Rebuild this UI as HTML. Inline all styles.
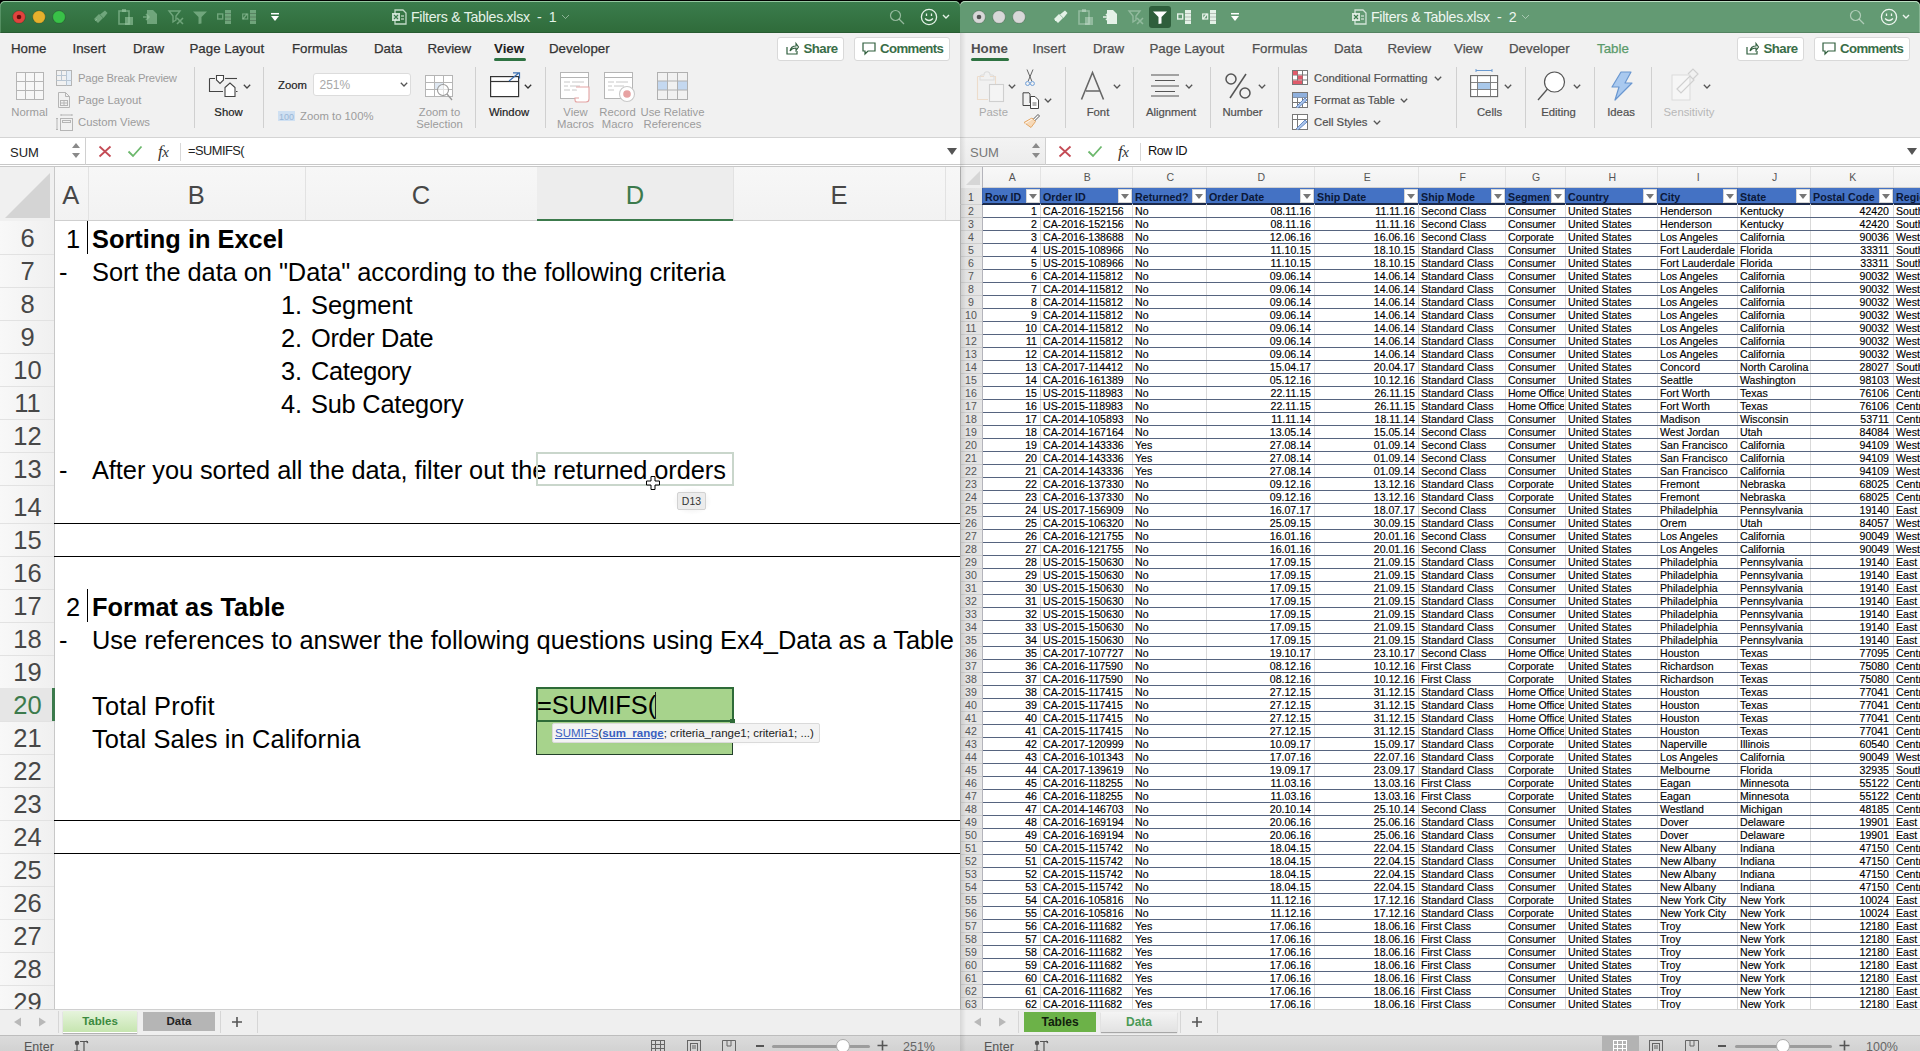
<!DOCTYPE html><html><head><meta charset="utf-8"><style>
html,body{margin:0;padding:0;}
body{width:1920px;height:1051px;overflow:hidden;position:relative;background:#fff;font-family:"Liberation Sans",sans-serif;}
.a{position:absolute;}
.t{position:absolute;white-space:nowrap;line-height:1;}
svg.a{overflow:visible;}
</style></head><body>
<div class="a" style="left:0px;top:0px;width:960px;height:8px;background:#000;"></div>
<div class="a" style="left:0px;top:1px;width:960px;height:32px;background:linear-gradient(#3b7d4d,#2f6b3a);border-radius:5px 5px 0 0;box-shadow:inset 0 1px 0 rgba(180,225,190,0.75), inset 1px 0 0 rgba(150,200,160,0.35);"></div>
<div class="a" style="left:0px;top:32px;width:960px;height:1px;background:rgba(0,0,0,0.15);"></div>
<svg class="a" style="left:12px;top:10px;" width="14" height="14" viewBox="0 0 14 14"><circle cx="7" cy="7" r="6.3" fill="#e0443e" stroke="rgba(0,0,0,0.25)" stroke-width="0.8"/><circle cx="7" cy="7" r="2.3" fill="#6b0b0b"/></svg>
<svg class="a" style="left:32px;top:10px;" width="14" height="14" viewBox="0 0 14 14"><circle cx="7" cy="7" r="6.3" fill="#e6b12d" stroke="rgba(0,0,0,0.25)" stroke-width="0.8"/></svg>
<svg class="a" style="left:52px;top:10px;" width="14" height="14" viewBox="0 0 14 14"><circle cx="7" cy="7" r="6.3" fill="#39c148" stroke="rgba(0,0,0,0.25)" stroke-width="0.8"/></svg>
<svg class="a" style="left:93px;top:10px;" width="16" height="14" viewBox="0 0 16 14"><path d="M1 9 L6 4 L10 8 L5 13 Z" fill="rgba(160,205,170,0.55)"/><path d="M7 4.5 L12 0.5 L14.5 3 L10.5 8 Z" fill="rgba(160,205,170,0.55)"/><path d="M2 11 L4 9" stroke="rgba(160,205,170,0.55)"/></svg>
<svg class="a" style="left:118px;top:8px;" width="16" height="18" viewBox="0 0 16 18"><rect x="1" y="3" width="10" height="13" fill="none" stroke="rgba(160,205,170,0.55)" stroke-width="1.6"/><rect x="4" y="1" width="4" height="3" fill="rgba(160,205,170,0.55)"/><rect x="7" y="9" width="8" height="8" fill="rgba(160,205,170,0.55)"/></svg>
<svg class="a" style="left:142px;top:9px;" width="16" height="16" viewBox="0 0 16 16"><path d="M5 1 H11 L15 5 V15 H5 Z" fill="rgba(160,205,170,0.55)"/><path d="M1 8 H7 M4 5 L7 8 L4 11" stroke="rgba(160,205,170,0.55)" stroke-width="1.5" fill="none"/></svg>
<svg class="a" style="left:168px;top:10px;" width="16" height="15" viewBox="0 0 16 15"><path d="M1 1 H12 L8 6 V10 L5 12 V6 Z" fill="none" stroke="rgba(160,205,170,0.55)" stroke-width="1.4"/><path d="M9 8 L15 14 M15 8 L9 14" stroke="rgba(160,205,170,0.55)" stroke-width="1.6"/></svg>
<svg class="a" style="left:193px;top:11px;" width="14" height="13" viewBox="0 0 14 13"><path d="M0 0.5 H14 L8.5 6 V12.5 L5.5 13 V6 Z" fill="rgba(160,205,170,0.55)"/></svg>
<svg class="a" style="left:217px;top:10px;" width="15" height="14" viewBox="0 0 15 14"><rect x="0.7" y="4" width="5" height="5" fill="none" stroke="rgba(160,205,170,0.55)" stroke-width="1.4"/><rect x="8" y="0" width="6" height="14" fill="rgba(160,205,170,0.55)"/><path d="M8 3.5H14M8 7H14M8 10.5H14" stroke="rgba(0,0,0,0.25)" stroke-width="0.8"/></svg>
<svg class="a" style="left:242px;top:10px;" width="15" height="14" viewBox="0 0 15 14"><path d="M1 9 L5 4" stroke="rgba(160,205,170,0.55)" stroke-width="1.4"/><rect x="0.7" y="4" width="5" height="5" fill="none" stroke="rgba(160,205,170,0.55)" stroke-width="1.2"/><rect x="8" y="0" width="6" height="14" fill="rgba(160,205,170,0.55)"/><path d="M8 3.5H14M8 7H14M8 10.5H14" stroke="rgba(0,0,0,0.25)" stroke-width="0.8"/></svg>
<svg class="a" style="left:271px;top:13px;" width="8" height="9" viewBox="0 0 8 9"><path d="M0 0.7 H8" stroke="#fff" stroke-width="1.5"/><path d="M0 3 H8 L4 8 Z" fill="#fff"/></svg>
<svg class="a" style="left:391px;top:9px;" width="16" height="16" viewBox="0 0 16 16"><path d="M4 1 H12 L15 4 V15 H4 Z" fill="none" stroke="#e4f2e7" stroke-width="1.3" opacity="0.8"/><rect x="1" y="4" width="8" height="8" fill="#e4f2e7" opacity="0.85"/><path d="M3 6 L7 10 M7 6 L3 10" stroke="#3b7d4d" stroke-width="1.2"/><path d="M10 7 H13 M10 10 H13" stroke="#e4f2e7" stroke-width="1"/></svg>
<div class="t" style="left:411px;top:10.48px;font-size:14.2px;color:#e4f2e7;font-weight:normal;letter-spacing:-0.3px;">Filters &amp; Tables.xlsx&nbsp; -&nbsp; 1</div>
<svg class="a" style="left:561px;top:14px;" width="9" height="6" viewBox="0 0 9 6"><path d="M1 1 L4.5 4.5 L8 1" stroke="#e4f2e7" stroke-width="1" fill="none" opacity="0.5"/></svg>
<svg class="a" style="left:889px;top:9px;" width="16" height="16" viewBox="0 0 16 16"><circle cx="6.5" cy="6.5" r="5" fill="none" stroke="#e4f2e7" stroke-width="1.2" opacity="0.55"/><path d="M10 10 L15 15" stroke="#e4f2e7" stroke-width="1.3" opacity="0.55"/></svg>
<svg class="a" style="left:920px;top:8px;" width="18" height="18" viewBox="0 0 18 18"><circle cx="9" cy="9" r="7.6" fill="none" stroke="#e4f2e7" stroke-width="1.3"/><path d="M6.5 5.5 V8 M11.5 5.5 V8" stroke="#e4f2e7" stroke-width="1.3"/><path d="M5 10.5 Q9 14.5 13 10.5" stroke="#e4f2e7" stroke-width="1.3" fill="none"/></svg>
<svg class="a" style="left:942px;top:14px;" width="8" height="6" viewBox="0 0 8 6"><path d="M1 1 L4 4 L7 1" stroke="#e4f2e7" stroke-width="1.4" fill="none"/></svg>
<div class="a" style="left:0px;top:33px;width:960px;height:105px;background:#f1f1f1;"></div>
<div class="a" style="left:0px;top:137px;width:960px;height:1px;background:#d4d4d4;"></div>
<div class="t" style="left:11px;top:41.74px;font-size:13.3px;color:#333333;font-weight:normal;-webkit-text-stroke:0.25px #333333;">Home</div>
<div class="t" style="left:72.5px;top:41.74px;font-size:13.3px;color:#333333;font-weight:normal;-webkit-text-stroke:0.25px #333333;">Insert</div>
<div class="t" style="left:133px;top:41.74px;font-size:13.3px;color:#333333;font-weight:normal;-webkit-text-stroke:0.25px #333333;">Draw</div>
<div class="t" style="left:189.5px;top:41.74px;font-size:13.3px;color:#333333;font-weight:normal;-webkit-text-stroke:0.25px #333333;">Page Layout</div>
<div class="t" style="left:292px;top:41.74px;font-size:13.3px;color:#333333;font-weight:normal;-webkit-text-stroke:0.25px #333333;">Formulas</div>
<div class="t" style="left:374px;top:41.74px;font-size:13.3px;color:#333333;font-weight:normal;-webkit-text-stroke:0.25px #333333;">Data</div>
<div class="t" style="left:427.5px;top:41.74px;font-size:13.3px;color:#333333;font-weight:normal;-webkit-text-stroke:0.25px #333333;">Review</div>
<div class="t" style="left:494px;top:41.74px;font-size:13.3px;color:#222;font-weight:bold;">View</div>
<div class="t" style="left:549px;top:41.74px;font-size:13.3px;color:#333333;font-weight:normal;-webkit-text-stroke:0.25px #333333;">Developer</div>
<div class="a" style="left:777px;top:37px;width:66.5px;height:24px;background:#fff;border:1px solid #d9d9d9;border-radius:3px;box-sizing:border-box;"></div>
<svg class="a" style="left:786px;top:42px;" width="13" height="13" viewBox="0 0 13 13"><path d="M1 5 V12 H11 V9" stroke="#2f5e3c" stroke-width="1.2" fill="none"/><path d="M4 9 Q5 4 10 4 V1.5 L12.5 5 L10 8.5 V6 Q6 6 4 9 Z" fill="none" stroke="#2f5e3c" stroke-width="1.1"/></svg>
<div class="t" style="left:803.5px;top:41.83px;font-size:13.2px;color:#3a6e48;font-weight:bold;letter-spacing:-0.5px;">Share</div>
<div class="a" style="left:854px;top:37px;width:96px;height:24px;background:#fff;border:1px solid #d9d9d9;border-radius:3px;box-sizing:border-box;"></div>
<svg class="a" style="left:862px;top:42px;" width="14" height="13" viewBox="0 0 14 13"><path d="M1 1 H13 V9 H6 L3 12 V9 H1 Z" stroke="#2f5e3c" stroke-width="1.2" fill="none"/></svg>
<div class="t" style="left:880px;top:41.83px;font-size:13.2px;color:#3a6e48;font-weight:bold;letter-spacing:-0.6px;">Comments</div>
<div class="a" style="left:494px;top:58px;width:31.5px;height:2.8px;background:#2e7342;border-radius:1.5px;"></div>
<svg class="a" style="left:16px;top:72px;" width="28" height="28" viewBox="0 0 28 28"><rect x="0.5" y="0.5" width="27" height="27" fill="#f7f7f7" stroke="#b5b5b5"/><path d="M9.5 0.5V27.5M18.5 0.5V27.5M0.5 9.5H27.5M0.5 18.5H27.5" stroke="#b5b5b5"/></svg>
<div class="t" style="left:-270.5px;width:600px;text-align:center;top:107.43px;font-size:11.3px;color:#9c9c9c;font-weight:normal;">Normal</div>
<svg class="a" style="left:56px;top:70px;" width="16" height="16" viewBox="0 0 16 16"><rect x="11" y="1" width="4.5" height="14" fill="#e3edf7"/><rect x="0.5" y="0.5" width="15" height="15" fill="none" stroke="#b5b5b5"/><path d="M5.5 0.5V10.5M10.5 0.5V15.5M0.5 5.5H10.5M0.5 10.5H15.5" stroke="#b9c6d3"/></svg>
<div class="t" style="left:78px;top:72.93px;font-size:11.3px;color:#9c9c9c;font-weight:normal;letter-spacing:-0.2px;">Page Break Preview</div>
<svg class="a" style="left:58px;top:92px;" width="12" height="16" viewBox="0 0 12 16"><path d="M0.5 0.5H7.5L11.5 4.5V15.5H0.5Z" fill="none" stroke="#b5b5b5"/><path d="M7.5 0.5V4.5H11.5" fill="none" stroke="#b5b5b5"/><rect x="2.5" y="8.5" width="7" height="5" fill="none" stroke="#b5b5b5"/><path d="M6 8.5V13.5M2.5 11H9.5" stroke="#b5b5b5"/></svg>
<div class="t" style="left:78px;top:94.93px;font-size:11.3px;color:#9c9c9c;font-weight:normal;">Page Layout</div>
<svg class="a" style="left:56px;top:113px;" width="17" height="18" viewBox="0 0 17 18"><path d="M1 5V17M0 5.5H2M0 16.5H2" stroke="#b5b5b5"/><path d="M5 1V3M16 1V3M5 2H16" stroke="#b5b5b5"/><rect x="4.5" y="5.5" width="12" height="12" fill="none" stroke="#b5b5b5"/><rect x="6.5" y="7.5" width="8" height="2" fill="none" stroke="#b5b5b5"/></svg>
<div class="t" style="left:78px;top:116.93px;font-size:11.3px;color:#9c9c9c;font-weight:normal;">Custom Views</div>
<div class="a" style="left:194px;top:67px;width:1px;height:61px;background:#d0d0d0;"></div>
<svg class="a" style="left:209px;top:75px;" width="29" height="23" viewBox="0 0 29 23"><path d="M0.5 3.5V16.5H14" stroke="#444" fill="none" stroke-width="1.1"/><path d="M7.5 0.5H14.5V5L11 8.5L7.5 5Z" fill="#fff" stroke="#444" stroke-width="1.1"/><path d="M16 3.5H28" stroke="#444" stroke-width="1.1"/><path d="M16 12.5 L21 8 L26 12.5V21.5H16Z" fill="#fff" stroke="#444" stroke-width="1.1"/><path d="M27 16.5H28.5M0.5 3.5H6" stroke="#444" stroke-width="1.1"/></svg>
<svg class="a" style="left:243px;top:83.5px;" width="8" height="5" viewBox="0 0 8 5"><path d="M0.8 0.8 L4 4 L7.2 0.8" stroke="#444" stroke-width="1.3" fill="none"/></svg>
<div class="t" style="left:-71.5px;width:600px;text-align:center;top:107.43px;font-size:11.3px;color:#222;font-weight:normal;-webkit-text-stroke:0.2px #222;">Show</div>
<div class="a" style="left:263px;top:67px;width:1px;height:61px;background:#d0d0d0;"></div>
<div class="t" style="left:278px;top:79.93px;font-size:11.3px;color:#222;font-weight:normal;-webkit-text-stroke:0.2px #222;">Zoom</div>
<div class="a" style="left:313px;top:72.5px;width:98px;height:23px;background:#fff;border:1px solid #dcdcdc;border-radius:3px;box-sizing:border-box;"></div>
<div class="t" style="left:319.5px;top:78.84px;font-size:12px;color:#a8a8a8;font-weight:normal;">251%</div>
<svg class="a" style="left:400px;top:82.0px;" width="8" height="5" viewBox="0 0 8 5"><path d="M0.8 0.8 L4 4 L7.2 0.8" stroke="#555" stroke-width="1.3" fill="none"/></svg>
<svg class="a" style="left:277.5px;top:111px;" width="17" height="10" viewBox="0 0 17 10"><rect x="0" y="0" width="17" height="10" fill="#cfe0f2"/><text x="8.5" y="8.5" font-size="9" text-anchor="middle" fill="#9ab6d6" font-family="Liberation Sans">100</text></svg>
<div class="t" style="left:300px;top:111.43px;font-size:11.3px;color:#9c9c9c;font-weight:normal;">Zoom to 100%</div>
<svg class="a" style="left:425px;top:75px;" width="31" height="27" viewBox="0 0 31 27"><rect x="0.5" y="0.5" width="27" height="21" fill="#fff" stroke="#b5b5b5"/><path d="M9.5 0.5V21.5M18.5 0.5V21.5M0.5 7.5H27.5M0.5 14.5H27.5" stroke="#b5b5b5"/><rect x="10" y="8" width="8" height="6" fill="#dfe8f2"/><circle cx="18" cy="15" r="5.5" fill="rgba(255,255,255,0.6)" stroke="#999" stroke-width="1.1"/><path d="M22 19 L27 25" stroke="#999" stroke-width="1.3"/></svg>
<div class="t" style="left:139.5px;width:600px;text-align:center;top:107.43px;font-size:11.3px;color:#9c9c9c;font-weight:normal;">Zoom to</div>
<div class="t" style="left:139.5px;width:600px;text-align:center;top:119.43px;font-size:11.3px;color:#9c9c9c;font-weight:normal;">Selection</div>
<div class="a" style="left:475px;top:67px;width:1px;height:61px;background:#d0d0d0;"></div>
<svg class="a" style="left:490px;top:72px;" width="31" height="26" viewBox="0 0 31 26"><rect x="0.6" y="4.6" width="28" height="20" fill="#fff" stroke="#333" stroke-width="1.2"/><path d="M0.6 9.5H28.6" stroke="#333" stroke-width="1.2"/><path d="M19 9 L29 0.8 M23 0.8 H29.5 V6.5" stroke="#3a6fb0" stroke-width="1.2" fill="none"/></svg>
<svg class="a" style="left:524px;top:83.5px;" width="8" height="5" viewBox="0 0 8 5"><path d="M0.8 0.8 L4 4 L7.2 0.8" stroke="#333" stroke-width="1.3" fill="none"/></svg>
<div class="t" style="left:209px;width:600px;text-align:center;top:107.43px;font-size:11.3px;color:#222;font-weight:normal;-webkit-text-stroke:0.2px #222;">Window</div>
<div class="a" style="left:544.5px;top:67px;width:1px;height:61px;background:#d0d0d0;"></div>
<svg class="a" style="left:560px;top:72px;" width="32" height="31" viewBox="0 0 32 31"><rect x="0.5" y="0.5" width="28" height="26" fill="#fff" stroke="#b5b5b5"/><path d="M0.5 5.5H28.5" stroke="#b5b5b5"/><path d="M4 10H10M12 10H24M4 14H8M10 14H20M4 18H10M12 18H22" stroke="#c8c8c8"/><path d="M16 15 H29 V27 Q29 30 26 30 H17 Q15 30 15 28 V26 H19" fill="#fff" stroke="#e3a3a3" stroke-width="1.1"/></svg>
<div class="t" style="left:275.5px;width:600px;text-align:center;top:107.43px;font-size:11.3px;color:#9c9c9c;font-weight:normal;">View</div>
<div class="t" style="left:275.5px;width:600px;text-align:center;top:119.43px;font-size:11.3px;color:#9c9c9c;font-weight:normal;">Macros</div>
<svg class="a" style="left:604px;top:72px;" width="32" height="31" viewBox="0 0 32 31"><rect x="0.5" y="0.5" width="28" height="26" fill="#fff" stroke="#b5b5b5"/><path d="M0.5 5.5H28.5" stroke="#b5b5b5"/><path d="M4 10H10M12 10H24M4 14H8M10 14H20M4 18H10" stroke="#c8c8c8"/><circle cx="23" cy="22" r="7.5" fill="#fff" stroke="#c9c9c9" stroke-width="1.1"/><circle cx="23" cy="22" r="3.8" fill="#e7a2a2"/></svg>
<div class="t" style="left:317.5px;width:600px;text-align:center;top:107.43px;font-size:11.3px;color:#9c9c9c;font-weight:normal;">Record</div>
<div class="t" style="left:317.5px;width:600px;text-align:center;top:119.43px;font-size:11.3px;color:#9c9c9c;font-weight:normal;">Macro</div>
<svg class="a" style="left:657px;top:72px;" width="31" height="28" viewBox="0 0 31 28"><rect x="0.5" y="9" width="10" height="9" fill="#c4d8f0"/><rect x="20.5" y="9" width="10" height="9" fill="#c4d8f0"/><rect x="0.5" y="0.5" width="30" height="27" fill="none" stroke="#b0b0b0"/><path d="M10.5 0.5V27.5M20.5 0.5V27.5M0.5 9H30.5M0.5 18H30.5" stroke="#b0b0b0"/></svg>
<div class="t" style="left:372.5px;width:600px;text-align:center;top:107.43px;font-size:11.3px;color:#9c9c9c;font-weight:normal;">Use Relative</div>
<div class="t" style="left:372.5px;width:600px;text-align:center;top:119.43px;font-size:11.3px;color:#9c9c9c;font-weight:normal;">References</div>
<div class="a" style="left:0px;top:138px;width:960px;height:27px;background:#fff;"></div>
<div class="a" style="left:0px;top:164px;width:960px;height:1px;background:#c8c8c8;"></div>
<div class="a" style="left:0px;top:166px;width:960px;height:1px;background:#c8c8c8;"></div>
<div class="a" style="left:85px;top:138px;width:1px;height:27px;background:#d0d0d0;"></div>
<div class="t" style="left:10px;top:146.00px;font-size:13px;color:#222;font-weight:normal;">SUM</div>
<svg class="a" style="left:71px;top:142px;" width="10" height="18" viewBox="0 0 10 18"><path d="M1 6 L5 1 L9 6 Z M1 11 L5 16 L9 11 Z" fill="#8a8a8a"/></svg>
<svg class="a" style="left:98px;top:145px;" width="14" height="13" viewBox="0 0 14 13"><path d="M1.5 1.5 L12.5 11.5 M12.5 1.5 L1.5 11.5" stroke="#c44b55" stroke-width="1.8"/></svg>
<svg class="a" style="left:127px;top:145px;" width="16" height="13" viewBox="0 0 16 13"><path d="M1.5 6.5 L6 11 L14.5 1.5" stroke="#6cb86c" stroke-width="1.8" fill="none"/></svg>
<div class="t" style="left:158px;top:143.11px;font-size:17px;color:#333;font-weight:normal;font-family:'Liberation Serif',serif;letter-spacing:-0.5px;"><i>f</i><i style="font-size:15px">x</i></div>
<div class="a" style="left:180px;top:143px;width:1px;height:18px;background:#d8d8d8;"></div>
<div class="t" style="left:188px;top:145.36px;font-size:12.8px;color:#222;font-weight:normal;letter-spacing:-0.5px;">=SUMIFS(</div>
<svg class="a" style="left:947px;top:148px;" width="10" height="7" viewBox="0 0 10 7"><path d="M0 0 H10 L5 7 Z" fill="#555"/></svg>
<div class="a" style="left:0px;top:167px;width:960px;height:54px;background:linear-gradient(#f7f7f7,#f2f2f2);"></div>
<div class="a" style="left:0px;top:220px;width:960px;height:1px;background:#cfcfcf;"></div>
<div class="a" style="left:0px;top:167px;width:54px;height:54px;background:#f0f0f0;"></div>
<svg class="a" style="left:2px;top:171px;" width="50" height="48" viewBox="0 0 50 48"><path d="M48 2 V47 H3 Z" fill="#d4d4d4"/></svg>
<div class="a" style="left:54px;top:167px;width:1px;height:842px;background:#c8c8c8;"></div>
<div class="a" style="left:87.5px;top:167px;width:1px;height:53px;background:#e2e2e2;"></div>
<div class="t" style="left:-229.25px;width:600px;text-align:center;top:183.41px;font-size:25.5px;color:#474747;font-weight:normal;">A</div>
<div class="a" style="left:305px;top:167px;width:1px;height:53px;background:#e2e2e2;"></div>
<div class="t" style="left:-103.75px;width:600px;text-align:center;top:183.41px;font-size:25.5px;color:#474747;font-weight:normal;">B</div>
<div class="a" style="left:537px;top:167px;width:1px;height:53px;background:#e2e2e2;"></div>
<div class="t" style="left:121.0px;width:600px;text-align:center;top:183.41px;font-size:25.5px;color:#474747;font-weight:normal;">C</div>
<div class="a" style="left:537px;top:167px;width:196px;height:53px;background:#ededed;"></div>
<div class="a" style="left:537px;top:219px;width:196px;height:2px;background:#3c7a4c;"></div>
<div class="a" style="left:733px;top:167px;width:1px;height:53px;background:#e2e2e2;"></div>
<div class="t" style="left:335.0px;width:600px;text-align:center;top:183.41px;font-size:25.5px;color:#3c7a4c;font-weight:normal;">D</div>
<div class="a" style="left:945px;top:167px;width:1px;height:53px;background:#e2e2e2;"></div>
<div class="t" style="left:539.0px;width:600px;text-align:center;top:183.41px;font-size:25.5px;color:#474747;font-weight:normal;">E</div>
<div class="a" style="left:0px;top:221px;width:54px;height:788px;background:linear-gradient(90deg,#f8f8f8,#f0f0f0);"></div>
<div class="a" style="left:0px;top:254px;width:54px;height:1px;background:#e2e2e2;"></div>
<div class="t" style="left:-272.5px;width:600px;text-align:center;top:225.91px;font-size:25.5px;color:#474747;font-weight:normal;">6</div>
<div class="a" style="left:0px;top:287px;width:54px;height:1px;background:#e2e2e2;"></div>
<div class="t" style="left:-272.5px;width:600px;text-align:center;top:258.91px;font-size:25.5px;color:#474747;font-weight:normal;">7</div>
<div class="a" style="left:0px;top:320px;width:54px;height:1px;background:#e2e2e2;"></div>
<div class="t" style="left:-272.5px;width:600px;text-align:center;top:291.91px;font-size:25.5px;color:#474747;font-weight:normal;">8</div>
<div class="a" style="left:0px;top:353px;width:54px;height:1px;background:#e2e2e2;"></div>
<div class="t" style="left:-272.5px;width:600px;text-align:center;top:324.91px;font-size:25.5px;color:#474747;font-weight:normal;">9</div>
<div class="a" style="left:0px;top:386px;width:54px;height:1px;background:#e2e2e2;"></div>
<div class="t" style="left:-272.5px;width:600px;text-align:center;top:357.91px;font-size:25.5px;color:#474747;font-weight:normal;">10</div>
<div class="a" style="left:0px;top:419px;width:54px;height:1px;background:#e2e2e2;"></div>
<div class="t" style="left:-272.5px;width:600px;text-align:center;top:390.91px;font-size:25.5px;color:#474747;font-weight:normal;">11</div>
<div class="a" style="left:0px;top:452px;width:54px;height:1px;background:#e2e2e2;"></div>
<div class="t" style="left:-272.5px;width:600px;text-align:center;top:423.91px;font-size:25.5px;color:#474747;font-weight:normal;">12</div>
<div class="a" style="left:0px;top:485px;width:54px;height:1px;background:#e2e2e2;"></div>
<div class="t" style="left:-272.5px;width:600px;text-align:center;top:456.91px;font-size:25.5px;color:#474747;font-weight:normal;">13</div>
<div class="a" style="left:0px;top:523px;width:54px;height:1px;background:#e2e2e2;"></div>
<div class="t" style="left:-272.5px;width:600px;text-align:center;top:494.91px;font-size:25.5px;color:#474747;font-weight:normal;">14</div>
<div class="a" style="left:0px;top:556px;width:54px;height:1px;background:#e2e2e2;"></div>
<div class="t" style="left:-272.5px;width:600px;text-align:center;top:527.91px;font-size:25.5px;color:#474747;font-weight:normal;">15</div>
<div class="a" style="left:0px;top:589px;width:54px;height:1px;background:#e2e2e2;"></div>
<div class="t" style="left:-272.5px;width:600px;text-align:center;top:560.91px;font-size:25.5px;color:#474747;font-weight:normal;">16</div>
<div class="a" style="left:0px;top:622px;width:54px;height:1px;background:#e2e2e2;"></div>
<div class="t" style="left:-272.5px;width:600px;text-align:center;top:593.91px;font-size:25.5px;color:#474747;font-weight:normal;">17</div>
<div class="a" style="left:0px;top:655px;width:54px;height:1px;background:#e2e2e2;"></div>
<div class="t" style="left:-272.5px;width:600px;text-align:center;top:626.91px;font-size:25.5px;color:#474747;font-weight:normal;">18</div>
<div class="a" style="left:0px;top:688px;width:54px;height:1px;background:#e2e2e2;"></div>
<div class="t" style="left:-272.5px;width:600px;text-align:center;top:659.91px;font-size:25.5px;color:#474747;font-weight:normal;">19</div>
<div class="a" style="left:0px;top:721px;width:54px;height:1px;background:#e2e2e2;"></div>
<div class="a" style="left:0px;top:688px;width:54px;height:33px;background:#e6e6e6;"></div>
<div class="a" style="left:52px;top:688px;width:2.5px;height:33px;background:#3c7a4c;"></div>
<div class="t" style="left:-272.5px;width:600px;text-align:center;top:692.91px;font-size:25.5px;color:#3c7a4c;font-weight:normal;">20</div>
<div class="a" style="left:0px;top:754px;width:54px;height:1px;background:#e2e2e2;"></div>
<div class="t" style="left:-272.5px;width:600px;text-align:center;top:725.91px;font-size:25.5px;color:#474747;font-weight:normal;">21</div>
<div class="a" style="left:0px;top:787px;width:54px;height:1px;background:#e2e2e2;"></div>
<div class="t" style="left:-272.5px;width:600px;text-align:center;top:758.91px;font-size:25.5px;color:#474747;font-weight:normal;">22</div>
<div class="a" style="left:0px;top:820px;width:54px;height:1px;background:#e2e2e2;"></div>
<div class="t" style="left:-272.5px;width:600px;text-align:center;top:791.91px;font-size:25.5px;color:#474747;font-weight:normal;">23</div>
<div class="a" style="left:0px;top:853px;width:54px;height:1px;background:#e2e2e2;"></div>
<div class="t" style="left:-272.5px;width:600px;text-align:center;top:824.91px;font-size:25.5px;color:#474747;font-weight:normal;">24</div>
<div class="a" style="left:0px;top:886px;width:54px;height:1px;background:#e2e2e2;"></div>
<div class="t" style="left:-272.5px;width:600px;text-align:center;top:857.91px;font-size:25.5px;color:#474747;font-weight:normal;">25</div>
<div class="a" style="left:0px;top:919px;width:54px;height:1px;background:#e2e2e2;"></div>
<div class="t" style="left:-272.5px;width:600px;text-align:center;top:890.91px;font-size:25.5px;color:#474747;font-weight:normal;">26</div>
<div class="a" style="left:0px;top:952px;width:54px;height:1px;background:#e2e2e2;"></div>
<div class="t" style="left:-272.5px;width:600px;text-align:center;top:923.91px;font-size:25.5px;color:#474747;font-weight:normal;">27</div>
<div class="a" style="left:0px;top:985px;width:54px;height:1px;background:#e2e2e2;"></div>
<div class="t" style="left:-272.5px;width:600px;text-align:center;top:956.91px;font-size:25.5px;color:#474747;font-weight:normal;">28</div>
<div class="a" style="left:0px;top:1018px;width:54px;height:1px;background:#e2e2e2;"></div>
<div class="t" style="left:-272.5px;width:600px;text-align:center;top:989.91px;font-size:25.5px;color:#474747;font-weight:normal;">29</div>
<div class="t" style="left:-520px;width:600px;text-align:right;top:226.50px;font-size:25.4px;color:#000;font-weight:normal;">1</div>
<div class="a" style="left:87px;top:221px;width:1.3px;height:33px;background:#000;"></div>
<div class="t" style="left:92px;top:226.50px;font-size:25.4px;color:#000;font-weight:bold;">Sorting in Excel</div>
<div class="t" style="left:59px;top:259.50px;font-size:25.4px;color:#000;font-weight:normal;">-</div>
<div class="t" style="left:92px;top:259.50px;font-size:25.4px;color:#000;font-weight:normal;letter-spacing:-0.05px;">Sort the data on "Data" according to the following criteria</div>
<div class="t" style="left:281px;top:292.50px;font-size:25.4px;color:#000;font-weight:normal;">1.</div>
<div class="t" style="left:311px;top:292.50px;font-size:25.4px;color:#000;font-weight:normal;letter-spacing:0px;">Segment</div>
<div class="t" style="left:281px;top:325.50px;font-size:25.4px;color:#000;font-weight:normal;">2.</div>
<div class="t" style="left:311px;top:325.50px;font-size:25.4px;color:#000;font-weight:normal;letter-spacing:-0.33px;">Order Date</div>
<div class="t" style="left:281px;top:358.50px;font-size:25.4px;color:#000;font-weight:normal;">3.</div>
<div class="t" style="left:311px;top:358.50px;font-size:25.4px;color:#000;font-weight:normal;letter-spacing:-0.36px;">Category</div>
<div class="t" style="left:281px;top:391.50px;font-size:25.4px;color:#000;font-weight:normal;">4.</div>
<div class="t" style="left:311px;top:391.50px;font-size:25.4px;color:#000;font-weight:normal;letter-spacing:-0.23px;">Sub Category</div>
<div class="t" style="left:59px;top:458.00px;font-size:25.4px;color:#000;font-weight:normal;">-</div>
<div class="t" style="left:92px;top:458.00px;font-size:25.4px;color:#000;font-weight:normal;letter-spacing:-0.067px;">After you sorted all the data, filter out the returned orders</div>
<div class="a" style="left:54px;top:523px;width:906px;height:1.3px;background:#000;"></div>
<div class="a" style="left:54px;top:556px;width:906px;height:1.3px;background:#000;"></div>
<div class="a" style="left:54px;top:820px;width:906px;height:1.3px;background:#000;"></div>
<div class="a" style="left:54px;top:853px;width:906px;height:1.3px;background:#000;"></div>
<div class="t" style="left:-520px;width:600px;text-align:right;top:594.50px;font-size:25.4px;color:#000;font-weight:normal;">2</div>
<div class="a" style="left:87px;top:589px;width:1.3px;height:33px;background:#000;"></div>
<div class="t" style="left:92px;top:594.50px;font-size:25.4px;color:#000;font-weight:bold;">Format as Table</div>
<div class="t" style="left:59px;top:627.50px;font-size:25.4px;color:#000;font-weight:normal;">-</div>
<div class="t" style="left:92px;top:627.50px;font-size:25.4px;color:#000;font-weight:normal;">Use references to answer the following questions using Ex4_Data as a Table</div>
<div class="t" style="left:92px;top:694.00px;font-size:25.4px;color:#000;font-weight:normal;letter-spacing:0.23px;">Total Profit</div>
<div class="t" style="left:92px;top:727.00px;font-size:25.4px;color:#000;font-weight:normal;letter-spacing:0.125px;">Total Sales in California</div>
<div class="a" style="left:535.5px;top:451.5px;width:198px;height:34.5px;border:2px solid #c9d6cb;box-sizing:border-box;"></div>
<svg class="a" style="left:646px;top:476px;" width="14" height="14" viewBox="0 0 14 14"><path d="M5 0.5 H9 V5 H13.5 V9 H9 V13.5 H5 V9 H0.5 V5 H5 Z" fill="#fff" stroke="#000" stroke-width="1"/></svg>
<div class="a" style="left:672px;top:487px;width:40px;height:28px;background:radial-gradient(ellipse at center, rgba(0,0,0,0.10), rgba(0,0,0,0) 70%);"></div>
<div class="a" style="left:677px;top:492px;width:29px;height:18px;background:#ececec;border:1px solid #d2d2d2;box-sizing:border-box;border-radius:2px;"></div>
<div class="t" style="left:391.5px;width:600px;text-align:center;top:496.11px;font-size:10.5px;color:#333;font-weight:normal;">D13</div>
<div class="a" style="left:536px;top:687px;width:197px;height:67.5px;background:#a7d38c;"></div>
<div class="a" style="left:536px;top:721px;width:197px;height:33.5px;border:1.5px solid #22402a;border-top:none;box-sizing:border-box;"></div>
<div class="a" style="left:535.5px;top:687px;width:198px;height:35px;border:2px solid #2e6b38;box-sizing:border-box;"></div>
<div class="a" style="left:730px;top:719px;width:5px;height:5px;background:#2e6b38;"></div>
<div class="t" style="left:537px;top:692.50px;font-size:25.4px;color:#000;font-weight:normal;">=SUMIFS(</div>
<div class="a" style="left:654.5px;top:692px;width:1.2px;height:26px;background:#222;"></div>
<div class="a" style="left:548px;top:720px;width:278px;height:28px;background:radial-gradient(ellipse at center, rgba(0,0,0,0.08), rgba(0,0,0,0) 70%);"></div>
<div class="a" style="left:551.5px;top:723px;width:268.5px;height:19.5px;background:#f3f3f3;border:1px solid #dadada;box-sizing:border-box;border-radius:2px;"></div>
<div class="t" style="left:555px;top:727.77px;font-size:11.5px;color:#222;font-weight:normal;"><span style="color:#3b5fc0;text-decoration:underline;">SUMIFS</span><span style="color:#222">(</span><span style="color:#3b5fc0;font-weight:bold;text-decoration:underline;">sum_range</span><span style="color:#222">; criteria_range1; criteria1; ...)</span></div>
<div class="a" style="left:0px;top:1009px;width:960px;height:26px;background:#efefef;"></div>
<div class="a" style="left:0px;top:1009px;width:960px;height:1px;background:#d0d0d0;"></div>
<svg class="a" style="left:13px;top:1017px;" width="10" height="10" viewBox="0 0 10 10"><path d="M8 0.5 V9.5 L1 5 Z" fill="#b8b8b8"/></svg>
<svg class="a" style="left:37px;top:1017px;" width="10" height="10" viewBox="0 0 10 10"><path d="M2 0.5 V9.5 L9 5 Z" fill="#b8b8b8"/></svg>
<div class="a" style="left:58px;top:1011px;width:1px;height:22px;background:#d6d6d6;"></div>
<div class="a" style="left:63px;top:1011px;width:74px;height:20.5px;background:linear-gradient(#e6f4dc,#c6e5b0);border-bottom:1.5px solid #fff;box-shadow:0 1px 1px rgba(0,0,0,0.25);"></div>
<div class="t" style="left:-200px;width:600px;text-align:center;top:1016.27px;font-size:11.5px;color:#3b8a3e;font-weight:bold;">Tables</div>
<div class="a" style="left:143px;top:1012px;width:72px;height:19px;background:#b5b5b5;"></div>
<div class="t" style="left:-121px;width:600px;text-align:center;top:1016.27px;font-size:11.5px;color:#222;font-weight:bold;">Data</div>
<div class="a" style="left:220px;top:1011px;width:1px;height:22px;background:#d6d6d6;"></div>
<svg class="a" style="left:231px;top:1016px;" width="12" height="12" viewBox="0 0 12 12"><path d="M6 1 V11 M1 6 H11" stroke="#555" stroke-width="1.6"/></svg>
<div class="a" style="left:257px;top:1011px;width:1px;height:22px;background:#d6d6d6;"></div>
<div class="a" style="left:0px;top:1035px;width:960px;height:16px;background:linear-gradient(#dcdcdc,#d2d2d2);"></div>
<div class="a" style="left:0px;top:1035px;width:960px;height:1px;background:#bdbdbd;"></div>
<div class="t" style="left:24px;top:1040.92px;font-size:12.5px;color:#555;font-weight:normal;">Enter</div>
<svg class="a" style="left:74px;top:1040px;" width="16" height="12" viewBox="0 0 16 12"><circle cx="3" cy="3" r="2.2" fill="#555"/><path d="M3 5 V12 M0 11 H6 M6 1.5 H14 M10 1.5 V12 M12 1 L14 3" stroke="#555" stroke-width="1.2" fill="none"/></svg>
<svg class="a" style="left:651px;top:1040px;" width="14" height="12" viewBox="0 0 14 12"><rect x="0.5" y="0.5" width="13" height="12" fill="none" stroke="#666"/><path d="M0.5 4.5H13.5M0.5 8.5H13.5M4.5 0.5V12.5M9.5 0.5V12.5" stroke="#666"/></svg>
<svg class="a" style="left:687px;top:1040px;" width="14" height="12" viewBox="0 0 14 12"><rect x="0.5" y="0.5" width="13" height="12" fill="none" stroke="#666"/><rect x="3.5" y="3.5" width="7" height="9" fill="none" stroke="#666"/><path d="M5 6H9M5 8H9" stroke="#666"/></svg>
<svg class="a" style="left:722px;top:1040px;" width="14" height="12" viewBox="0 0 14 12"><path d="M0.5 12V0.5H13.5V12M5 0.5V6H9V0.5" stroke="#666" fill="none"/></svg>
<div class="a" style="left:756px;top:1045px;width:8px;height:1.6px;background:#555;"></div>
<div class="a" style="left:772px;top:1044.5px;width:98px;height:3px;background:#9c9c9c;border-radius:1.5px;"></div>
<svg class="a" style="left:835px;top:1038px;" width="16" height="14" viewBox="0 0 16 14"><circle cx="8" cy="8" r="6.5" fill="#fff" stroke="#aaa"/></svg>
<svg class="a" style="left:877px;top:1040px;" width="11" height="11" viewBox="0 0 11 11"><path d="M5.5 0.5V10.5M0.5 5.5H10.5" stroke="#555" stroke-width="1.6"/></svg>
<div class="t" style="left:903px;top:1040.92px;font-size:12.5px;color:#666;font-weight:normal;">251%</div>
<div class="a" style="left:960px;top:0px;width:960px;height:8px;background:#000;"></div>
<div class="a" style="left:960px;top:1px;width:960px;height:32px;background:#639a73;border-radius:5px 5px 0 0;box-shadow:inset 0 1px 0 rgba(210,240,215,0.8), inset -1px 0 0 rgba(200,235,205,0.35);"></div>
<div class="a" style="left:960px;top:32px;width:960px;height:1px;background:rgba(0,0,0,0.15);"></div>
<svg class="a" style="left:972px;top:10px;" width="14" height="14" viewBox="0 0 14 14"><circle cx="7" cy="7" r="6.3" fill="#d8d8d8" stroke="rgba(0,0,0,0.25)" stroke-width="0.8"/><circle cx="7" cy="7" r="2.3" fill="#555"/></svg>
<svg class="a" style="left:992px;top:10px;" width="14" height="14" viewBox="0 0 14 14"><circle cx="7" cy="7" r="6.3" fill="#d8d8d8" stroke="rgba(0,0,0,0.25)" stroke-width="0.8"/></svg>
<svg class="a" style="left:1012px;top:10px;" width="14" height="14" viewBox="0 0 14 14"><circle cx="7" cy="7" r="6.3" fill="#d8d8d8" stroke="rgba(0,0,0,0.25)" stroke-width="0.8"/></svg>
<svg class="a" style="left:1053px;top:10px;" width="16" height="14" viewBox="0 0 16 14"><path d="M1 9 L6 4 L10 8 L5 13 Z" fill="rgba(235,245,237,0.95)"/><path d="M7 4.5 L12 0.5 L14.5 3 L10.5 8 Z" fill="rgba(235,245,237,0.95)"/><path d="M2 11 L4 9" stroke="rgba(235,245,237,0.95)"/></svg>
<svg class="a" style="left:1078px;top:8px;" width="16" height="18" viewBox="0 0 16 18"><rect x="1" y="3" width="10" height="13" fill="none" stroke="rgba(235,245,237,0.35)" stroke-width="1.6"/><rect x="4" y="1" width="4" height="3" fill="rgba(235,245,237,0.35)"/><rect x="7" y="9" width="8" height="8" fill="rgba(235,245,237,0.35)"/></svg>
<svg class="a" style="left:1102px;top:9px;" width="16" height="16" viewBox="0 0 16 16"><path d="M5 1 H11 L15 5 V15 H5 Z" fill="rgba(235,245,237,0.95)"/><path d="M1 8 H7 M4 5 L7 8 L4 11" stroke="rgba(235,245,237,0.95)" stroke-width="1.5" fill="none"/></svg>
<svg class="a" style="left:1128px;top:10px;" width="16" height="15" viewBox="0 0 16 15"><path d="M1 1 H12 L8 6 V10 L5 12 V6 Z" fill="none" stroke="rgba(235,245,237,0.35)" stroke-width="1.4"/><path d="M9 8 L15 14 M15 8 L9 14" stroke="rgba(235,245,237,0.35)" stroke-width="1.6"/></svg>
<div class="a" style="left:1149px;top:6px;width:22px;height:22px;background:#2f5f3c;border-radius:3px;"></div>
<svg class="a" style="left:1153px;top:11px;" width="14" height="13" viewBox="0 0 14 13"><path d="M0 0.5 H14 L8.5 6 V12.5 L5.5 13 V6 Z" fill="#ffffff"/></svg>
<svg class="a" style="left:1177px;top:10px;" width="15" height="14" viewBox="0 0 15 14"><rect x="0.7" y="4" width="5" height="5" fill="none" stroke="rgba(235,245,237,0.95)" stroke-width="1.4"/><rect x="8" y="0" width="6" height="14" fill="rgba(235,245,237,0.95)"/><path d="M8 3.5H14M8 7H14M8 10.5H14" stroke="rgba(0,0,0,0.25)" stroke-width="0.8"/></svg>
<svg class="a" style="left:1202px;top:10px;" width="15" height="14" viewBox="0 0 15 14"><path d="M1 9 L5 4" stroke="rgba(235,245,237,0.95)" stroke-width="1.4"/><rect x="0.7" y="4" width="5" height="5" fill="none" stroke="rgba(235,245,237,0.95)" stroke-width="1.2"/><rect x="8" y="0" width="6" height="14" fill="rgba(235,245,237,0.95)"/><path d="M8 3.5H14M8 7H14M8 10.5H14" stroke="rgba(0,0,0,0.25)" stroke-width="0.8"/></svg>
<svg class="a" style="left:1231px;top:13px;" width="8" height="9" viewBox="0 0 8 9"><path d="M0 0.7 H8" stroke="#fff" stroke-width="1.5"/><path d="M0 3 H8 L4 8 Z" fill="#fff"/></svg>
<svg class="a" style="left:1351px;top:9px;" width="16" height="16" viewBox="0 0 16 16"><path d="M4 1 H12 L15 4 V15 H4 Z" fill="none" stroke="#eef6f0" stroke-width="1.3" opacity="0.8"/><rect x="1" y="4" width="8" height="8" fill="#eef6f0" opacity="0.85"/><path d="M3 6 L7 10 M7 6 L3 10" stroke="#3b7d4d" stroke-width="1.2"/><path d="M10 7 H13 M10 10 H13" stroke="#eef6f0" stroke-width="1"/></svg>
<div class="t" style="left:1371px;top:10.48px;font-size:14.2px;color:#eef6f0;font-weight:normal;letter-spacing:-0.3px;">Filters &amp; Tables.xlsx&nbsp; -&nbsp; 2</div>
<svg class="a" style="left:1521px;top:14px;" width="9" height="6" viewBox="0 0 9 6"><path d="M1 1 L4.5 4.5 L8 1" stroke="#eef6f0" stroke-width="1" fill="none" opacity="0.5"/></svg>
<svg class="a" style="left:1849px;top:9px;" width="16" height="16" viewBox="0 0 16 16"><circle cx="6.5" cy="6.5" r="5" fill="none" stroke="#eef6f0" stroke-width="1.2" opacity="0.55"/><path d="M10 10 L15 15" stroke="#eef6f0" stroke-width="1.3" opacity="0.55"/></svg>
<svg class="a" style="left:1880px;top:8px;" width="18" height="18" viewBox="0 0 18 18"><circle cx="9" cy="9" r="7.6" fill="none" stroke="#eef6f0" stroke-width="1.3"/><path d="M6.5 5.5 V8 M11.5 5.5 V8" stroke="#eef6f0" stroke-width="1.3"/><path d="M5 10.5 Q9 14.5 13 10.5" stroke="#eef6f0" stroke-width="1.3" fill="none"/></svg>
<svg class="a" style="left:1902px;top:14px;" width="8" height="6" viewBox="0 0 8 6"><path d="M1 1 L4 4 L7 1" stroke="#eef6f0" stroke-width="1.4" fill="none"/></svg>
<div class="a" style="left:960px;top:33px;width:960px;height:105px;background:#f1f1f1;"></div>
<div class="a" style="left:960px;top:137px;width:960px;height:1px;background:#d4d4d4;"></div>
<div class="t" style="left:971px;top:41.74px;font-size:13.3px;color:#505050;font-weight:bold;">Home</div>
<div class="t" style="left:1032.5px;top:41.74px;font-size:13.3px;color:#505050;font-weight:normal;-webkit-text-stroke:0.25px #505050;">Insert</div>
<div class="t" style="left:1093px;top:41.74px;font-size:13.3px;color:#505050;font-weight:normal;-webkit-text-stroke:0.25px #505050;">Draw</div>
<div class="t" style="left:1149.5px;top:41.74px;font-size:13.3px;color:#505050;font-weight:normal;-webkit-text-stroke:0.25px #505050;">Page Layout</div>
<div class="t" style="left:1252px;top:41.74px;font-size:13.3px;color:#505050;font-weight:normal;-webkit-text-stroke:0.25px #505050;">Formulas</div>
<div class="t" style="left:1334px;top:41.74px;font-size:13.3px;color:#505050;font-weight:normal;-webkit-text-stroke:0.25px #505050;">Data</div>
<div class="t" style="left:1387.5px;top:41.74px;font-size:13.3px;color:#505050;font-weight:normal;-webkit-text-stroke:0.25px #505050;">Review</div>
<div class="t" style="left:1454px;top:41.74px;font-size:13.3px;color:#505050;font-weight:normal;-webkit-text-stroke:0.25px #505050;">View</div>
<div class="t" style="left:1509px;top:41.74px;font-size:13.3px;color:#505050;font-weight:normal;-webkit-text-stroke:0.25px #505050;">Developer</div>
<div class="t" style="left:1597px;top:41.74px;font-size:13.3px;color:#5a9a6a;font-weight:normal;-webkit-text-stroke:0.25px #5a9a6a;">Table</div>
<div class="a" style="left:1737px;top:37px;width:66.5px;height:24px;background:#fff;border:1px solid #d9d9d9;border-radius:3px;box-sizing:border-box;"></div>
<svg class="a" style="left:1746px;top:42px;" width="13" height="13" viewBox="0 0 13 13"><path d="M1 5 V12 H11 V9" stroke="#2f5e3c" stroke-width="1.2" fill="none"/><path d="M4 9 Q5 4 10 4 V1.5 L12.5 5 L10 8.5 V6 Q6 6 4 9 Z" fill="none" stroke="#2f5e3c" stroke-width="1.1"/></svg>
<div class="t" style="left:1763.5px;top:41.83px;font-size:13.2px;color:#3a6e48;font-weight:bold;letter-spacing:-0.5px;">Share</div>
<div class="a" style="left:1814px;top:37px;width:96px;height:24px;background:#fff;border:1px solid #d9d9d9;border-radius:3px;box-sizing:border-box;"></div>
<svg class="a" style="left:1822px;top:42px;" width="14" height="13" viewBox="0 0 14 13"><path d="M1 1 H13 V9 H6 L3 12 V9 H1 Z" stroke="#2f5e3c" stroke-width="1.2" fill="none"/></svg>
<div class="t" style="left:1840px;top:41.83px;font-size:13.2px;color:#3a6e48;font-weight:bold;letter-spacing:-0.6px;">Comments</div>
<div class="a" style="left:971px;top:58px;width:38px;height:2.8px;background:#2e7342;border-radius:1.5px;"></div>
<svg class="a" style="left:976px;top:71px;" width="32" height="32" viewBox="0 0 32 32"><path d="M1.5 5.5 H8 M14 5.5 H19.5 V13 M1.5 5.5 V28.5 H12" fill="none" stroke="#eddccb" stroke-width="1.1"/><path d="M4 9 V6 Q4 4 6 4 H8 Q8 0.8 11 0.8 Q14 0.8 14 4 H16 Q18 4 18 6 V9 Z" fill="none" stroke="#dcdcdc" stroke-width="1.1"/><rect x="13.5" y="13.5" width="14" height="17" fill="#f4f4f4" stroke="#cfcfcf" stroke-width="1.1"/></svg>
<svg class="a" style="left:1008px;top:83.5px;" width="8" height="5" viewBox="0 0 8 5"><path d="M0.8 0.8 L4 4 L7.2 0.8" stroke="#555" stroke-width="1.3" fill="none"/></svg>
<div class="t" style="left:693.5px;width:600px;text-align:center;top:107.43px;font-size:11.3px;color:#ababab;font-weight:normal;">Paste</div>
<svg class="a" style="left:1024px;top:69px;" width="12" height="18" viewBox="0 0 12 18"><path d="M3 0.5 L7.8 12 M9 0.5 L4.2 12" stroke="#555" stroke-width="0.9"/><circle cx="3.6" cy="14.5" r="2" fill="none" stroke="#6f9fd8" stroke-width="1"/><circle cx="8.4" cy="14.5" r="2" fill="none" stroke="#6f9fd8" stroke-width="1"/></svg>
<svg class="a" style="left:1022px;top:92px;" width="18" height="18" viewBox="0 0 18 18"><path d="M1 0.8 H7 L8 2 V11 M1 0.8 V13.5 H9" fill="none" stroke="#444" stroke-width="1"/><path d="M8.5 4.5 H13 L16.5 8 V16.5 H8.5 Z" fill="#fff" stroke="#444" stroke-width="1"/><path d="M10.5 11 H14.5 M10.5 13 H14.5" stroke="#444" stroke-width="0.8"/></svg>
<svg class="a" style="left:1044px;top:97.5px;" width="8" height="5" viewBox="0 0 8 5"><path d="M0.8 0.8 L4 4 L7.2 0.8" stroke="#555" stroke-width="1.3" fill="none"/></svg>
<svg class="a" style="left:1023px;top:113px;" width="17" height="16" viewBox="0 0 17 16"><path d="M10 6.5 L15 1.5 L16.5 3 L11.5 8" fill="#fff" stroke="#555" stroke-width="1"/><path d="M9 5 L12.5 8.5 L8 14.5 L1 9.5 Z" fill="#f6d9b8" stroke="#e4a766" stroke-width="1"/><path d="M2 10.5 L9 6" stroke="#fff" stroke-width="0.8"/></svg>
<div class="a" style="left:1064.5px;top:67px;width:1px;height:61px;background:#d0d0d0;"></div>
<svg class="a" style="left:1080px;top:71px;" width="25" height="29" viewBox="0 0 25 29"><path d="M1.5 28.5 L12.5 1.5 L23.5 28.5 M6 20 H19.5" stroke="#666" stroke-width="1.6" fill="none"/></svg>
<svg class="a" style="left:1113px;top:83.5px;" width="8" height="5" viewBox="0 0 8 5"><path d="M0.8 0.8 L4 4 L7.2 0.8" stroke="#555" stroke-width="1.3" fill="none"/></svg>
<div class="t" style="left:798px;width:600px;text-align:center;top:107.43px;font-size:11.3px;color:#505050;font-weight:normal;-webkit-text-stroke:0.2px #505050;">Font</div>
<div class="a" style="left:1133px;top:67px;width:1px;height:61px;background:#d0d0d0;"></div>
<svg class="a" style="left:1151px;top:74px;" width="28" height="23" viewBox="0 0 28 23"><path d="M0 1H28M4 6.5H24M0 12H28M4 17.5H24M0 22H28" stroke="#555" stroke-width="1.2"/></svg>
<svg class="a" style="left:1185px;top:83.5px;" width="8" height="5" viewBox="0 0 8 5"><path d="M0.8 0.8 L4 4 L7.2 0.8" stroke="#555" stroke-width="1.3" fill="none"/></svg>
<div class="t" style="left:871px;width:600px;text-align:center;top:107.43px;font-size:11.3px;color:#505050;font-weight:normal;-webkit-text-stroke:0.2px #505050;">Alignment</div>
<div class="a" style="left:1209.5px;top:67px;width:1px;height:61px;background:#d0d0d0;"></div>
<svg class="a" style="left:1225px;top:73px;" width="26" height="26" viewBox="0 0 26 26"><circle cx="6" cy="6" r="5" fill="none" stroke="#555" stroke-width="1.5"/><circle cx="20" cy="20" r="5" fill="none" stroke="#555" stroke-width="1.5"/><path d="M21 1 L5 25" stroke="#555" stroke-width="1.5"/></svg>
<svg class="a" style="left:1258px;top:83.5px;" width="8" height="5" viewBox="0 0 8 5"><path d="M0.8 0.8 L4 4 L7.2 0.8" stroke="#555" stroke-width="1.3" fill="none"/></svg>
<div class="t" style="left:942.5px;width:600px;text-align:center;top:107.43px;font-size:11.3px;color:#505050;font-weight:normal;-webkit-text-stroke:0.2px #505050;">Number</div>
<div class="a" style="left:1278px;top:67px;width:1px;height:61px;background:#d0d0d0;"></div>
<svg class="a" style="left:1292px;top:70px;" width="16" height="15" viewBox="0 0 16 15"><rect x="0.5" y="0.5" width="15" height="14" fill="#fff" stroke="#777"/><path d="M5.5 0.5V14.5M10.5 0.5V14.5M0.5 5H15.5M0.5 10H15.5" stroke="#777"/><rect x="1" y="1" width="4.5" height="4" fill="#e05a6a"/><rect x="6" y="5.5" width="4.5" height="4" fill="#e05a6a"/><rect x="1" y="10.5" width="9" height="3.5" fill="#e05a6a"/></svg>
<div class="t" style="left:1314px;top:72.93px;font-size:11.3px;color:#505050;font-weight:normal;-webkit-text-stroke:0.2px #505050;">Conditional Formatting</div>
<svg class="a" style="left:1434px;top:75.5px;" width="8" height="5" viewBox="0 0 8 5"><path d="M0.8 0.8 L4 4 L7.2 0.8" stroke="#555" stroke-width="1.3" fill="none"/></svg>
<svg class="a" style="left:1292px;top:92px;" width="16" height="16" viewBox="0 0 16 16"><rect x="0.5" y="0.5" width="15" height="15" fill="#fff" stroke="#777"/><path d="M5.5 0.5V15.5M10.5 0.5V15.5M0.5 5.5H15.5M0.5 10.5H15.5" stroke="#777"/><rect x="1" y="1" width="14" height="4.5" fill="#8fb0dd"/><path d="M4 15 L13 6 L15 8 L6 16" fill="#aac4ea" stroke="#5b82c0" stroke-width="0.9"/></svg>
<div class="t" style="left:1314px;top:94.93px;font-size:11.3px;color:#505050;font-weight:normal;-webkit-text-stroke:0.2px #505050;">Format as Table</div>
<svg class="a" style="left:1400px;top:97.5px;" width="8" height="5" viewBox="0 0 8 5"><path d="M0.8 0.8 L4 4 L7.2 0.8" stroke="#555" stroke-width="1.3" fill="none"/></svg>
<svg class="a" style="left:1292px;top:114px;" width="16" height="16" viewBox="0 0 16 16"><rect x="0.5" y="0.5" width="15" height="15" fill="#fff" stroke="#777"/><path d="M0.5 5.5H15.5M5.5 0.5V15.5" stroke="#777"/><path d="M4 15 L13 6 L15 8 L6 16" fill="#aac4ea" stroke="#5b82c0" stroke-width="0.9"/></svg>
<div class="t" style="left:1314px;top:116.93px;font-size:11.3px;color:#505050;font-weight:normal;-webkit-text-stroke:0.2px #505050;">Cell Styles</div>
<svg class="a" style="left:1373px;top:119.5px;" width="8" height="5" viewBox="0 0 8 5"><path d="M0.8 0.8 L4 4 L7.2 0.8" stroke="#555" stroke-width="1.3" fill="none"/></svg>
<div class="a" style="left:1455.5px;top:67px;width:1px;height:61px;background:#d0d0d0;"></div>
<svg class="a" style="left:1470px;top:69px;" width="29" height="29" viewBox="0 0 29 29"><path d="M6 1.5H22M6 0V3M22 0V3" stroke="#6a9ad0" stroke-width="1"/><rect x="0.6" y="6.6" width="27" height="21" fill="#fff" stroke="#666" stroke-width="1.1"/><rect x="7.5" y="13.5" width="13" height="7" fill="#a9c8ea"/><path d="M7.5 6.6V27.6M20.5 6.6V27.6M0.6 13.5H27.6M0.6 20.5H27.6" stroke="#777" stroke-width="0.9"/></svg>
<svg class="a" style="left:1504px;top:83.5px;" width="8" height="5" viewBox="0 0 8 5"><path d="M0.8 0.8 L4 4 L7.2 0.8" stroke="#555" stroke-width="1.3" fill="none"/></svg>
<div class="t" style="left:1189.5px;width:600px;text-align:center;top:107.43px;font-size:11.3px;color:#505050;font-weight:normal;-webkit-text-stroke:0.2px #505050;">Cells</div>
<div class="a" style="left:1524.5px;top:67px;width:1px;height:61px;background:#d0d0d0;"></div>
<svg class="a" style="left:1537px;top:71px;" width="31" height="31" viewBox="0 0 31 31"><circle cx="17.5" cy="11" r="10" fill="#fff" stroke="#555" stroke-width="1.2"/><path d="M10.5 18 L1 29" stroke="#555" stroke-width="1.3"/></svg>
<svg class="a" style="left:1573px;top:83.5px;" width="8" height="5" viewBox="0 0 8 5"><path d="M0.8 0.8 L4 4 L7.2 0.8" stroke="#555" stroke-width="1.3" fill="none"/></svg>
<div class="t" style="left:1258.5px;width:600px;text-align:center;top:107.43px;font-size:11.3px;color:#505050;font-weight:normal;-webkit-text-stroke:0.2px #505050;">Editing</div>
<div class="a" style="left:1593.5px;top:67px;width:1px;height:61px;background:#d0d0d0;"></div>
<svg class="a" style="left:1610px;top:71px;" width="24" height="30" viewBox="0 0 24 30"><path d="M11 1 H21 L15 12 H22 L5 29 L9 16 H2 Z" fill="#a9c9ef" stroke="#6a97d0" stroke-width="1.2" stroke-linejoin="round"/></svg>
<div class="t" style="left:1321px;width:600px;text-align:center;top:107.43px;font-size:11.3px;color:#505050;font-weight:normal;-webkit-text-stroke:0.2px #505050;">Ideas</div>
<div class="a" style="left:1650.5px;top:67px;width:1px;height:61px;background:#d0d0d0;"></div>
<svg class="a" style="left:1671px;top:69px;" width="28" height="32" viewBox="0 0 28 32"><path d="M1 6 H19 V31 H1 Z" fill="#f6f6f6" stroke="#dcdcdc" stroke-width="1.1"/><path d="M6 20 L19 7 L23 11 L10 24 Z" fill="none" stroke="#d0d0d0" stroke-width="1.2"/><path d="M17 5 L22 0 L27 5 L22 10" fill="none" stroke="#d0d0d0" stroke-width="1.2"/></svg>
<svg class="a" style="left:1703px;top:83.5px;" width="8" height="5" viewBox="0 0 8 5"><path d="M0.8 0.8 L4 4 L7.2 0.8" stroke="#555" stroke-width="1.3" fill="none"/></svg>
<div class="t" style="left:1389px;width:600px;text-align:center;top:107.43px;font-size:11.3px;color:#b8b8b8;font-weight:normal;">Sensitivity</div>
<div class="a" style="left:960px;top:138px;width:960px;height:27px;background:#fff;"></div>
<div class="a" style="left:960px;top:138px;width:85px;height:27px;background:linear-gradient(#f3f3f3,#ececec);"></div>
<div class="a" style="left:960px;top:164px;width:960px;height:1px;background:#c8c8c8;"></div>
<div class="a" style="left:960px;top:166px;width:960px;height:1px;background:#c8c8c8;"></div>
<div class="a" style="left:1045px;top:138px;width:1px;height:27px;background:#d0d0d0;"></div>
<div class="t" style="left:970px;top:146.00px;font-size:13px;color:#777;font-weight:normal;">SUM</div>
<svg class="a" style="left:1031px;top:142px;" width="10" height="18" viewBox="0 0 10 18"><path d="M1 6 L5 1 L9 6 Z M1 11 L5 16 L9 11 Z" fill="#8a8a8a"/></svg>
<svg class="a" style="left:1058px;top:145px;" width="14" height="13" viewBox="0 0 14 13"><path d="M1.5 1.5 L12.5 11.5 M12.5 1.5 L1.5 11.5" stroke="#c44b55" stroke-width="1.8"/></svg>
<svg class="a" style="left:1087px;top:145px;" width="16" height="13" viewBox="0 0 16 13"><path d="M1.5 6.5 L6 11 L14.5 1.5" stroke="#6cb86c" stroke-width="1.8" fill="none"/></svg>
<div class="t" style="left:1118px;top:143.11px;font-size:17px;color:#333;font-weight:normal;font-family:'Liberation Serif',serif;letter-spacing:-0.5px;"><i>f</i><i style="font-size:15px">x</i></div>
<div class="a" style="left:1140px;top:143px;width:1px;height:18px;background:#d8d8d8;"></div>
<div class="t" style="left:1148px;top:145.36px;font-size:12.8px;color:#111;font-weight:normal;letter-spacing:-0.5px;">Row ID</div>
<svg class="a" style="left:1907px;top:148px;" width="10" height="7" viewBox="0 0 10 7"><path d="M0 0 H10 L5 7 Z" fill="#555"/></svg>
<div class="a" style="left:960px;top:167px;width:960px;height:21px;background:linear-gradient(#f8f8f8,#f1f1f1);"></div>
<div class="a" style="left:960px;top:187px;width:960px;height:1px;background:#d0d0d0;"></div>
<div class="a" style="left:960px;top:167px;width:22.5px;height:21px;background:#efefef;"></div>
<svg class="a" style="left:964px;top:170px;" width="17" height="16" viewBox="0 0 17 16"><path d="M16 1 V15 H2 Z" fill="#d6d6d6"/></svg>
<div class="a" style="left:982px;top:167px;width:1px;height:843px;background:#b4b4bb;"></div>
<div class="a" style="left:1040px;top:167px;width:1px;height:20px;background:#e3e3e3;"></div>
<div class="t" style="left:712.2px;width:600px;text-align:center;top:171.81px;font-size:10.5px;color:#555;font-weight:normal;">A</div>
<div class="a" style="left:1132px;top:167px;width:1px;height:20px;background:#e3e3e3;"></div>
<div class="t" style="left:787.2px;width:600px;text-align:center;top:171.81px;font-size:10.5px;color:#555;font-weight:normal;">B</div>
<div class="a" style="left:1206px;top:167px;width:1px;height:20px;background:#e3e3e3;"></div>
<div class="t" style="left:870.2px;width:600px;text-align:center;top:171.81px;font-size:10.5px;color:#555;font-weight:normal;">C</div>
<div class="a" style="left:1314px;top:167px;width:1px;height:20px;background:#e3e3e3;"></div>
<div class="t" style="left:961.2px;width:600px;text-align:center;top:171.81px;font-size:10.5px;color:#555;font-weight:normal;">D</div>
<div class="a" style="left:1418px;top:167px;width:1px;height:20px;background:#e3e3e3;"></div>
<div class="t" style="left:1067.2px;width:600px;text-align:center;top:171.81px;font-size:10.5px;color:#555;font-weight:normal;">E</div>
<div class="a" style="left:1505px;top:167px;width:1px;height:20px;background:#e3e3e3;"></div>
<div class="t" style="left:1162.7px;width:600px;text-align:center;top:171.81px;font-size:10.5px;color:#555;font-weight:normal;">F</div>
<div class="a" style="left:1565px;top:167px;width:1px;height:20px;background:#e3e3e3;"></div>
<div class="t" style="left:1236.2px;width:600px;text-align:center;top:171.81px;font-size:10.5px;color:#555;font-weight:normal;">G</div>
<div class="a" style="left:1657px;top:167px;width:1px;height:20px;background:#e3e3e3;"></div>
<div class="t" style="left:1312.2px;width:600px;text-align:center;top:171.81px;font-size:10.5px;color:#555;font-weight:normal;">H</div>
<div class="a" style="left:1737px;top:167px;width:1px;height:20px;background:#e3e3e3;"></div>
<div class="t" style="left:1398.2px;width:600px;text-align:center;top:171.81px;font-size:10.5px;color:#555;font-weight:normal;">I</div>
<div class="a" style="left:1810px;top:167px;width:1px;height:20px;background:#e3e3e3;"></div>
<div class="t" style="left:1474.7px;width:600px;text-align:center;top:171.81px;font-size:10.5px;color:#555;font-weight:normal;">J</div>
<div class="a" style="left:1893px;top:167px;width:1px;height:20px;background:#e3e3e3;"></div>
<div class="t" style="left:1552.7px;width:600px;text-align:center;top:171.81px;font-size:10.5px;color:#555;font-weight:normal;">K</div>
<div class="a" style="left:1990px;top:167px;width:1px;height:20px;background:#e3e3e3;"></div>
<div class="a" style="left:960px;top:188px;width:22px;height:822px;background:linear-gradient(90deg,#e0e0e0,#e6e6e6);"></div>
<div class="a" style="left:960px;top:167px;width:1px;height:843px;background:#bdbdbd;"></div>
<div class="a" style="left:960px;top:203.5px;width:22px;height:1px;background:#cfcfcf;"></div>
<div class="a" style="left:982.5px;top:188px;width:937.5px;height:16px;background:#4472c4;"></div>
<div class="a" style="left:982px;top:202.5px;width:938px;height:2px;background:#1c2a4a;"></div>
<div class="a" style="left:982px;top:188px;width:1px;height:16px;background:#3a62ad;"></div>
<div class="a" style="left:1026px;top:189px;width:14px;height:13.5px;background:#fff;border:1px solid #d6d6d6;box-sizing:border-box;"></div>
<svg class="a" style="left:1029px;top:193.5px;" width="8" height="5" viewBox="0 0 8 5"><path d="M0 0 H8 L4 5 Z" fill="#777"/></svg>
<div class="a" style="left:982px;top:188px;width:43px;height:16px;overflow:hidden;">
<div class="t" style="left:3px;top:3.69px;font-size:10.7px;font-weight:bold;color:#0b1838;">Row ID</div>
</div>
<div class="a" style="left:1040px;top:188px;width:1px;height:16px;background:#3a62ad;"></div>
<div class="a" style="left:1118px;top:189px;width:14px;height:13.5px;background:#fff;border:1px solid #d6d6d6;box-sizing:border-box;"></div>
<svg class="a" style="left:1121px;top:193.5px;" width="8" height="5" viewBox="0 0 8 5"><path d="M0 0 H8 L4 5 Z" fill="#777"/></svg>
<div class="a" style="left:1040px;top:188px;width:77px;height:16px;overflow:hidden;">
<div class="t" style="left:3px;top:3.69px;font-size:10.7px;font-weight:bold;color:#0b1838;">Order ID</div>
</div>
<div class="a" style="left:1132px;top:188px;width:1px;height:16px;background:#3a62ad;"></div>
<div class="a" style="left:1192px;top:189px;width:14px;height:13.5px;background:#fff;border:1px solid #d6d6d6;box-sizing:border-box;"></div>
<svg class="a" style="left:1195px;top:193.5px;" width="8" height="5" viewBox="0 0 8 5"><path d="M0 0 H8 L4 5 Z" fill="#777"/></svg>
<div class="a" style="left:1132px;top:188px;width:59px;height:16px;overflow:hidden;">
<div class="t" style="left:3px;top:3.69px;font-size:10.7px;font-weight:bold;color:#0b1838;">Returned?</div>
</div>
<div class="a" style="left:1206px;top:188px;width:1px;height:16px;background:#3a62ad;"></div>
<div class="a" style="left:1300px;top:189px;width:14px;height:13.5px;background:#fff;border:1px solid #d6d6d6;box-sizing:border-box;"></div>
<svg class="a" style="left:1303px;top:193.5px;" width="8" height="5" viewBox="0 0 8 5"><path d="M0 0 H8 L4 5 Z" fill="#777"/></svg>
<div class="a" style="left:1206px;top:188px;width:93px;height:16px;overflow:hidden;">
<div class="t" style="left:3px;top:3.69px;font-size:10.7px;font-weight:bold;color:#0b1838;">Order Date</div>
</div>
<div class="a" style="left:1314px;top:188px;width:1px;height:16px;background:#3a62ad;"></div>
<div class="a" style="left:1404px;top:189px;width:14px;height:13.5px;background:#fff;border:1px solid #d6d6d6;box-sizing:border-box;"></div>
<svg class="a" style="left:1407px;top:193.5px;" width="8" height="5" viewBox="0 0 8 5"><path d="M0 0 H8 L4 5 Z" fill="#777"/></svg>
<div class="a" style="left:1314px;top:188px;width:89px;height:16px;overflow:hidden;">
<div class="t" style="left:3px;top:3.69px;font-size:10.7px;font-weight:bold;color:#0b1838;">Ship Date</div>
</div>
<div class="a" style="left:1418px;top:188px;width:1px;height:16px;background:#3a62ad;"></div>
<div class="a" style="left:1491px;top:189px;width:14px;height:13.5px;background:#fff;border:1px solid #d6d6d6;box-sizing:border-box;"></div>
<svg class="a" style="left:1494px;top:193.5px;" width="8" height="5" viewBox="0 0 8 5"><path d="M0 0 H8 L4 5 Z" fill="#777"/></svg>
<div class="a" style="left:1418px;top:188px;width:72px;height:16px;overflow:hidden;">
<div class="t" style="left:3px;top:3.69px;font-size:10.7px;font-weight:bold;color:#0b1838;">Ship Mode</div>
</div>
<div class="a" style="left:1505px;top:188px;width:1px;height:16px;background:#3a62ad;"></div>
<div class="a" style="left:1551px;top:189px;width:14px;height:13.5px;background:#fff;border:1px solid #d6d6d6;box-sizing:border-box;"></div>
<svg class="a" style="left:1554px;top:193.5px;" width="8" height="5" viewBox="0 0 8 5"><path d="M0 0 H8 L4 5 Z" fill="#777"/></svg>
<div class="a" style="left:1505px;top:188px;width:45px;height:16px;overflow:hidden;">
<div class="t" style="left:3px;top:3.69px;font-size:10.7px;font-weight:bold;color:#0b1838;">Segment</div>
</div>
<div class="a" style="left:1565px;top:188px;width:1px;height:16px;background:#3a62ad;"></div>
<div class="a" style="left:1643px;top:189px;width:14px;height:13.5px;background:#fff;border:1px solid #d6d6d6;box-sizing:border-box;"></div>
<svg class="a" style="left:1646px;top:193.5px;" width="8" height="5" viewBox="0 0 8 5"><path d="M0 0 H8 L4 5 Z" fill="#777"/></svg>
<div class="a" style="left:1565px;top:188px;width:77px;height:16px;overflow:hidden;">
<div class="t" style="left:3px;top:3.69px;font-size:10.7px;font-weight:bold;color:#0b1838;">Country</div>
</div>
<div class="a" style="left:1657px;top:188px;width:1px;height:16px;background:#3a62ad;"></div>
<div class="a" style="left:1723px;top:189px;width:14px;height:13.5px;background:#fff;border:1px solid #d6d6d6;box-sizing:border-box;"></div>
<svg class="a" style="left:1726px;top:193.5px;" width="8" height="5" viewBox="0 0 8 5"><path d="M0 0 H8 L4 5 Z" fill="#777"/></svg>
<div class="a" style="left:1657px;top:188px;width:65px;height:16px;overflow:hidden;">
<div class="t" style="left:3px;top:3.69px;font-size:10.7px;font-weight:bold;color:#0b1838;">City</div>
</div>
<div class="a" style="left:1737px;top:188px;width:1px;height:16px;background:#3a62ad;"></div>
<div class="a" style="left:1796px;top:189px;width:14px;height:13.5px;background:#fff;border:1px solid #d6d6d6;box-sizing:border-box;"></div>
<svg class="a" style="left:1799px;top:193.5px;" width="8" height="5" viewBox="0 0 8 5"><path d="M0 0 H8 L4 5 Z" fill="#777"/></svg>
<div class="a" style="left:1737px;top:188px;width:58px;height:16px;overflow:hidden;">
<div class="t" style="left:3px;top:3.69px;font-size:10.7px;font-weight:bold;color:#0b1838;">State</div>
</div>
<div class="a" style="left:1810px;top:188px;width:1px;height:16px;background:#3a62ad;"></div>
<div class="a" style="left:1879px;top:189px;width:14px;height:13.5px;background:#fff;border:1px solid #d6d6d6;box-sizing:border-box;"></div>
<svg class="a" style="left:1882px;top:193.5px;" width="8" height="5" viewBox="0 0 8 5"><path d="M0 0 H8 L4 5 Z" fill="#777"/></svg>
<div class="a" style="left:1810px;top:188px;width:68px;height:16px;overflow:hidden;">
<div class="t" style="left:3px;top:3.69px;font-size:10.7px;font-weight:bold;color:#0b1838;">Postal Code</div>
</div>
<div class="a" style="left:1893px;top:188px;width:1px;height:16px;background:#3a62ad;"></div>
<div class="a" style="left:1893px;top:188px;width:40px;height:16px;overflow:hidden;">
<div class="t" style="left:3px;top:3.69px;font-size:10.7px;font-weight:bold;color:#0b1838;">Region</div>
</div>
<div class="t" style="left:671px;width:600px;text-align:center;top:192.11px;font-size:10.5px;color:#444;font-weight:normal;">1</div>
<div class="t" style="left:671px;width:600px;text-align:center;top:206.03px;font-size:10.6px;color:#555;font-weight:normal;">2</div>
<div class="a" style="left:961px;top:216.5px;width:21px;height:1px;background:#cdcdcd;"></div>
<div class="t" style="left:437px;width:600px;text-align:right;top:206.03px;font-size:10.6px;color:#000;font-weight:normal;-webkit-text-stroke:0.15px #000;">1</div>
<div class="t" style="left:1043px;top:206.03px;font-size:10.6px;color:#000;font-weight:normal;-webkit-text-stroke:0.15px #000;">CA-2016-152156</div>
<div class="t" style="left:1135px;top:206.03px;font-size:10.6px;color:#000;font-weight:normal;-webkit-text-stroke:0.15px #000;">No</div>
<div class="t" style="left:711px;width:600px;text-align:right;top:206.03px;font-size:10.6px;color:#000;font-weight:normal;-webkit-text-stroke:0.15px #000;">08.11.16</div>
<div class="t" style="left:815px;width:600px;text-align:right;top:206.03px;font-size:10.6px;color:#000;font-weight:normal;-webkit-text-stroke:0.15px #000;">11.11.16</div>
<div class="t" style="left:671px;width:600px;text-align:center;top:219.03px;font-size:10.6px;color:#555;font-weight:normal;">3</div>
<div class="a" style="left:961px;top:229.5px;width:21px;height:1px;background:#cdcdcd;"></div>
<div class="t" style="left:437px;width:600px;text-align:right;top:219.03px;font-size:10.6px;color:#000;font-weight:normal;-webkit-text-stroke:0.15px #000;">2</div>
<div class="t" style="left:1043px;top:219.03px;font-size:10.6px;color:#000;font-weight:normal;-webkit-text-stroke:0.15px #000;">CA-2016-152156</div>
<div class="t" style="left:1135px;top:219.03px;font-size:10.6px;color:#000;font-weight:normal;-webkit-text-stroke:0.15px #000;">No</div>
<div class="t" style="left:711px;width:600px;text-align:right;top:219.03px;font-size:10.6px;color:#000;font-weight:normal;-webkit-text-stroke:0.15px #000;">08.11.16</div>
<div class="t" style="left:815px;width:600px;text-align:right;top:219.03px;font-size:10.6px;color:#000;font-weight:normal;-webkit-text-stroke:0.15px #000;">11.11.16</div>
<div class="t" style="left:671px;width:600px;text-align:center;top:232.03px;font-size:10.6px;color:#555;font-weight:normal;">4</div>
<div class="a" style="left:961px;top:242.5px;width:21px;height:1px;background:#cdcdcd;"></div>
<div class="t" style="left:437px;width:600px;text-align:right;top:232.03px;font-size:10.6px;color:#000;font-weight:normal;-webkit-text-stroke:0.15px #000;">3</div>
<div class="t" style="left:1043px;top:232.03px;font-size:10.6px;color:#000;font-weight:normal;-webkit-text-stroke:0.15px #000;">CA-2016-138688</div>
<div class="t" style="left:1135px;top:232.03px;font-size:10.6px;color:#000;font-weight:normal;-webkit-text-stroke:0.15px #000;">No</div>
<div class="t" style="left:711px;width:600px;text-align:right;top:232.03px;font-size:10.6px;color:#000;font-weight:normal;-webkit-text-stroke:0.15px #000;">12.06.16</div>
<div class="t" style="left:815px;width:600px;text-align:right;top:232.03px;font-size:10.6px;color:#000;font-weight:normal;-webkit-text-stroke:0.15px #000;">16.06.16</div>
<div class="t" style="left:671px;width:600px;text-align:center;top:245.03px;font-size:10.6px;color:#555;font-weight:normal;">5</div>
<div class="a" style="left:961px;top:255.5px;width:21px;height:1px;background:#cdcdcd;"></div>
<div class="t" style="left:437px;width:600px;text-align:right;top:245.03px;font-size:10.6px;color:#000;font-weight:normal;-webkit-text-stroke:0.15px #000;">4</div>
<div class="t" style="left:1043px;top:245.03px;font-size:10.6px;color:#000;font-weight:normal;-webkit-text-stroke:0.15px #000;">US-2015-108966</div>
<div class="t" style="left:1135px;top:245.03px;font-size:10.6px;color:#000;font-weight:normal;-webkit-text-stroke:0.15px #000;">No</div>
<div class="t" style="left:711px;width:600px;text-align:right;top:245.03px;font-size:10.6px;color:#000;font-weight:normal;-webkit-text-stroke:0.15px #000;">11.10.15</div>
<div class="t" style="left:815px;width:600px;text-align:right;top:245.03px;font-size:10.6px;color:#000;font-weight:normal;-webkit-text-stroke:0.15px #000;">18.10.15</div>
<div class="t" style="left:671px;width:600px;text-align:center;top:258.03px;font-size:10.6px;color:#555;font-weight:normal;">6</div>
<div class="a" style="left:961px;top:268.5px;width:21px;height:1px;background:#cdcdcd;"></div>
<div class="t" style="left:437px;width:600px;text-align:right;top:258.03px;font-size:10.6px;color:#000;font-weight:normal;-webkit-text-stroke:0.15px #000;">5</div>
<div class="t" style="left:1043px;top:258.03px;font-size:10.6px;color:#000;font-weight:normal;-webkit-text-stroke:0.15px #000;">US-2015-108966</div>
<div class="t" style="left:1135px;top:258.03px;font-size:10.6px;color:#000;font-weight:normal;-webkit-text-stroke:0.15px #000;">No</div>
<div class="t" style="left:711px;width:600px;text-align:right;top:258.03px;font-size:10.6px;color:#000;font-weight:normal;-webkit-text-stroke:0.15px #000;">11.10.15</div>
<div class="t" style="left:815px;width:600px;text-align:right;top:258.03px;font-size:10.6px;color:#000;font-weight:normal;-webkit-text-stroke:0.15px #000;">18.10.15</div>
<div class="t" style="left:671px;width:600px;text-align:center;top:271.03px;font-size:10.6px;color:#555;font-weight:normal;">7</div>
<div class="a" style="left:961px;top:281.5px;width:21px;height:1px;background:#cdcdcd;"></div>
<div class="t" style="left:437px;width:600px;text-align:right;top:271.03px;font-size:10.6px;color:#000;font-weight:normal;-webkit-text-stroke:0.15px #000;">6</div>
<div class="t" style="left:1043px;top:271.03px;font-size:10.6px;color:#000;font-weight:normal;-webkit-text-stroke:0.15px #000;">CA-2014-115812</div>
<div class="t" style="left:1135px;top:271.03px;font-size:10.6px;color:#000;font-weight:normal;-webkit-text-stroke:0.15px #000;">No</div>
<div class="t" style="left:711px;width:600px;text-align:right;top:271.03px;font-size:10.6px;color:#000;font-weight:normal;-webkit-text-stroke:0.15px #000;">09.06.14</div>
<div class="t" style="left:815px;width:600px;text-align:right;top:271.03px;font-size:10.6px;color:#000;font-weight:normal;-webkit-text-stroke:0.15px #000;">14.06.14</div>
<div class="t" style="left:671px;width:600px;text-align:center;top:284.03px;font-size:10.6px;color:#555;font-weight:normal;">8</div>
<div class="a" style="left:961px;top:294.5px;width:21px;height:1px;background:#cdcdcd;"></div>
<div class="t" style="left:437px;width:600px;text-align:right;top:284.03px;font-size:10.6px;color:#000;font-weight:normal;-webkit-text-stroke:0.15px #000;">7</div>
<div class="t" style="left:1043px;top:284.03px;font-size:10.6px;color:#000;font-weight:normal;-webkit-text-stroke:0.15px #000;">CA-2014-115812</div>
<div class="t" style="left:1135px;top:284.03px;font-size:10.6px;color:#000;font-weight:normal;-webkit-text-stroke:0.15px #000;">No</div>
<div class="t" style="left:711px;width:600px;text-align:right;top:284.03px;font-size:10.6px;color:#000;font-weight:normal;-webkit-text-stroke:0.15px #000;">09.06.14</div>
<div class="t" style="left:815px;width:600px;text-align:right;top:284.03px;font-size:10.6px;color:#000;font-weight:normal;-webkit-text-stroke:0.15px #000;">14.06.14</div>
<div class="t" style="left:671px;width:600px;text-align:center;top:297.03px;font-size:10.6px;color:#555;font-weight:normal;">9</div>
<div class="a" style="left:961px;top:307.5px;width:21px;height:1px;background:#cdcdcd;"></div>
<div class="t" style="left:437px;width:600px;text-align:right;top:297.03px;font-size:10.6px;color:#000;font-weight:normal;-webkit-text-stroke:0.15px #000;">8</div>
<div class="t" style="left:1043px;top:297.03px;font-size:10.6px;color:#000;font-weight:normal;-webkit-text-stroke:0.15px #000;">CA-2014-115812</div>
<div class="t" style="left:1135px;top:297.03px;font-size:10.6px;color:#000;font-weight:normal;-webkit-text-stroke:0.15px #000;">No</div>
<div class="t" style="left:711px;width:600px;text-align:right;top:297.03px;font-size:10.6px;color:#000;font-weight:normal;-webkit-text-stroke:0.15px #000;">09.06.14</div>
<div class="t" style="left:815px;width:600px;text-align:right;top:297.03px;font-size:10.6px;color:#000;font-weight:normal;-webkit-text-stroke:0.15px #000;">14.06.14</div>
<div class="t" style="left:671px;width:600px;text-align:center;top:310.03px;font-size:10.6px;color:#555;font-weight:normal;">10</div>
<div class="a" style="left:961px;top:320.5px;width:21px;height:1px;background:#cdcdcd;"></div>
<div class="t" style="left:437px;width:600px;text-align:right;top:310.03px;font-size:10.6px;color:#000;font-weight:normal;-webkit-text-stroke:0.15px #000;">9</div>
<div class="t" style="left:1043px;top:310.03px;font-size:10.6px;color:#000;font-weight:normal;-webkit-text-stroke:0.15px #000;">CA-2014-115812</div>
<div class="t" style="left:1135px;top:310.03px;font-size:10.6px;color:#000;font-weight:normal;-webkit-text-stroke:0.15px #000;">No</div>
<div class="t" style="left:711px;width:600px;text-align:right;top:310.03px;font-size:10.6px;color:#000;font-weight:normal;-webkit-text-stroke:0.15px #000;">09.06.14</div>
<div class="t" style="left:815px;width:600px;text-align:right;top:310.03px;font-size:10.6px;color:#000;font-weight:normal;-webkit-text-stroke:0.15px #000;">14.06.14</div>
<div class="t" style="left:671px;width:600px;text-align:center;top:323.03px;font-size:10.6px;color:#555;font-weight:normal;">11</div>
<div class="a" style="left:961px;top:333.5px;width:21px;height:1px;background:#cdcdcd;"></div>
<div class="t" style="left:437px;width:600px;text-align:right;top:323.03px;font-size:10.6px;color:#000;font-weight:normal;-webkit-text-stroke:0.15px #000;">10</div>
<div class="t" style="left:1043px;top:323.03px;font-size:10.6px;color:#000;font-weight:normal;-webkit-text-stroke:0.15px #000;">CA-2014-115812</div>
<div class="t" style="left:1135px;top:323.03px;font-size:10.6px;color:#000;font-weight:normal;-webkit-text-stroke:0.15px #000;">No</div>
<div class="t" style="left:711px;width:600px;text-align:right;top:323.03px;font-size:10.6px;color:#000;font-weight:normal;-webkit-text-stroke:0.15px #000;">09.06.14</div>
<div class="t" style="left:815px;width:600px;text-align:right;top:323.03px;font-size:10.6px;color:#000;font-weight:normal;-webkit-text-stroke:0.15px #000;">14.06.14</div>
<div class="t" style="left:671px;width:600px;text-align:center;top:336.03px;font-size:10.6px;color:#555;font-weight:normal;">12</div>
<div class="a" style="left:961px;top:346.5px;width:21px;height:1px;background:#cdcdcd;"></div>
<div class="t" style="left:437px;width:600px;text-align:right;top:336.03px;font-size:10.6px;color:#000;font-weight:normal;-webkit-text-stroke:0.15px #000;">11</div>
<div class="t" style="left:1043px;top:336.03px;font-size:10.6px;color:#000;font-weight:normal;-webkit-text-stroke:0.15px #000;">CA-2014-115812</div>
<div class="t" style="left:1135px;top:336.03px;font-size:10.6px;color:#000;font-weight:normal;-webkit-text-stroke:0.15px #000;">No</div>
<div class="t" style="left:711px;width:600px;text-align:right;top:336.03px;font-size:10.6px;color:#000;font-weight:normal;-webkit-text-stroke:0.15px #000;">09.06.14</div>
<div class="t" style="left:815px;width:600px;text-align:right;top:336.03px;font-size:10.6px;color:#000;font-weight:normal;-webkit-text-stroke:0.15px #000;">14.06.14</div>
<div class="t" style="left:671px;width:600px;text-align:center;top:349.03px;font-size:10.6px;color:#555;font-weight:normal;">13</div>
<div class="a" style="left:961px;top:359.5px;width:21px;height:1px;background:#cdcdcd;"></div>
<div class="t" style="left:437px;width:600px;text-align:right;top:349.03px;font-size:10.6px;color:#000;font-weight:normal;-webkit-text-stroke:0.15px #000;">12</div>
<div class="t" style="left:1043px;top:349.03px;font-size:10.6px;color:#000;font-weight:normal;-webkit-text-stroke:0.15px #000;">CA-2014-115812</div>
<div class="t" style="left:1135px;top:349.03px;font-size:10.6px;color:#000;font-weight:normal;-webkit-text-stroke:0.15px #000;">No</div>
<div class="t" style="left:711px;width:600px;text-align:right;top:349.03px;font-size:10.6px;color:#000;font-weight:normal;-webkit-text-stroke:0.15px #000;">09.06.14</div>
<div class="t" style="left:815px;width:600px;text-align:right;top:349.03px;font-size:10.6px;color:#000;font-weight:normal;-webkit-text-stroke:0.15px #000;">14.06.14</div>
<div class="t" style="left:671px;width:600px;text-align:center;top:362.03px;font-size:10.6px;color:#555;font-weight:normal;">14</div>
<div class="a" style="left:961px;top:372.5px;width:21px;height:1px;background:#cdcdcd;"></div>
<div class="t" style="left:437px;width:600px;text-align:right;top:362.03px;font-size:10.6px;color:#000;font-weight:normal;-webkit-text-stroke:0.15px #000;">13</div>
<div class="t" style="left:1043px;top:362.03px;font-size:10.6px;color:#000;font-weight:normal;-webkit-text-stroke:0.15px #000;">CA-2017-114412</div>
<div class="t" style="left:1135px;top:362.03px;font-size:10.6px;color:#000;font-weight:normal;-webkit-text-stroke:0.15px #000;">No</div>
<div class="t" style="left:711px;width:600px;text-align:right;top:362.03px;font-size:10.6px;color:#000;font-weight:normal;-webkit-text-stroke:0.15px #000;">15.04.17</div>
<div class="t" style="left:815px;width:600px;text-align:right;top:362.03px;font-size:10.6px;color:#000;font-weight:normal;-webkit-text-stroke:0.15px #000;">20.04.17</div>
<div class="t" style="left:671px;width:600px;text-align:center;top:375.03px;font-size:10.6px;color:#555;font-weight:normal;">15</div>
<div class="a" style="left:961px;top:385.5px;width:21px;height:1px;background:#cdcdcd;"></div>
<div class="t" style="left:437px;width:600px;text-align:right;top:375.03px;font-size:10.6px;color:#000;font-weight:normal;-webkit-text-stroke:0.15px #000;">14</div>
<div class="t" style="left:1043px;top:375.03px;font-size:10.6px;color:#000;font-weight:normal;-webkit-text-stroke:0.15px #000;">CA-2016-161389</div>
<div class="t" style="left:1135px;top:375.03px;font-size:10.6px;color:#000;font-weight:normal;-webkit-text-stroke:0.15px #000;">No</div>
<div class="t" style="left:711px;width:600px;text-align:right;top:375.03px;font-size:10.6px;color:#000;font-weight:normal;-webkit-text-stroke:0.15px #000;">05.12.16</div>
<div class="t" style="left:815px;width:600px;text-align:right;top:375.03px;font-size:10.6px;color:#000;font-weight:normal;-webkit-text-stroke:0.15px #000;">10.12.16</div>
<div class="t" style="left:671px;width:600px;text-align:center;top:388.03px;font-size:10.6px;color:#555;font-weight:normal;">16</div>
<div class="a" style="left:961px;top:398.5px;width:21px;height:1px;background:#cdcdcd;"></div>
<div class="t" style="left:437px;width:600px;text-align:right;top:388.03px;font-size:10.6px;color:#000;font-weight:normal;-webkit-text-stroke:0.15px #000;">15</div>
<div class="t" style="left:1043px;top:388.03px;font-size:10.6px;color:#000;font-weight:normal;-webkit-text-stroke:0.15px #000;">US-2015-118983</div>
<div class="t" style="left:1135px;top:388.03px;font-size:10.6px;color:#000;font-weight:normal;-webkit-text-stroke:0.15px #000;">No</div>
<div class="t" style="left:711px;width:600px;text-align:right;top:388.03px;font-size:10.6px;color:#000;font-weight:normal;-webkit-text-stroke:0.15px #000;">22.11.15</div>
<div class="t" style="left:815px;width:600px;text-align:right;top:388.03px;font-size:10.6px;color:#000;font-weight:normal;-webkit-text-stroke:0.15px #000;">26.11.15</div>
<div class="t" style="left:671px;width:600px;text-align:center;top:401.03px;font-size:10.6px;color:#555;font-weight:normal;">17</div>
<div class="a" style="left:961px;top:411.5px;width:21px;height:1px;background:#cdcdcd;"></div>
<div class="t" style="left:437px;width:600px;text-align:right;top:401.03px;font-size:10.6px;color:#000;font-weight:normal;-webkit-text-stroke:0.15px #000;">16</div>
<div class="t" style="left:1043px;top:401.03px;font-size:10.6px;color:#000;font-weight:normal;-webkit-text-stroke:0.15px #000;">US-2015-118983</div>
<div class="t" style="left:1135px;top:401.03px;font-size:10.6px;color:#000;font-weight:normal;-webkit-text-stroke:0.15px #000;">No</div>
<div class="t" style="left:711px;width:600px;text-align:right;top:401.03px;font-size:10.6px;color:#000;font-weight:normal;-webkit-text-stroke:0.15px #000;">22.11.15</div>
<div class="t" style="left:815px;width:600px;text-align:right;top:401.03px;font-size:10.6px;color:#000;font-weight:normal;-webkit-text-stroke:0.15px #000;">26.11.15</div>
<div class="t" style="left:671px;width:600px;text-align:center;top:414.03px;font-size:10.6px;color:#555;font-weight:normal;">18</div>
<div class="a" style="left:961px;top:424.5px;width:21px;height:1px;background:#cdcdcd;"></div>
<div class="t" style="left:437px;width:600px;text-align:right;top:414.03px;font-size:10.6px;color:#000;font-weight:normal;-webkit-text-stroke:0.15px #000;">17</div>
<div class="t" style="left:1043px;top:414.03px;font-size:10.6px;color:#000;font-weight:normal;-webkit-text-stroke:0.15px #000;">CA-2014-105893</div>
<div class="t" style="left:1135px;top:414.03px;font-size:10.6px;color:#000;font-weight:normal;-webkit-text-stroke:0.15px #000;">No</div>
<div class="t" style="left:711px;width:600px;text-align:right;top:414.03px;font-size:10.6px;color:#000;font-weight:normal;-webkit-text-stroke:0.15px #000;">11.11.14</div>
<div class="t" style="left:815px;width:600px;text-align:right;top:414.03px;font-size:10.6px;color:#000;font-weight:normal;-webkit-text-stroke:0.15px #000;">18.11.14</div>
<div class="t" style="left:671px;width:600px;text-align:center;top:427.03px;font-size:10.6px;color:#555;font-weight:normal;">19</div>
<div class="a" style="left:961px;top:437.5px;width:21px;height:1px;background:#cdcdcd;"></div>
<div class="t" style="left:437px;width:600px;text-align:right;top:427.03px;font-size:10.6px;color:#000;font-weight:normal;-webkit-text-stroke:0.15px #000;">18</div>
<div class="t" style="left:1043px;top:427.03px;font-size:10.6px;color:#000;font-weight:normal;-webkit-text-stroke:0.15px #000;">CA-2014-167164</div>
<div class="t" style="left:1135px;top:427.03px;font-size:10.6px;color:#000;font-weight:normal;-webkit-text-stroke:0.15px #000;">No</div>
<div class="t" style="left:711px;width:600px;text-align:right;top:427.03px;font-size:10.6px;color:#000;font-weight:normal;-webkit-text-stroke:0.15px #000;">13.05.14</div>
<div class="t" style="left:815px;width:600px;text-align:right;top:427.03px;font-size:10.6px;color:#000;font-weight:normal;-webkit-text-stroke:0.15px #000;">15.05.14</div>
<div class="t" style="left:671px;width:600px;text-align:center;top:440.03px;font-size:10.6px;color:#555;font-weight:normal;">20</div>
<div class="a" style="left:961px;top:450.5px;width:21px;height:1px;background:#cdcdcd;"></div>
<div class="t" style="left:437px;width:600px;text-align:right;top:440.03px;font-size:10.6px;color:#000;font-weight:normal;-webkit-text-stroke:0.15px #000;">19</div>
<div class="t" style="left:1043px;top:440.03px;font-size:10.6px;color:#000;font-weight:normal;-webkit-text-stroke:0.15px #000;">CA-2014-143336</div>
<div class="t" style="left:1135px;top:440.03px;font-size:10.6px;color:#000;font-weight:normal;-webkit-text-stroke:0.15px #000;">Yes</div>
<div class="t" style="left:711px;width:600px;text-align:right;top:440.03px;font-size:10.6px;color:#000;font-weight:normal;-webkit-text-stroke:0.15px #000;">27.08.14</div>
<div class="t" style="left:815px;width:600px;text-align:right;top:440.03px;font-size:10.6px;color:#000;font-weight:normal;-webkit-text-stroke:0.15px #000;">01.09.14</div>
<div class="t" style="left:671px;width:600px;text-align:center;top:453.03px;font-size:10.6px;color:#555;font-weight:normal;">21</div>
<div class="a" style="left:961px;top:463.5px;width:21px;height:1px;background:#cdcdcd;"></div>
<div class="t" style="left:437px;width:600px;text-align:right;top:453.03px;font-size:10.6px;color:#000;font-weight:normal;-webkit-text-stroke:0.15px #000;">20</div>
<div class="t" style="left:1043px;top:453.03px;font-size:10.6px;color:#000;font-weight:normal;-webkit-text-stroke:0.15px #000;">CA-2014-143336</div>
<div class="t" style="left:1135px;top:453.03px;font-size:10.6px;color:#000;font-weight:normal;-webkit-text-stroke:0.15px #000;">Yes</div>
<div class="t" style="left:711px;width:600px;text-align:right;top:453.03px;font-size:10.6px;color:#000;font-weight:normal;-webkit-text-stroke:0.15px #000;">27.08.14</div>
<div class="t" style="left:815px;width:600px;text-align:right;top:453.03px;font-size:10.6px;color:#000;font-weight:normal;-webkit-text-stroke:0.15px #000;">01.09.14</div>
<div class="t" style="left:671px;width:600px;text-align:center;top:466.03px;font-size:10.6px;color:#555;font-weight:normal;">22</div>
<div class="a" style="left:961px;top:476.5px;width:21px;height:1px;background:#cdcdcd;"></div>
<div class="t" style="left:437px;width:600px;text-align:right;top:466.03px;font-size:10.6px;color:#000;font-weight:normal;-webkit-text-stroke:0.15px #000;">21</div>
<div class="t" style="left:1043px;top:466.03px;font-size:10.6px;color:#000;font-weight:normal;-webkit-text-stroke:0.15px #000;">CA-2014-143336</div>
<div class="t" style="left:1135px;top:466.03px;font-size:10.6px;color:#000;font-weight:normal;-webkit-text-stroke:0.15px #000;">Yes</div>
<div class="t" style="left:711px;width:600px;text-align:right;top:466.03px;font-size:10.6px;color:#000;font-weight:normal;-webkit-text-stroke:0.15px #000;">27.08.14</div>
<div class="t" style="left:815px;width:600px;text-align:right;top:466.03px;font-size:10.6px;color:#000;font-weight:normal;-webkit-text-stroke:0.15px #000;">01.09.14</div>
<div class="t" style="left:671px;width:600px;text-align:center;top:479.03px;font-size:10.6px;color:#555;font-weight:normal;">23</div>
<div class="a" style="left:961px;top:489.5px;width:21px;height:1px;background:#cdcdcd;"></div>
<div class="t" style="left:437px;width:600px;text-align:right;top:479.03px;font-size:10.6px;color:#000;font-weight:normal;-webkit-text-stroke:0.15px #000;">22</div>
<div class="t" style="left:1043px;top:479.03px;font-size:10.6px;color:#000;font-weight:normal;-webkit-text-stroke:0.15px #000;">CA-2016-137330</div>
<div class="t" style="left:1135px;top:479.03px;font-size:10.6px;color:#000;font-weight:normal;-webkit-text-stroke:0.15px #000;">No</div>
<div class="t" style="left:711px;width:600px;text-align:right;top:479.03px;font-size:10.6px;color:#000;font-weight:normal;-webkit-text-stroke:0.15px #000;">09.12.16</div>
<div class="t" style="left:815px;width:600px;text-align:right;top:479.03px;font-size:10.6px;color:#000;font-weight:normal;-webkit-text-stroke:0.15px #000;">13.12.16</div>
<div class="t" style="left:671px;width:600px;text-align:center;top:492.03px;font-size:10.6px;color:#555;font-weight:normal;">24</div>
<div class="a" style="left:961px;top:502.5px;width:21px;height:1px;background:#cdcdcd;"></div>
<div class="t" style="left:437px;width:600px;text-align:right;top:492.03px;font-size:10.6px;color:#000;font-weight:normal;-webkit-text-stroke:0.15px #000;">23</div>
<div class="t" style="left:1043px;top:492.03px;font-size:10.6px;color:#000;font-weight:normal;-webkit-text-stroke:0.15px #000;">CA-2016-137330</div>
<div class="t" style="left:1135px;top:492.03px;font-size:10.6px;color:#000;font-weight:normal;-webkit-text-stroke:0.15px #000;">No</div>
<div class="t" style="left:711px;width:600px;text-align:right;top:492.03px;font-size:10.6px;color:#000;font-weight:normal;-webkit-text-stroke:0.15px #000;">09.12.16</div>
<div class="t" style="left:815px;width:600px;text-align:right;top:492.03px;font-size:10.6px;color:#000;font-weight:normal;-webkit-text-stroke:0.15px #000;">13.12.16</div>
<div class="t" style="left:671px;width:600px;text-align:center;top:505.03px;font-size:10.6px;color:#555;font-weight:normal;">25</div>
<div class="a" style="left:961px;top:515.5px;width:21px;height:1px;background:#cdcdcd;"></div>
<div class="t" style="left:437px;width:600px;text-align:right;top:505.03px;font-size:10.6px;color:#000;font-weight:normal;-webkit-text-stroke:0.15px #000;">24</div>
<div class="t" style="left:1043px;top:505.03px;font-size:10.6px;color:#000;font-weight:normal;-webkit-text-stroke:0.15px #000;">US-2017-156909</div>
<div class="t" style="left:1135px;top:505.03px;font-size:10.6px;color:#000;font-weight:normal;-webkit-text-stroke:0.15px #000;">No</div>
<div class="t" style="left:711px;width:600px;text-align:right;top:505.03px;font-size:10.6px;color:#000;font-weight:normal;-webkit-text-stroke:0.15px #000;">16.07.17</div>
<div class="t" style="left:815px;width:600px;text-align:right;top:505.03px;font-size:10.6px;color:#000;font-weight:normal;-webkit-text-stroke:0.15px #000;">18.07.17</div>
<div class="t" style="left:671px;width:600px;text-align:center;top:518.03px;font-size:10.6px;color:#555;font-weight:normal;">26</div>
<div class="a" style="left:961px;top:528.5px;width:21px;height:1px;background:#cdcdcd;"></div>
<div class="t" style="left:437px;width:600px;text-align:right;top:518.03px;font-size:10.6px;color:#000;font-weight:normal;-webkit-text-stroke:0.15px #000;">25</div>
<div class="t" style="left:1043px;top:518.03px;font-size:10.6px;color:#000;font-weight:normal;-webkit-text-stroke:0.15px #000;">CA-2015-106320</div>
<div class="t" style="left:1135px;top:518.03px;font-size:10.6px;color:#000;font-weight:normal;-webkit-text-stroke:0.15px #000;">No</div>
<div class="t" style="left:711px;width:600px;text-align:right;top:518.03px;font-size:10.6px;color:#000;font-weight:normal;-webkit-text-stroke:0.15px #000;">25.09.15</div>
<div class="t" style="left:815px;width:600px;text-align:right;top:518.03px;font-size:10.6px;color:#000;font-weight:normal;-webkit-text-stroke:0.15px #000;">30.09.15</div>
<div class="t" style="left:671px;width:600px;text-align:center;top:531.03px;font-size:10.6px;color:#555;font-weight:normal;">27</div>
<div class="a" style="left:961px;top:541.5px;width:21px;height:1px;background:#cdcdcd;"></div>
<div class="t" style="left:437px;width:600px;text-align:right;top:531.03px;font-size:10.6px;color:#000;font-weight:normal;-webkit-text-stroke:0.15px #000;">26</div>
<div class="t" style="left:1043px;top:531.03px;font-size:10.6px;color:#000;font-weight:normal;-webkit-text-stroke:0.15px #000;">CA-2016-121755</div>
<div class="t" style="left:1135px;top:531.03px;font-size:10.6px;color:#000;font-weight:normal;-webkit-text-stroke:0.15px #000;">No</div>
<div class="t" style="left:711px;width:600px;text-align:right;top:531.03px;font-size:10.6px;color:#000;font-weight:normal;-webkit-text-stroke:0.15px #000;">16.01.16</div>
<div class="t" style="left:815px;width:600px;text-align:right;top:531.03px;font-size:10.6px;color:#000;font-weight:normal;-webkit-text-stroke:0.15px #000;">20.01.16</div>
<div class="t" style="left:671px;width:600px;text-align:center;top:544.03px;font-size:10.6px;color:#555;font-weight:normal;">28</div>
<div class="a" style="left:961px;top:554.5px;width:21px;height:1px;background:#cdcdcd;"></div>
<div class="t" style="left:437px;width:600px;text-align:right;top:544.03px;font-size:10.6px;color:#000;font-weight:normal;-webkit-text-stroke:0.15px #000;">27</div>
<div class="t" style="left:1043px;top:544.03px;font-size:10.6px;color:#000;font-weight:normal;-webkit-text-stroke:0.15px #000;">CA-2016-121755</div>
<div class="t" style="left:1135px;top:544.03px;font-size:10.6px;color:#000;font-weight:normal;-webkit-text-stroke:0.15px #000;">No</div>
<div class="t" style="left:711px;width:600px;text-align:right;top:544.03px;font-size:10.6px;color:#000;font-weight:normal;-webkit-text-stroke:0.15px #000;">16.01.16</div>
<div class="t" style="left:815px;width:600px;text-align:right;top:544.03px;font-size:10.6px;color:#000;font-weight:normal;-webkit-text-stroke:0.15px #000;">20.01.16</div>
<div class="t" style="left:671px;width:600px;text-align:center;top:557.03px;font-size:10.6px;color:#555;font-weight:normal;">29</div>
<div class="a" style="left:961px;top:567.5px;width:21px;height:1px;background:#cdcdcd;"></div>
<div class="t" style="left:437px;width:600px;text-align:right;top:557.03px;font-size:10.6px;color:#000;font-weight:normal;-webkit-text-stroke:0.15px #000;">28</div>
<div class="t" style="left:1043px;top:557.03px;font-size:10.6px;color:#000;font-weight:normal;-webkit-text-stroke:0.15px #000;">US-2015-150630</div>
<div class="t" style="left:1135px;top:557.03px;font-size:10.6px;color:#000;font-weight:normal;-webkit-text-stroke:0.15px #000;">No</div>
<div class="t" style="left:711px;width:600px;text-align:right;top:557.03px;font-size:10.6px;color:#000;font-weight:normal;-webkit-text-stroke:0.15px #000;">17.09.15</div>
<div class="t" style="left:815px;width:600px;text-align:right;top:557.03px;font-size:10.6px;color:#000;font-weight:normal;-webkit-text-stroke:0.15px #000;">21.09.15</div>
<div class="t" style="left:671px;width:600px;text-align:center;top:570.03px;font-size:10.6px;color:#555;font-weight:normal;">30</div>
<div class="a" style="left:961px;top:580.5px;width:21px;height:1px;background:#cdcdcd;"></div>
<div class="t" style="left:437px;width:600px;text-align:right;top:570.03px;font-size:10.6px;color:#000;font-weight:normal;-webkit-text-stroke:0.15px #000;">29</div>
<div class="t" style="left:1043px;top:570.03px;font-size:10.6px;color:#000;font-weight:normal;-webkit-text-stroke:0.15px #000;">US-2015-150630</div>
<div class="t" style="left:1135px;top:570.03px;font-size:10.6px;color:#000;font-weight:normal;-webkit-text-stroke:0.15px #000;">No</div>
<div class="t" style="left:711px;width:600px;text-align:right;top:570.03px;font-size:10.6px;color:#000;font-weight:normal;-webkit-text-stroke:0.15px #000;">17.09.15</div>
<div class="t" style="left:815px;width:600px;text-align:right;top:570.03px;font-size:10.6px;color:#000;font-weight:normal;-webkit-text-stroke:0.15px #000;">21.09.15</div>
<div class="t" style="left:671px;width:600px;text-align:center;top:583.03px;font-size:10.6px;color:#555;font-weight:normal;">31</div>
<div class="a" style="left:961px;top:593.5px;width:21px;height:1px;background:#cdcdcd;"></div>
<div class="t" style="left:437px;width:600px;text-align:right;top:583.03px;font-size:10.6px;color:#000;font-weight:normal;-webkit-text-stroke:0.15px #000;">30</div>
<div class="t" style="left:1043px;top:583.03px;font-size:10.6px;color:#000;font-weight:normal;-webkit-text-stroke:0.15px #000;">US-2015-150630</div>
<div class="t" style="left:1135px;top:583.03px;font-size:10.6px;color:#000;font-weight:normal;-webkit-text-stroke:0.15px #000;">No</div>
<div class="t" style="left:711px;width:600px;text-align:right;top:583.03px;font-size:10.6px;color:#000;font-weight:normal;-webkit-text-stroke:0.15px #000;">17.09.15</div>
<div class="t" style="left:815px;width:600px;text-align:right;top:583.03px;font-size:10.6px;color:#000;font-weight:normal;-webkit-text-stroke:0.15px #000;">21.09.15</div>
<div class="t" style="left:671px;width:600px;text-align:center;top:596.03px;font-size:10.6px;color:#555;font-weight:normal;">32</div>
<div class="a" style="left:961px;top:606.5px;width:21px;height:1px;background:#cdcdcd;"></div>
<div class="t" style="left:437px;width:600px;text-align:right;top:596.03px;font-size:10.6px;color:#000;font-weight:normal;-webkit-text-stroke:0.15px #000;">31</div>
<div class="t" style="left:1043px;top:596.03px;font-size:10.6px;color:#000;font-weight:normal;-webkit-text-stroke:0.15px #000;">US-2015-150630</div>
<div class="t" style="left:1135px;top:596.03px;font-size:10.6px;color:#000;font-weight:normal;-webkit-text-stroke:0.15px #000;">No</div>
<div class="t" style="left:711px;width:600px;text-align:right;top:596.03px;font-size:10.6px;color:#000;font-weight:normal;-webkit-text-stroke:0.15px #000;">17.09.15</div>
<div class="t" style="left:815px;width:600px;text-align:right;top:596.03px;font-size:10.6px;color:#000;font-weight:normal;-webkit-text-stroke:0.15px #000;">21.09.15</div>
<div class="t" style="left:671px;width:600px;text-align:center;top:609.03px;font-size:10.6px;color:#555;font-weight:normal;">33</div>
<div class="a" style="left:961px;top:619.5px;width:21px;height:1px;background:#cdcdcd;"></div>
<div class="t" style="left:437px;width:600px;text-align:right;top:609.03px;font-size:10.6px;color:#000;font-weight:normal;-webkit-text-stroke:0.15px #000;">32</div>
<div class="t" style="left:1043px;top:609.03px;font-size:10.6px;color:#000;font-weight:normal;-webkit-text-stroke:0.15px #000;">US-2015-150630</div>
<div class="t" style="left:1135px;top:609.03px;font-size:10.6px;color:#000;font-weight:normal;-webkit-text-stroke:0.15px #000;">No</div>
<div class="t" style="left:711px;width:600px;text-align:right;top:609.03px;font-size:10.6px;color:#000;font-weight:normal;-webkit-text-stroke:0.15px #000;">17.09.15</div>
<div class="t" style="left:815px;width:600px;text-align:right;top:609.03px;font-size:10.6px;color:#000;font-weight:normal;-webkit-text-stroke:0.15px #000;">21.09.15</div>
<div class="t" style="left:671px;width:600px;text-align:center;top:622.03px;font-size:10.6px;color:#555;font-weight:normal;">34</div>
<div class="a" style="left:961px;top:632.5px;width:21px;height:1px;background:#cdcdcd;"></div>
<div class="t" style="left:437px;width:600px;text-align:right;top:622.03px;font-size:10.6px;color:#000;font-weight:normal;-webkit-text-stroke:0.15px #000;">33</div>
<div class="t" style="left:1043px;top:622.03px;font-size:10.6px;color:#000;font-weight:normal;-webkit-text-stroke:0.15px #000;">US-2015-150630</div>
<div class="t" style="left:1135px;top:622.03px;font-size:10.6px;color:#000;font-weight:normal;-webkit-text-stroke:0.15px #000;">No</div>
<div class="t" style="left:711px;width:600px;text-align:right;top:622.03px;font-size:10.6px;color:#000;font-weight:normal;-webkit-text-stroke:0.15px #000;">17.09.15</div>
<div class="t" style="left:815px;width:600px;text-align:right;top:622.03px;font-size:10.6px;color:#000;font-weight:normal;-webkit-text-stroke:0.15px #000;">21.09.15</div>
<div class="t" style="left:671px;width:600px;text-align:center;top:635.03px;font-size:10.6px;color:#555;font-weight:normal;">35</div>
<div class="a" style="left:961px;top:645.5px;width:21px;height:1px;background:#cdcdcd;"></div>
<div class="t" style="left:437px;width:600px;text-align:right;top:635.03px;font-size:10.6px;color:#000;font-weight:normal;-webkit-text-stroke:0.15px #000;">34</div>
<div class="t" style="left:1043px;top:635.03px;font-size:10.6px;color:#000;font-weight:normal;-webkit-text-stroke:0.15px #000;">US-2015-150630</div>
<div class="t" style="left:1135px;top:635.03px;font-size:10.6px;color:#000;font-weight:normal;-webkit-text-stroke:0.15px #000;">No</div>
<div class="t" style="left:711px;width:600px;text-align:right;top:635.03px;font-size:10.6px;color:#000;font-weight:normal;-webkit-text-stroke:0.15px #000;">17.09.15</div>
<div class="t" style="left:815px;width:600px;text-align:right;top:635.03px;font-size:10.6px;color:#000;font-weight:normal;-webkit-text-stroke:0.15px #000;">21.09.15</div>
<div class="t" style="left:671px;width:600px;text-align:center;top:648.03px;font-size:10.6px;color:#555;font-weight:normal;">36</div>
<div class="a" style="left:961px;top:658.5px;width:21px;height:1px;background:#cdcdcd;"></div>
<div class="t" style="left:437px;width:600px;text-align:right;top:648.03px;font-size:10.6px;color:#000;font-weight:normal;-webkit-text-stroke:0.15px #000;">35</div>
<div class="t" style="left:1043px;top:648.03px;font-size:10.6px;color:#000;font-weight:normal;-webkit-text-stroke:0.15px #000;">CA-2017-107727</div>
<div class="t" style="left:1135px;top:648.03px;font-size:10.6px;color:#000;font-weight:normal;-webkit-text-stroke:0.15px #000;">No</div>
<div class="t" style="left:711px;width:600px;text-align:right;top:648.03px;font-size:10.6px;color:#000;font-weight:normal;-webkit-text-stroke:0.15px #000;">19.10.17</div>
<div class="t" style="left:815px;width:600px;text-align:right;top:648.03px;font-size:10.6px;color:#000;font-weight:normal;-webkit-text-stroke:0.15px #000;">23.10.17</div>
<div class="t" style="left:671px;width:600px;text-align:center;top:661.03px;font-size:10.6px;color:#555;font-weight:normal;">37</div>
<div class="a" style="left:961px;top:671.5px;width:21px;height:1px;background:#cdcdcd;"></div>
<div class="t" style="left:437px;width:600px;text-align:right;top:661.03px;font-size:10.6px;color:#000;font-weight:normal;-webkit-text-stroke:0.15px #000;">36</div>
<div class="t" style="left:1043px;top:661.03px;font-size:10.6px;color:#000;font-weight:normal;-webkit-text-stroke:0.15px #000;">CA-2016-117590</div>
<div class="t" style="left:1135px;top:661.03px;font-size:10.6px;color:#000;font-weight:normal;-webkit-text-stroke:0.15px #000;">No</div>
<div class="t" style="left:711px;width:600px;text-align:right;top:661.03px;font-size:10.6px;color:#000;font-weight:normal;-webkit-text-stroke:0.15px #000;">08.12.16</div>
<div class="t" style="left:815px;width:600px;text-align:right;top:661.03px;font-size:10.6px;color:#000;font-weight:normal;-webkit-text-stroke:0.15px #000;">10.12.16</div>
<div class="t" style="left:671px;width:600px;text-align:center;top:674.03px;font-size:10.6px;color:#555;font-weight:normal;">38</div>
<div class="a" style="left:961px;top:684.5px;width:21px;height:1px;background:#cdcdcd;"></div>
<div class="t" style="left:437px;width:600px;text-align:right;top:674.03px;font-size:10.6px;color:#000;font-weight:normal;-webkit-text-stroke:0.15px #000;">37</div>
<div class="t" style="left:1043px;top:674.03px;font-size:10.6px;color:#000;font-weight:normal;-webkit-text-stroke:0.15px #000;">CA-2016-117590</div>
<div class="t" style="left:1135px;top:674.03px;font-size:10.6px;color:#000;font-weight:normal;-webkit-text-stroke:0.15px #000;">No</div>
<div class="t" style="left:711px;width:600px;text-align:right;top:674.03px;font-size:10.6px;color:#000;font-weight:normal;-webkit-text-stroke:0.15px #000;">08.12.16</div>
<div class="t" style="left:815px;width:600px;text-align:right;top:674.03px;font-size:10.6px;color:#000;font-weight:normal;-webkit-text-stroke:0.15px #000;">10.12.16</div>
<div class="t" style="left:671px;width:600px;text-align:center;top:687.03px;font-size:10.6px;color:#555;font-weight:normal;">39</div>
<div class="a" style="left:961px;top:697.5px;width:21px;height:1px;background:#cdcdcd;"></div>
<div class="t" style="left:437px;width:600px;text-align:right;top:687.03px;font-size:10.6px;color:#000;font-weight:normal;-webkit-text-stroke:0.15px #000;">38</div>
<div class="t" style="left:1043px;top:687.03px;font-size:10.6px;color:#000;font-weight:normal;-webkit-text-stroke:0.15px #000;">CA-2015-117415</div>
<div class="t" style="left:1135px;top:687.03px;font-size:10.6px;color:#000;font-weight:normal;-webkit-text-stroke:0.15px #000;">No</div>
<div class="t" style="left:711px;width:600px;text-align:right;top:687.03px;font-size:10.6px;color:#000;font-weight:normal;-webkit-text-stroke:0.15px #000;">27.12.15</div>
<div class="t" style="left:815px;width:600px;text-align:right;top:687.03px;font-size:10.6px;color:#000;font-weight:normal;-webkit-text-stroke:0.15px #000;">31.12.15</div>
<div class="t" style="left:671px;width:600px;text-align:center;top:700.03px;font-size:10.6px;color:#555;font-weight:normal;">40</div>
<div class="a" style="left:961px;top:710.5px;width:21px;height:1px;background:#cdcdcd;"></div>
<div class="t" style="left:437px;width:600px;text-align:right;top:700.03px;font-size:10.6px;color:#000;font-weight:normal;-webkit-text-stroke:0.15px #000;">39</div>
<div class="t" style="left:1043px;top:700.03px;font-size:10.6px;color:#000;font-weight:normal;-webkit-text-stroke:0.15px #000;">CA-2015-117415</div>
<div class="t" style="left:1135px;top:700.03px;font-size:10.6px;color:#000;font-weight:normal;-webkit-text-stroke:0.15px #000;">No</div>
<div class="t" style="left:711px;width:600px;text-align:right;top:700.03px;font-size:10.6px;color:#000;font-weight:normal;-webkit-text-stroke:0.15px #000;">27.12.15</div>
<div class="t" style="left:815px;width:600px;text-align:right;top:700.03px;font-size:10.6px;color:#000;font-weight:normal;-webkit-text-stroke:0.15px #000;">31.12.15</div>
<div class="t" style="left:671px;width:600px;text-align:center;top:713.03px;font-size:10.6px;color:#555;font-weight:normal;">41</div>
<div class="a" style="left:961px;top:723.5px;width:21px;height:1px;background:#cdcdcd;"></div>
<div class="t" style="left:437px;width:600px;text-align:right;top:713.03px;font-size:10.6px;color:#000;font-weight:normal;-webkit-text-stroke:0.15px #000;">40</div>
<div class="t" style="left:1043px;top:713.03px;font-size:10.6px;color:#000;font-weight:normal;-webkit-text-stroke:0.15px #000;">CA-2015-117415</div>
<div class="t" style="left:1135px;top:713.03px;font-size:10.6px;color:#000;font-weight:normal;-webkit-text-stroke:0.15px #000;">No</div>
<div class="t" style="left:711px;width:600px;text-align:right;top:713.03px;font-size:10.6px;color:#000;font-weight:normal;-webkit-text-stroke:0.15px #000;">27.12.15</div>
<div class="t" style="left:815px;width:600px;text-align:right;top:713.03px;font-size:10.6px;color:#000;font-weight:normal;-webkit-text-stroke:0.15px #000;">31.12.15</div>
<div class="t" style="left:671px;width:600px;text-align:center;top:726.03px;font-size:10.6px;color:#555;font-weight:normal;">42</div>
<div class="a" style="left:961px;top:736.5px;width:21px;height:1px;background:#cdcdcd;"></div>
<div class="t" style="left:437px;width:600px;text-align:right;top:726.03px;font-size:10.6px;color:#000;font-weight:normal;-webkit-text-stroke:0.15px #000;">41</div>
<div class="t" style="left:1043px;top:726.03px;font-size:10.6px;color:#000;font-weight:normal;-webkit-text-stroke:0.15px #000;">CA-2015-117415</div>
<div class="t" style="left:1135px;top:726.03px;font-size:10.6px;color:#000;font-weight:normal;-webkit-text-stroke:0.15px #000;">No</div>
<div class="t" style="left:711px;width:600px;text-align:right;top:726.03px;font-size:10.6px;color:#000;font-weight:normal;-webkit-text-stroke:0.15px #000;">27.12.15</div>
<div class="t" style="left:815px;width:600px;text-align:right;top:726.03px;font-size:10.6px;color:#000;font-weight:normal;-webkit-text-stroke:0.15px #000;">31.12.15</div>
<div class="t" style="left:671px;width:600px;text-align:center;top:739.03px;font-size:10.6px;color:#555;font-weight:normal;">43</div>
<div class="a" style="left:961px;top:749.5px;width:21px;height:1px;background:#cdcdcd;"></div>
<div class="t" style="left:437px;width:600px;text-align:right;top:739.03px;font-size:10.6px;color:#000;font-weight:normal;-webkit-text-stroke:0.15px #000;">42</div>
<div class="t" style="left:1043px;top:739.03px;font-size:10.6px;color:#000;font-weight:normal;-webkit-text-stroke:0.15px #000;">CA-2017-120999</div>
<div class="t" style="left:1135px;top:739.03px;font-size:10.6px;color:#000;font-weight:normal;-webkit-text-stroke:0.15px #000;">No</div>
<div class="t" style="left:711px;width:600px;text-align:right;top:739.03px;font-size:10.6px;color:#000;font-weight:normal;-webkit-text-stroke:0.15px #000;">10.09.17</div>
<div class="t" style="left:815px;width:600px;text-align:right;top:739.03px;font-size:10.6px;color:#000;font-weight:normal;-webkit-text-stroke:0.15px #000;">15.09.17</div>
<div class="t" style="left:671px;width:600px;text-align:center;top:752.03px;font-size:10.6px;color:#555;font-weight:normal;">44</div>
<div class="a" style="left:961px;top:762.5px;width:21px;height:1px;background:#cdcdcd;"></div>
<div class="t" style="left:437px;width:600px;text-align:right;top:752.03px;font-size:10.6px;color:#000;font-weight:normal;-webkit-text-stroke:0.15px #000;">43</div>
<div class="t" style="left:1043px;top:752.03px;font-size:10.6px;color:#000;font-weight:normal;-webkit-text-stroke:0.15px #000;">CA-2016-101343</div>
<div class="t" style="left:1135px;top:752.03px;font-size:10.6px;color:#000;font-weight:normal;-webkit-text-stroke:0.15px #000;">No</div>
<div class="t" style="left:711px;width:600px;text-align:right;top:752.03px;font-size:10.6px;color:#000;font-weight:normal;-webkit-text-stroke:0.15px #000;">17.07.16</div>
<div class="t" style="left:815px;width:600px;text-align:right;top:752.03px;font-size:10.6px;color:#000;font-weight:normal;-webkit-text-stroke:0.15px #000;">22.07.16</div>
<div class="t" style="left:671px;width:600px;text-align:center;top:765.03px;font-size:10.6px;color:#555;font-weight:normal;">45</div>
<div class="a" style="left:961px;top:775.5px;width:21px;height:1px;background:#cdcdcd;"></div>
<div class="t" style="left:437px;width:600px;text-align:right;top:765.03px;font-size:10.6px;color:#000;font-weight:normal;-webkit-text-stroke:0.15px #000;">44</div>
<div class="t" style="left:1043px;top:765.03px;font-size:10.6px;color:#000;font-weight:normal;-webkit-text-stroke:0.15px #000;">CA-2017-139619</div>
<div class="t" style="left:1135px;top:765.03px;font-size:10.6px;color:#000;font-weight:normal;-webkit-text-stroke:0.15px #000;">No</div>
<div class="t" style="left:711px;width:600px;text-align:right;top:765.03px;font-size:10.6px;color:#000;font-weight:normal;-webkit-text-stroke:0.15px #000;">19.09.17</div>
<div class="t" style="left:815px;width:600px;text-align:right;top:765.03px;font-size:10.6px;color:#000;font-weight:normal;-webkit-text-stroke:0.15px #000;">23.09.17</div>
<div class="t" style="left:671px;width:600px;text-align:center;top:778.03px;font-size:10.6px;color:#555;font-weight:normal;">46</div>
<div class="a" style="left:961px;top:788.5px;width:21px;height:1px;background:#cdcdcd;"></div>
<div class="t" style="left:437px;width:600px;text-align:right;top:778.03px;font-size:10.6px;color:#000;font-weight:normal;-webkit-text-stroke:0.15px #000;">45</div>
<div class="t" style="left:1043px;top:778.03px;font-size:10.6px;color:#000;font-weight:normal;-webkit-text-stroke:0.15px #000;">CA-2016-118255</div>
<div class="t" style="left:1135px;top:778.03px;font-size:10.6px;color:#000;font-weight:normal;-webkit-text-stroke:0.15px #000;">No</div>
<div class="t" style="left:711px;width:600px;text-align:right;top:778.03px;font-size:10.6px;color:#000;font-weight:normal;-webkit-text-stroke:0.15px #000;">11.03.16</div>
<div class="t" style="left:815px;width:600px;text-align:right;top:778.03px;font-size:10.6px;color:#000;font-weight:normal;-webkit-text-stroke:0.15px #000;">13.03.16</div>
<div class="t" style="left:671px;width:600px;text-align:center;top:791.03px;font-size:10.6px;color:#555;font-weight:normal;">47</div>
<div class="a" style="left:961px;top:801.5px;width:21px;height:1px;background:#cdcdcd;"></div>
<div class="t" style="left:437px;width:600px;text-align:right;top:791.03px;font-size:10.6px;color:#000;font-weight:normal;-webkit-text-stroke:0.15px #000;">46</div>
<div class="t" style="left:1043px;top:791.03px;font-size:10.6px;color:#000;font-weight:normal;-webkit-text-stroke:0.15px #000;">CA-2016-118255</div>
<div class="t" style="left:1135px;top:791.03px;font-size:10.6px;color:#000;font-weight:normal;-webkit-text-stroke:0.15px #000;">No</div>
<div class="t" style="left:711px;width:600px;text-align:right;top:791.03px;font-size:10.6px;color:#000;font-weight:normal;-webkit-text-stroke:0.15px #000;">11.03.16</div>
<div class="t" style="left:815px;width:600px;text-align:right;top:791.03px;font-size:10.6px;color:#000;font-weight:normal;-webkit-text-stroke:0.15px #000;">13.03.16</div>
<div class="t" style="left:671px;width:600px;text-align:center;top:804.03px;font-size:10.6px;color:#555;font-weight:normal;">48</div>
<div class="a" style="left:961px;top:814.5px;width:21px;height:1px;background:#cdcdcd;"></div>
<div class="t" style="left:437px;width:600px;text-align:right;top:804.03px;font-size:10.6px;color:#000;font-weight:normal;-webkit-text-stroke:0.15px #000;">47</div>
<div class="t" style="left:1043px;top:804.03px;font-size:10.6px;color:#000;font-weight:normal;-webkit-text-stroke:0.15px #000;">CA-2014-146703</div>
<div class="t" style="left:1135px;top:804.03px;font-size:10.6px;color:#000;font-weight:normal;-webkit-text-stroke:0.15px #000;">No</div>
<div class="t" style="left:711px;width:600px;text-align:right;top:804.03px;font-size:10.6px;color:#000;font-weight:normal;-webkit-text-stroke:0.15px #000;">20.10.14</div>
<div class="t" style="left:815px;width:600px;text-align:right;top:804.03px;font-size:10.6px;color:#000;font-weight:normal;-webkit-text-stroke:0.15px #000;">25.10.14</div>
<div class="t" style="left:671px;width:600px;text-align:center;top:817.03px;font-size:10.6px;color:#555;font-weight:normal;">49</div>
<div class="a" style="left:961px;top:827.5px;width:21px;height:1px;background:#cdcdcd;"></div>
<div class="t" style="left:437px;width:600px;text-align:right;top:817.03px;font-size:10.6px;color:#000;font-weight:normal;-webkit-text-stroke:0.15px #000;">48</div>
<div class="t" style="left:1043px;top:817.03px;font-size:10.6px;color:#000;font-weight:normal;-webkit-text-stroke:0.15px #000;">CA-2016-169194</div>
<div class="t" style="left:1135px;top:817.03px;font-size:10.6px;color:#000;font-weight:normal;-webkit-text-stroke:0.15px #000;">No</div>
<div class="t" style="left:711px;width:600px;text-align:right;top:817.03px;font-size:10.6px;color:#000;font-weight:normal;-webkit-text-stroke:0.15px #000;">20.06.16</div>
<div class="t" style="left:815px;width:600px;text-align:right;top:817.03px;font-size:10.6px;color:#000;font-weight:normal;-webkit-text-stroke:0.15px #000;">25.06.16</div>
<div class="t" style="left:671px;width:600px;text-align:center;top:830.03px;font-size:10.6px;color:#555;font-weight:normal;">50</div>
<div class="a" style="left:961px;top:840.5px;width:21px;height:1px;background:#cdcdcd;"></div>
<div class="t" style="left:437px;width:600px;text-align:right;top:830.03px;font-size:10.6px;color:#000;font-weight:normal;-webkit-text-stroke:0.15px #000;">49</div>
<div class="t" style="left:1043px;top:830.03px;font-size:10.6px;color:#000;font-weight:normal;-webkit-text-stroke:0.15px #000;">CA-2016-169194</div>
<div class="t" style="left:1135px;top:830.03px;font-size:10.6px;color:#000;font-weight:normal;-webkit-text-stroke:0.15px #000;">No</div>
<div class="t" style="left:711px;width:600px;text-align:right;top:830.03px;font-size:10.6px;color:#000;font-weight:normal;-webkit-text-stroke:0.15px #000;">20.06.16</div>
<div class="t" style="left:815px;width:600px;text-align:right;top:830.03px;font-size:10.6px;color:#000;font-weight:normal;-webkit-text-stroke:0.15px #000;">25.06.16</div>
<div class="t" style="left:671px;width:600px;text-align:center;top:843.03px;font-size:10.6px;color:#555;font-weight:normal;">51</div>
<div class="a" style="left:961px;top:853.5px;width:21px;height:1px;background:#cdcdcd;"></div>
<div class="t" style="left:437px;width:600px;text-align:right;top:843.03px;font-size:10.6px;color:#000;font-weight:normal;-webkit-text-stroke:0.15px #000;">50</div>
<div class="t" style="left:1043px;top:843.03px;font-size:10.6px;color:#000;font-weight:normal;-webkit-text-stroke:0.15px #000;">CA-2015-115742</div>
<div class="t" style="left:1135px;top:843.03px;font-size:10.6px;color:#000;font-weight:normal;-webkit-text-stroke:0.15px #000;">No</div>
<div class="t" style="left:711px;width:600px;text-align:right;top:843.03px;font-size:10.6px;color:#000;font-weight:normal;-webkit-text-stroke:0.15px #000;">18.04.15</div>
<div class="t" style="left:815px;width:600px;text-align:right;top:843.03px;font-size:10.6px;color:#000;font-weight:normal;-webkit-text-stroke:0.15px #000;">22.04.15</div>
<div class="t" style="left:671px;width:600px;text-align:center;top:856.03px;font-size:10.6px;color:#555;font-weight:normal;">52</div>
<div class="a" style="left:961px;top:866.5px;width:21px;height:1px;background:#cdcdcd;"></div>
<div class="t" style="left:437px;width:600px;text-align:right;top:856.03px;font-size:10.6px;color:#000;font-weight:normal;-webkit-text-stroke:0.15px #000;">51</div>
<div class="t" style="left:1043px;top:856.03px;font-size:10.6px;color:#000;font-weight:normal;-webkit-text-stroke:0.15px #000;">CA-2015-115742</div>
<div class="t" style="left:1135px;top:856.03px;font-size:10.6px;color:#000;font-weight:normal;-webkit-text-stroke:0.15px #000;">No</div>
<div class="t" style="left:711px;width:600px;text-align:right;top:856.03px;font-size:10.6px;color:#000;font-weight:normal;-webkit-text-stroke:0.15px #000;">18.04.15</div>
<div class="t" style="left:815px;width:600px;text-align:right;top:856.03px;font-size:10.6px;color:#000;font-weight:normal;-webkit-text-stroke:0.15px #000;">22.04.15</div>
<div class="t" style="left:671px;width:600px;text-align:center;top:869.03px;font-size:10.6px;color:#555;font-weight:normal;">53</div>
<div class="a" style="left:961px;top:879.5px;width:21px;height:1px;background:#cdcdcd;"></div>
<div class="t" style="left:437px;width:600px;text-align:right;top:869.03px;font-size:10.6px;color:#000;font-weight:normal;-webkit-text-stroke:0.15px #000;">52</div>
<div class="t" style="left:1043px;top:869.03px;font-size:10.6px;color:#000;font-weight:normal;-webkit-text-stroke:0.15px #000;">CA-2015-115742</div>
<div class="t" style="left:1135px;top:869.03px;font-size:10.6px;color:#000;font-weight:normal;-webkit-text-stroke:0.15px #000;">No</div>
<div class="t" style="left:711px;width:600px;text-align:right;top:869.03px;font-size:10.6px;color:#000;font-weight:normal;-webkit-text-stroke:0.15px #000;">18.04.15</div>
<div class="t" style="left:815px;width:600px;text-align:right;top:869.03px;font-size:10.6px;color:#000;font-weight:normal;-webkit-text-stroke:0.15px #000;">22.04.15</div>
<div class="t" style="left:671px;width:600px;text-align:center;top:882.03px;font-size:10.6px;color:#555;font-weight:normal;">54</div>
<div class="a" style="left:961px;top:892.5px;width:21px;height:1px;background:#cdcdcd;"></div>
<div class="t" style="left:437px;width:600px;text-align:right;top:882.03px;font-size:10.6px;color:#000;font-weight:normal;-webkit-text-stroke:0.15px #000;">53</div>
<div class="t" style="left:1043px;top:882.03px;font-size:10.6px;color:#000;font-weight:normal;-webkit-text-stroke:0.15px #000;">CA-2015-115742</div>
<div class="t" style="left:1135px;top:882.03px;font-size:10.6px;color:#000;font-weight:normal;-webkit-text-stroke:0.15px #000;">No</div>
<div class="t" style="left:711px;width:600px;text-align:right;top:882.03px;font-size:10.6px;color:#000;font-weight:normal;-webkit-text-stroke:0.15px #000;">18.04.15</div>
<div class="t" style="left:815px;width:600px;text-align:right;top:882.03px;font-size:10.6px;color:#000;font-weight:normal;-webkit-text-stroke:0.15px #000;">22.04.15</div>
<div class="t" style="left:671px;width:600px;text-align:center;top:895.03px;font-size:10.6px;color:#555;font-weight:normal;">55</div>
<div class="a" style="left:961px;top:905.5px;width:21px;height:1px;background:#cdcdcd;"></div>
<div class="t" style="left:437px;width:600px;text-align:right;top:895.03px;font-size:10.6px;color:#000;font-weight:normal;-webkit-text-stroke:0.15px #000;">54</div>
<div class="t" style="left:1043px;top:895.03px;font-size:10.6px;color:#000;font-weight:normal;-webkit-text-stroke:0.15px #000;">CA-2016-105816</div>
<div class="t" style="left:1135px;top:895.03px;font-size:10.6px;color:#000;font-weight:normal;-webkit-text-stroke:0.15px #000;">No</div>
<div class="t" style="left:711px;width:600px;text-align:right;top:895.03px;font-size:10.6px;color:#000;font-weight:normal;-webkit-text-stroke:0.15px #000;">11.12.16</div>
<div class="t" style="left:815px;width:600px;text-align:right;top:895.03px;font-size:10.6px;color:#000;font-weight:normal;-webkit-text-stroke:0.15px #000;">17.12.16</div>
<div class="t" style="left:671px;width:600px;text-align:center;top:908.03px;font-size:10.6px;color:#555;font-weight:normal;">56</div>
<div class="a" style="left:961px;top:918.5px;width:21px;height:1px;background:#cdcdcd;"></div>
<div class="t" style="left:437px;width:600px;text-align:right;top:908.03px;font-size:10.6px;color:#000;font-weight:normal;-webkit-text-stroke:0.15px #000;">55</div>
<div class="t" style="left:1043px;top:908.03px;font-size:10.6px;color:#000;font-weight:normal;-webkit-text-stroke:0.15px #000;">CA-2016-105816</div>
<div class="t" style="left:1135px;top:908.03px;font-size:10.6px;color:#000;font-weight:normal;-webkit-text-stroke:0.15px #000;">No</div>
<div class="t" style="left:711px;width:600px;text-align:right;top:908.03px;font-size:10.6px;color:#000;font-weight:normal;-webkit-text-stroke:0.15px #000;">11.12.16</div>
<div class="t" style="left:815px;width:600px;text-align:right;top:908.03px;font-size:10.6px;color:#000;font-weight:normal;-webkit-text-stroke:0.15px #000;">17.12.16</div>
<div class="t" style="left:671px;width:600px;text-align:center;top:921.03px;font-size:10.6px;color:#555;font-weight:normal;">57</div>
<div class="a" style="left:961px;top:931.5px;width:21px;height:1px;background:#cdcdcd;"></div>
<div class="t" style="left:437px;width:600px;text-align:right;top:921.03px;font-size:10.6px;color:#000;font-weight:normal;-webkit-text-stroke:0.15px #000;">56</div>
<div class="t" style="left:1043px;top:921.03px;font-size:10.6px;color:#000;font-weight:normal;-webkit-text-stroke:0.15px #000;">CA-2016-111682</div>
<div class="t" style="left:1135px;top:921.03px;font-size:10.6px;color:#000;font-weight:normal;-webkit-text-stroke:0.15px #000;">Yes</div>
<div class="t" style="left:711px;width:600px;text-align:right;top:921.03px;font-size:10.6px;color:#000;font-weight:normal;-webkit-text-stroke:0.15px #000;">17.06.16</div>
<div class="t" style="left:815px;width:600px;text-align:right;top:921.03px;font-size:10.6px;color:#000;font-weight:normal;-webkit-text-stroke:0.15px #000;">18.06.16</div>
<div class="t" style="left:671px;width:600px;text-align:center;top:934.03px;font-size:10.6px;color:#555;font-weight:normal;">58</div>
<div class="a" style="left:961px;top:944.5px;width:21px;height:1px;background:#cdcdcd;"></div>
<div class="t" style="left:437px;width:600px;text-align:right;top:934.03px;font-size:10.6px;color:#000;font-weight:normal;-webkit-text-stroke:0.15px #000;">57</div>
<div class="t" style="left:1043px;top:934.03px;font-size:10.6px;color:#000;font-weight:normal;-webkit-text-stroke:0.15px #000;">CA-2016-111682</div>
<div class="t" style="left:1135px;top:934.03px;font-size:10.6px;color:#000;font-weight:normal;-webkit-text-stroke:0.15px #000;">Yes</div>
<div class="t" style="left:711px;width:600px;text-align:right;top:934.03px;font-size:10.6px;color:#000;font-weight:normal;-webkit-text-stroke:0.15px #000;">17.06.16</div>
<div class="t" style="left:815px;width:600px;text-align:right;top:934.03px;font-size:10.6px;color:#000;font-weight:normal;-webkit-text-stroke:0.15px #000;">18.06.16</div>
<div class="t" style="left:671px;width:600px;text-align:center;top:947.03px;font-size:10.6px;color:#555;font-weight:normal;">59</div>
<div class="a" style="left:961px;top:957.5px;width:21px;height:1px;background:#cdcdcd;"></div>
<div class="t" style="left:437px;width:600px;text-align:right;top:947.03px;font-size:10.6px;color:#000;font-weight:normal;-webkit-text-stroke:0.15px #000;">58</div>
<div class="t" style="left:1043px;top:947.03px;font-size:10.6px;color:#000;font-weight:normal;-webkit-text-stroke:0.15px #000;">CA-2016-111682</div>
<div class="t" style="left:1135px;top:947.03px;font-size:10.6px;color:#000;font-weight:normal;-webkit-text-stroke:0.15px #000;">Yes</div>
<div class="t" style="left:711px;width:600px;text-align:right;top:947.03px;font-size:10.6px;color:#000;font-weight:normal;-webkit-text-stroke:0.15px #000;">17.06.16</div>
<div class="t" style="left:815px;width:600px;text-align:right;top:947.03px;font-size:10.6px;color:#000;font-weight:normal;-webkit-text-stroke:0.15px #000;">18.06.16</div>
<div class="t" style="left:671px;width:600px;text-align:center;top:960.03px;font-size:10.6px;color:#555;font-weight:normal;">60</div>
<div class="a" style="left:961px;top:970.5px;width:21px;height:1px;background:#cdcdcd;"></div>
<div class="t" style="left:437px;width:600px;text-align:right;top:960.03px;font-size:10.6px;color:#000;font-weight:normal;-webkit-text-stroke:0.15px #000;">59</div>
<div class="t" style="left:1043px;top:960.03px;font-size:10.6px;color:#000;font-weight:normal;-webkit-text-stroke:0.15px #000;">CA-2016-111682</div>
<div class="t" style="left:1135px;top:960.03px;font-size:10.6px;color:#000;font-weight:normal;-webkit-text-stroke:0.15px #000;">Yes</div>
<div class="t" style="left:711px;width:600px;text-align:right;top:960.03px;font-size:10.6px;color:#000;font-weight:normal;-webkit-text-stroke:0.15px #000;">17.06.16</div>
<div class="t" style="left:815px;width:600px;text-align:right;top:960.03px;font-size:10.6px;color:#000;font-weight:normal;-webkit-text-stroke:0.15px #000;">18.06.16</div>
<div class="t" style="left:671px;width:600px;text-align:center;top:973.03px;font-size:10.6px;color:#555;font-weight:normal;">61</div>
<div class="a" style="left:961px;top:983.5px;width:21px;height:1px;background:#cdcdcd;"></div>
<div class="t" style="left:437px;width:600px;text-align:right;top:973.03px;font-size:10.6px;color:#000;font-weight:normal;-webkit-text-stroke:0.15px #000;">60</div>
<div class="t" style="left:1043px;top:973.03px;font-size:10.6px;color:#000;font-weight:normal;-webkit-text-stroke:0.15px #000;">CA-2016-111682</div>
<div class="t" style="left:1135px;top:973.03px;font-size:10.6px;color:#000;font-weight:normal;-webkit-text-stroke:0.15px #000;">Yes</div>
<div class="t" style="left:711px;width:600px;text-align:right;top:973.03px;font-size:10.6px;color:#000;font-weight:normal;-webkit-text-stroke:0.15px #000;">17.06.16</div>
<div class="t" style="left:815px;width:600px;text-align:right;top:973.03px;font-size:10.6px;color:#000;font-weight:normal;-webkit-text-stroke:0.15px #000;">18.06.16</div>
<div class="t" style="left:671px;width:600px;text-align:center;top:986.03px;font-size:10.6px;color:#555;font-weight:normal;">62</div>
<div class="a" style="left:961px;top:996.5px;width:21px;height:1px;background:#cdcdcd;"></div>
<div class="t" style="left:437px;width:600px;text-align:right;top:986.03px;font-size:10.6px;color:#000;font-weight:normal;-webkit-text-stroke:0.15px #000;">61</div>
<div class="t" style="left:1043px;top:986.03px;font-size:10.6px;color:#000;font-weight:normal;-webkit-text-stroke:0.15px #000;">CA-2016-111682</div>
<div class="t" style="left:1135px;top:986.03px;font-size:10.6px;color:#000;font-weight:normal;-webkit-text-stroke:0.15px #000;">Yes</div>
<div class="t" style="left:711px;width:600px;text-align:right;top:986.03px;font-size:10.6px;color:#000;font-weight:normal;-webkit-text-stroke:0.15px #000;">17.06.16</div>
<div class="t" style="left:815px;width:600px;text-align:right;top:986.03px;font-size:10.6px;color:#000;font-weight:normal;-webkit-text-stroke:0.15px #000;">18.06.16</div>
<div class="t" style="left:671px;width:600px;text-align:center;top:999.03px;font-size:10.6px;color:#555;font-weight:normal;">63</div>
<div class="a" style="left:961px;top:1009.5px;width:21px;height:1px;background:#cdcdcd;"></div>
<div class="t" style="left:437px;width:600px;text-align:right;top:999.03px;font-size:10.6px;color:#000;font-weight:normal;-webkit-text-stroke:0.15px #000;">62</div>
<div class="t" style="left:1043px;top:999.03px;font-size:10.6px;color:#000;font-weight:normal;-webkit-text-stroke:0.15px #000;">CA-2016-111682</div>
<div class="t" style="left:1135px;top:999.03px;font-size:10.6px;color:#000;font-weight:normal;-webkit-text-stroke:0.15px #000;">Yes</div>
<div class="t" style="left:711px;width:600px;text-align:right;top:999.03px;font-size:10.6px;color:#000;font-weight:normal;-webkit-text-stroke:0.15px #000;">17.06.16</div>
<div class="t" style="left:815px;width:600px;text-align:right;top:999.03px;font-size:10.6px;color:#000;font-weight:normal;-webkit-text-stroke:0.15px #000;">18.06.16</div>
<div class="a" style="left:1040px;top:204px;width:1px;height:806px;background:#d9d9d9;"></div>
<div class="a" style="left:1132px;top:204px;width:1px;height:806px;background:#d9d9d9;"></div>
<div class="a" style="left:1206px;top:204px;width:1px;height:806px;background:#d9d9d9;"></div>
<div class="a" style="left:1314px;top:204px;width:1px;height:806px;background:#d9d9d9;"></div>
<div class="a" style="left:1418px;top:204px;width:1px;height:806px;background:#d9d9d9;"></div>
<div class="a" style="left:1505px;top:204px;width:1px;height:806px;background:#d9d9d9;"></div>
<div class="a" style="left:1565px;top:204px;width:1px;height:806px;background:#d9d9d9;"></div>
<div class="a" style="left:1657px;top:204px;width:1px;height:806px;background:#d9d9d9;"></div>
<div class="a" style="left:1737px;top:204px;width:1px;height:806px;background:#d9d9d9;"></div>
<div class="a" style="left:1810px;top:204px;width:1px;height:806px;background:#d9d9d9;"></div>
<div class="a" style="left:1893px;top:204px;width:1px;height:806px;background:#d9d9d9;"></div>
<div class="a" style="left:982.5px;top:216.5px;width:937.5px;height:1.3px;background:#56647f;"></div>
<div class="a" style="left:982.5px;top:229.5px;width:937.5px;height:1.3px;background:#56647f;"></div>
<div class="a" style="left:982.5px;top:242.5px;width:937.5px;height:1.3px;background:#56647f;"></div>
<div class="a" style="left:982.5px;top:255.5px;width:937.5px;height:1.3px;background:#56647f;"></div>
<div class="a" style="left:982.5px;top:268.5px;width:937.5px;height:1.3px;background:#56647f;"></div>
<div class="a" style="left:982.5px;top:281.5px;width:937.5px;height:1.3px;background:#56647f;"></div>
<div class="a" style="left:982.5px;top:294.5px;width:937.5px;height:1.3px;background:#56647f;"></div>
<div class="a" style="left:982.5px;top:307.5px;width:937.5px;height:1.3px;background:#56647f;"></div>
<div class="a" style="left:982.5px;top:320.5px;width:937.5px;height:1.3px;background:#56647f;"></div>
<div class="a" style="left:982.5px;top:333.5px;width:937.5px;height:1.3px;background:#56647f;"></div>
<div class="a" style="left:982.5px;top:346.5px;width:937.5px;height:1.3px;background:#56647f;"></div>
<div class="a" style="left:982.5px;top:359.5px;width:937.5px;height:1.3px;background:#56647f;"></div>
<div class="a" style="left:982.5px;top:372.5px;width:937.5px;height:1.3px;background:#56647f;"></div>
<div class="a" style="left:982.5px;top:385.5px;width:937.5px;height:1.3px;background:#56647f;"></div>
<div class="a" style="left:982.5px;top:398.5px;width:937.5px;height:1.3px;background:#56647f;"></div>
<div class="a" style="left:982.5px;top:411.5px;width:937.5px;height:1.3px;background:#56647f;"></div>
<div class="a" style="left:982.5px;top:424.5px;width:937.5px;height:1.3px;background:#56647f;"></div>
<div class="a" style="left:982.5px;top:437.5px;width:937.5px;height:1.3px;background:#56647f;"></div>
<div class="a" style="left:982.5px;top:450.5px;width:937.5px;height:1.3px;background:#56647f;"></div>
<div class="a" style="left:982.5px;top:463.5px;width:937.5px;height:1.3px;background:#56647f;"></div>
<div class="a" style="left:982.5px;top:476.5px;width:937.5px;height:1.3px;background:#56647f;"></div>
<div class="a" style="left:982.5px;top:489.5px;width:937.5px;height:1.3px;background:#56647f;"></div>
<div class="a" style="left:982.5px;top:502.5px;width:937.5px;height:1.3px;background:#56647f;"></div>
<div class="a" style="left:982.5px;top:515.5px;width:937.5px;height:1.3px;background:#56647f;"></div>
<div class="a" style="left:982.5px;top:528.5px;width:937.5px;height:1.3px;background:#56647f;"></div>
<div class="a" style="left:982.5px;top:541.5px;width:937.5px;height:1.3px;background:#56647f;"></div>
<div class="a" style="left:982.5px;top:554.5px;width:937.5px;height:1.3px;background:#56647f;"></div>
<div class="a" style="left:982.5px;top:567.5px;width:937.5px;height:1.3px;background:#56647f;"></div>
<div class="a" style="left:982.5px;top:580.5px;width:937.5px;height:1.3px;background:#56647f;"></div>
<div class="a" style="left:982.5px;top:593.5px;width:937.5px;height:1.3px;background:#56647f;"></div>
<div class="a" style="left:982.5px;top:606.5px;width:937.5px;height:1.3px;background:#56647f;"></div>
<div class="a" style="left:982.5px;top:619.5px;width:937.5px;height:1.3px;background:#56647f;"></div>
<div class="a" style="left:982.5px;top:632.5px;width:937.5px;height:1.3px;background:#56647f;"></div>
<div class="a" style="left:982.5px;top:645.5px;width:937.5px;height:1.3px;background:#56647f;"></div>
<div class="a" style="left:982.5px;top:658.5px;width:937.5px;height:1.3px;background:#56647f;"></div>
<div class="a" style="left:982.5px;top:671.5px;width:937.5px;height:1.3px;background:#56647f;"></div>
<div class="a" style="left:982.5px;top:684.5px;width:937.5px;height:1.3px;background:#56647f;"></div>
<div class="a" style="left:982.5px;top:697.5px;width:937.5px;height:1.3px;background:#56647f;"></div>
<div class="a" style="left:982.5px;top:710.5px;width:937.5px;height:1.3px;background:#56647f;"></div>
<div class="a" style="left:982.5px;top:723.5px;width:937.5px;height:1.3px;background:#56647f;"></div>
<div class="a" style="left:982.5px;top:736.5px;width:937.5px;height:1.3px;background:#56647f;"></div>
<div class="a" style="left:982.5px;top:749.5px;width:937.5px;height:1.3px;background:#56647f;"></div>
<div class="a" style="left:982.5px;top:762.5px;width:937.5px;height:1.3px;background:#56647f;"></div>
<div class="a" style="left:982.5px;top:775.5px;width:937.5px;height:1.3px;background:#56647f;"></div>
<div class="a" style="left:982.5px;top:788.5px;width:937.5px;height:1.3px;background:#56647f;"></div>
<div class="a" style="left:982.5px;top:801.5px;width:937.5px;height:1.3px;background:#56647f;"></div>
<div class="a" style="left:982.5px;top:814.5px;width:937.5px;height:1.3px;background:#56647f;"></div>
<div class="a" style="left:982.5px;top:827.5px;width:937.5px;height:1.3px;background:#56647f;"></div>
<div class="a" style="left:982.5px;top:840.5px;width:937.5px;height:1.3px;background:#56647f;"></div>
<div class="a" style="left:982.5px;top:853.5px;width:937.5px;height:1.3px;background:#56647f;"></div>
<div class="a" style="left:982.5px;top:866.5px;width:937.5px;height:1.3px;background:#56647f;"></div>
<div class="a" style="left:982.5px;top:879.5px;width:937.5px;height:1.3px;background:#56647f;"></div>
<div class="a" style="left:982.5px;top:892.5px;width:937.5px;height:1.3px;background:#56647f;"></div>
<div class="a" style="left:982.5px;top:905.5px;width:937.5px;height:1.3px;background:#56647f;"></div>
<div class="a" style="left:982.5px;top:918.5px;width:937.5px;height:1.3px;background:#56647f;"></div>
<div class="a" style="left:982.5px;top:931.5px;width:937.5px;height:1.3px;background:#56647f;"></div>
<div class="a" style="left:982.5px;top:944.5px;width:937.5px;height:1.3px;background:#56647f;"></div>
<div class="a" style="left:982.5px;top:957.5px;width:937.5px;height:1.3px;background:#56647f;"></div>
<div class="a" style="left:982.5px;top:970.5px;width:937.5px;height:1.3px;background:#56647f;"></div>
<div class="a" style="left:982.5px;top:983.5px;width:937.5px;height:1.3px;background:#56647f;"></div>
<div class="a" style="left:982.5px;top:996.5px;width:937.5px;height:1.3px;background:#56647f;"></div>
<div class="a" style="left:982.5px;top:1009.5px;width:937.5px;height:1.3px;background:#56647f;"></div>
<div class="a" style="left:1418px;top:204px;width:86px;height:806px;overflow:hidden;">
<div class="t" style="left:3px;top:2.03px;font-size:10.6px;-webkit-text-stroke:0.15px #000;letter-spacing:0px;">Second Class</div>
<div class="t" style="left:3px;top:15.03px;font-size:10.6px;-webkit-text-stroke:0.15px #000;letter-spacing:0px;">Second Class</div>
<div class="t" style="left:3px;top:28.03px;font-size:10.6px;-webkit-text-stroke:0.15px #000;letter-spacing:0px;">Second Class</div>
<div class="t" style="left:3px;top:41.03px;font-size:10.6px;-webkit-text-stroke:0.15px #000;letter-spacing:0px;">Standard Class</div>
<div class="t" style="left:3px;top:54.03px;font-size:10.6px;-webkit-text-stroke:0.15px #000;letter-spacing:0px;">Standard Class</div>
<div class="t" style="left:3px;top:67.03px;font-size:10.6px;-webkit-text-stroke:0.15px #000;letter-spacing:0px;">Standard Class</div>
<div class="t" style="left:3px;top:80.03px;font-size:10.6px;-webkit-text-stroke:0.15px #000;letter-spacing:0px;">Standard Class</div>
<div class="t" style="left:3px;top:93.03px;font-size:10.6px;-webkit-text-stroke:0.15px #000;letter-spacing:0px;">Standard Class</div>
<div class="t" style="left:3px;top:106.03px;font-size:10.6px;-webkit-text-stroke:0.15px #000;letter-spacing:0px;">Standard Class</div>
<div class="t" style="left:3px;top:119.03px;font-size:10.6px;-webkit-text-stroke:0.15px #000;letter-spacing:0px;">Standard Class</div>
<div class="t" style="left:3px;top:132.03px;font-size:10.6px;-webkit-text-stroke:0.15px #000;letter-spacing:0px;">Standard Class</div>
<div class="t" style="left:3px;top:145.03px;font-size:10.6px;-webkit-text-stroke:0.15px #000;letter-spacing:0px;">Standard Class</div>
<div class="t" style="left:3px;top:158.03px;font-size:10.6px;-webkit-text-stroke:0.15px #000;letter-spacing:0px;">Standard Class</div>
<div class="t" style="left:3px;top:171.03px;font-size:10.6px;-webkit-text-stroke:0.15px #000;letter-spacing:0px;">Standard Class</div>
<div class="t" style="left:3px;top:184.03px;font-size:10.6px;-webkit-text-stroke:0.15px #000;letter-spacing:0px;">Standard Class</div>
<div class="t" style="left:3px;top:197.03px;font-size:10.6px;-webkit-text-stroke:0.15px #000;letter-spacing:0px;">Standard Class</div>
<div class="t" style="left:3px;top:210.03px;font-size:10.6px;-webkit-text-stroke:0.15px #000;letter-spacing:0px;">Standard Class</div>
<div class="t" style="left:3px;top:223.03px;font-size:10.6px;-webkit-text-stroke:0.15px #000;letter-spacing:0px;">Second Class</div>
<div class="t" style="left:3px;top:236.03px;font-size:10.6px;-webkit-text-stroke:0.15px #000;letter-spacing:0px;">Second Class</div>
<div class="t" style="left:3px;top:249.03px;font-size:10.6px;-webkit-text-stroke:0.15px #000;letter-spacing:0px;">Second Class</div>
<div class="t" style="left:3px;top:262.03px;font-size:10.6px;-webkit-text-stroke:0.15px #000;letter-spacing:0px;">Second Class</div>
<div class="t" style="left:3px;top:275.03px;font-size:10.6px;-webkit-text-stroke:0.15px #000;letter-spacing:0px;">Standard Class</div>
<div class="t" style="left:3px;top:288.03px;font-size:10.6px;-webkit-text-stroke:0.15px #000;letter-spacing:0px;">Standard Class</div>
<div class="t" style="left:3px;top:301.03px;font-size:10.6px;-webkit-text-stroke:0.15px #000;letter-spacing:0px;">Second Class</div>
<div class="t" style="left:3px;top:314.03px;font-size:10.6px;-webkit-text-stroke:0.15px #000;letter-spacing:0px;">Standard Class</div>
<div class="t" style="left:3px;top:327.03px;font-size:10.6px;-webkit-text-stroke:0.15px #000;letter-spacing:0px;">Second Class</div>
<div class="t" style="left:3px;top:340.03px;font-size:10.6px;-webkit-text-stroke:0.15px #000;letter-spacing:0px;">Second Class</div>
<div class="t" style="left:3px;top:353.03px;font-size:10.6px;-webkit-text-stroke:0.15px #000;letter-spacing:0px;">Standard Class</div>
<div class="t" style="left:3px;top:366.03px;font-size:10.6px;-webkit-text-stroke:0.15px #000;letter-spacing:0px;">Standard Class</div>
<div class="t" style="left:3px;top:379.03px;font-size:10.6px;-webkit-text-stroke:0.15px #000;letter-spacing:0px;">Standard Class</div>
<div class="t" style="left:3px;top:392.03px;font-size:10.6px;-webkit-text-stroke:0.15px #000;letter-spacing:0px;">Standard Class</div>
<div class="t" style="left:3px;top:405.03px;font-size:10.6px;-webkit-text-stroke:0.15px #000;letter-spacing:0px;">Standard Class</div>
<div class="t" style="left:3px;top:418.03px;font-size:10.6px;-webkit-text-stroke:0.15px #000;letter-spacing:0px;">Standard Class</div>
<div class="t" style="left:3px;top:431.03px;font-size:10.6px;-webkit-text-stroke:0.15px #000;letter-spacing:0px;">Standard Class</div>
<div class="t" style="left:3px;top:444.03px;font-size:10.6px;-webkit-text-stroke:0.15px #000;letter-spacing:0px;">Second Class</div>
<div class="t" style="left:3px;top:457.03px;font-size:10.6px;-webkit-text-stroke:0.15px #000;letter-spacing:0px;">First Class</div>
<div class="t" style="left:3px;top:470.03px;font-size:10.6px;-webkit-text-stroke:0.15px #000;letter-spacing:0px;">First Class</div>
<div class="t" style="left:3px;top:483.03px;font-size:10.6px;-webkit-text-stroke:0.15px #000;letter-spacing:0px;">Standard Class</div>
<div class="t" style="left:3px;top:496.03px;font-size:10.6px;-webkit-text-stroke:0.15px #000;letter-spacing:0px;">Standard Class</div>
<div class="t" style="left:3px;top:509.03px;font-size:10.6px;-webkit-text-stroke:0.15px #000;letter-spacing:0px;">Standard Class</div>
<div class="t" style="left:3px;top:522.03px;font-size:10.6px;-webkit-text-stroke:0.15px #000;letter-spacing:0px;">Standard Class</div>
<div class="t" style="left:3px;top:535.03px;font-size:10.6px;-webkit-text-stroke:0.15px #000;letter-spacing:0px;">Standard Class</div>
<div class="t" style="left:3px;top:548.03px;font-size:10.6px;-webkit-text-stroke:0.15px #000;letter-spacing:0px;">Standard Class</div>
<div class="t" style="left:3px;top:561.03px;font-size:10.6px;-webkit-text-stroke:0.15px #000;letter-spacing:0px;">Standard Class</div>
<div class="t" style="left:3px;top:574.03px;font-size:10.6px;-webkit-text-stroke:0.15px #000;letter-spacing:0px;">First Class</div>
<div class="t" style="left:3px;top:587.03px;font-size:10.6px;-webkit-text-stroke:0.15px #000;letter-spacing:0px;">First Class</div>
<div class="t" style="left:3px;top:600.03px;font-size:10.6px;-webkit-text-stroke:0.15px #000;letter-spacing:0px;">Second Class</div>
<div class="t" style="left:3px;top:613.03px;font-size:10.6px;-webkit-text-stroke:0.15px #000;letter-spacing:0px;">Standard Class</div>
<div class="t" style="left:3px;top:626.03px;font-size:10.6px;-webkit-text-stroke:0.15px #000;letter-spacing:0px;">Standard Class</div>
<div class="t" style="left:3px;top:639.03px;font-size:10.6px;-webkit-text-stroke:0.15px #000;letter-spacing:0px;">Standard Class</div>
<div class="t" style="left:3px;top:652.03px;font-size:10.6px;-webkit-text-stroke:0.15px #000;letter-spacing:0px;">Standard Class</div>
<div class="t" style="left:3px;top:665.03px;font-size:10.6px;-webkit-text-stroke:0.15px #000;letter-spacing:0px;">Standard Class</div>
<div class="t" style="left:3px;top:678.03px;font-size:10.6px;-webkit-text-stroke:0.15px #000;letter-spacing:0px;">Standard Class</div>
<div class="t" style="left:3px;top:691.03px;font-size:10.6px;-webkit-text-stroke:0.15px #000;letter-spacing:0px;">Standard Class</div>
<div class="t" style="left:3px;top:704.03px;font-size:10.6px;-webkit-text-stroke:0.15px #000;letter-spacing:0px;">Standard Class</div>
<div class="t" style="left:3px;top:717.03px;font-size:10.6px;-webkit-text-stroke:0.15px #000;letter-spacing:0px;">First Class</div>
<div class="t" style="left:3px;top:730.03px;font-size:10.6px;-webkit-text-stroke:0.15px #000;letter-spacing:0px;">First Class</div>
<div class="t" style="left:3px;top:743.03px;font-size:10.6px;-webkit-text-stroke:0.15px #000;letter-spacing:0px;">First Class</div>
<div class="t" style="left:3px;top:756.03px;font-size:10.6px;-webkit-text-stroke:0.15px #000;letter-spacing:0px;">First Class</div>
<div class="t" style="left:3px;top:769.03px;font-size:10.6px;-webkit-text-stroke:0.15px #000;letter-spacing:0px;">First Class</div>
<div class="t" style="left:3px;top:782.03px;font-size:10.6px;-webkit-text-stroke:0.15px #000;letter-spacing:0px;">First Class</div>
<div class="t" style="left:3px;top:795.03px;font-size:10.6px;-webkit-text-stroke:0.15px #000;letter-spacing:0px;">First Class</div>
</div>
<div class="a" style="left:1505px;top:204px;width:59px;height:806px;overflow:hidden;">
<div class="t" style="left:3px;top:2.03px;font-size:10.6px;-webkit-text-stroke:0.15px #000;letter-spacing:-0.15px;">Consumer</div>
<div class="t" style="left:3px;top:15.03px;font-size:10.6px;-webkit-text-stroke:0.15px #000;letter-spacing:-0.15px;">Consumer</div>
<div class="t" style="left:3px;top:28.03px;font-size:10.6px;-webkit-text-stroke:0.15px #000;letter-spacing:-0.15px;">Corporate</div>
<div class="t" style="left:3px;top:41.03px;font-size:10.6px;-webkit-text-stroke:0.15px #000;letter-spacing:-0.15px;">Consumer</div>
<div class="t" style="left:3px;top:54.03px;font-size:10.6px;-webkit-text-stroke:0.15px #000;letter-spacing:-0.15px;">Consumer</div>
<div class="t" style="left:3px;top:67.03px;font-size:10.6px;-webkit-text-stroke:0.15px #000;letter-spacing:-0.15px;">Consumer</div>
<div class="t" style="left:3px;top:80.03px;font-size:10.6px;-webkit-text-stroke:0.15px #000;letter-spacing:-0.15px;">Consumer</div>
<div class="t" style="left:3px;top:93.03px;font-size:10.6px;-webkit-text-stroke:0.15px #000;letter-spacing:-0.15px;">Consumer</div>
<div class="t" style="left:3px;top:106.03px;font-size:10.6px;-webkit-text-stroke:0.15px #000;letter-spacing:-0.15px;">Consumer</div>
<div class="t" style="left:3px;top:119.03px;font-size:10.6px;-webkit-text-stroke:0.15px #000;letter-spacing:-0.15px;">Consumer</div>
<div class="t" style="left:3px;top:132.03px;font-size:10.6px;-webkit-text-stroke:0.15px #000;letter-spacing:-0.15px;">Consumer</div>
<div class="t" style="left:3px;top:145.03px;font-size:10.6px;-webkit-text-stroke:0.15px #000;letter-spacing:-0.15px;">Consumer</div>
<div class="t" style="left:3px;top:158.03px;font-size:10.6px;-webkit-text-stroke:0.15px #000;letter-spacing:-0.15px;">Consumer</div>
<div class="t" style="left:3px;top:171.03px;font-size:10.6px;-webkit-text-stroke:0.15px #000;letter-spacing:-0.15px;">Consumer</div>
<div class="t" style="left:3px;top:184.03px;font-size:10.6px;-webkit-text-stroke:0.15px #000;letter-spacing:-0.15px;">Home Office</div>
<div class="t" style="left:3px;top:197.03px;font-size:10.6px;-webkit-text-stroke:0.15px #000;letter-spacing:-0.15px;">Home Office</div>
<div class="t" style="left:3px;top:210.03px;font-size:10.6px;-webkit-text-stroke:0.15px #000;letter-spacing:-0.15px;">Consumer</div>
<div class="t" style="left:3px;top:223.03px;font-size:10.6px;-webkit-text-stroke:0.15px #000;letter-spacing:-0.15px;">Consumer</div>
<div class="t" style="left:3px;top:236.03px;font-size:10.6px;-webkit-text-stroke:0.15px #000;letter-spacing:-0.15px;">Consumer</div>
<div class="t" style="left:3px;top:249.03px;font-size:10.6px;-webkit-text-stroke:0.15px #000;letter-spacing:-0.15px;">Consumer</div>
<div class="t" style="left:3px;top:262.03px;font-size:10.6px;-webkit-text-stroke:0.15px #000;letter-spacing:-0.15px;">Consumer</div>
<div class="t" style="left:3px;top:275.03px;font-size:10.6px;-webkit-text-stroke:0.15px #000;letter-spacing:-0.15px;">Corporate</div>
<div class="t" style="left:3px;top:288.03px;font-size:10.6px;-webkit-text-stroke:0.15px #000;letter-spacing:-0.15px;">Corporate</div>
<div class="t" style="left:3px;top:301.03px;font-size:10.6px;-webkit-text-stroke:0.15px #000;letter-spacing:-0.15px;">Consumer</div>
<div class="t" style="left:3px;top:314.03px;font-size:10.6px;-webkit-text-stroke:0.15px #000;letter-spacing:-0.15px;">Consumer</div>
<div class="t" style="left:3px;top:327.03px;font-size:10.6px;-webkit-text-stroke:0.15px #000;letter-spacing:-0.15px;">Consumer</div>
<div class="t" style="left:3px;top:340.03px;font-size:10.6px;-webkit-text-stroke:0.15px #000;letter-spacing:-0.15px;">Consumer</div>
<div class="t" style="left:3px;top:353.03px;font-size:10.6px;-webkit-text-stroke:0.15px #000;letter-spacing:-0.15px;">Consumer</div>
<div class="t" style="left:3px;top:366.03px;font-size:10.6px;-webkit-text-stroke:0.15px #000;letter-spacing:-0.15px;">Consumer</div>
<div class="t" style="left:3px;top:379.03px;font-size:10.6px;-webkit-text-stroke:0.15px #000;letter-spacing:-0.15px;">Consumer</div>
<div class="t" style="left:3px;top:392.03px;font-size:10.6px;-webkit-text-stroke:0.15px #000;letter-spacing:-0.15px;">Consumer</div>
<div class="t" style="left:3px;top:405.03px;font-size:10.6px;-webkit-text-stroke:0.15px #000;letter-spacing:-0.15px;">Consumer</div>
<div class="t" style="left:3px;top:418.03px;font-size:10.6px;-webkit-text-stroke:0.15px #000;letter-spacing:-0.15px;">Consumer</div>
<div class="t" style="left:3px;top:431.03px;font-size:10.6px;-webkit-text-stroke:0.15px #000;letter-spacing:-0.15px;">Consumer</div>
<div class="t" style="left:3px;top:444.03px;font-size:10.6px;-webkit-text-stroke:0.15px #000;letter-spacing:-0.15px;">Home Office</div>
<div class="t" style="left:3px;top:457.03px;font-size:10.6px;-webkit-text-stroke:0.15px #000;letter-spacing:-0.15px;">Corporate</div>
<div class="t" style="left:3px;top:470.03px;font-size:10.6px;-webkit-text-stroke:0.15px #000;letter-spacing:-0.15px;">Corporate</div>
<div class="t" style="left:3px;top:483.03px;font-size:10.6px;-webkit-text-stroke:0.15px #000;letter-spacing:-0.15px;">Home Office</div>
<div class="t" style="left:3px;top:496.03px;font-size:10.6px;-webkit-text-stroke:0.15px #000;letter-spacing:-0.15px;">Home Office</div>
<div class="t" style="left:3px;top:509.03px;font-size:10.6px;-webkit-text-stroke:0.15px #000;letter-spacing:-0.15px;">Home Office</div>
<div class="t" style="left:3px;top:522.03px;font-size:10.6px;-webkit-text-stroke:0.15px #000;letter-spacing:-0.15px;">Home Office</div>
<div class="t" style="left:3px;top:535.03px;font-size:10.6px;-webkit-text-stroke:0.15px #000;letter-spacing:-0.15px;">Corporate</div>
<div class="t" style="left:3px;top:548.03px;font-size:10.6px;-webkit-text-stroke:0.15px #000;letter-spacing:-0.15px;">Corporate</div>
<div class="t" style="left:3px;top:561.03px;font-size:10.6px;-webkit-text-stroke:0.15px #000;letter-spacing:-0.15px;">Corporate</div>
<div class="t" style="left:3px;top:574.03px;font-size:10.6px;-webkit-text-stroke:0.15px #000;letter-spacing:-0.15px;">Corporate</div>
<div class="t" style="left:3px;top:587.03px;font-size:10.6px;-webkit-text-stroke:0.15px #000;letter-spacing:-0.15px;">Corporate</div>
<div class="t" style="left:3px;top:600.03px;font-size:10.6px;-webkit-text-stroke:0.15px #000;letter-spacing:-0.15px;">Consumer</div>
<div class="t" style="left:3px;top:613.03px;font-size:10.6px;-webkit-text-stroke:0.15px #000;letter-spacing:-0.15px;">Consumer</div>
<div class="t" style="left:3px;top:626.03px;font-size:10.6px;-webkit-text-stroke:0.15px #000;letter-spacing:-0.15px;">Consumer</div>
<div class="t" style="left:3px;top:639.03px;font-size:10.6px;-webkit-text-stroke:0.15px #000;letter-spacing:-0.15px;">Consumer</div>
<div class="t" style="left:3px;top:652.03px;font-size:10.6px;-webkit-text-stroke:0.15px #000;letter-spacing:-0.15px;">Consumer</div>
<div class="t" style="left:3px;top:665.03px;font-size:10.6px;-webkit-text-stroke:0.15px #000;letter-spacing:-0.15px;">Consumer</div>
<div class="t" style="left:3px;top:678.03px;font-size:10.6px;-webkit-text-stroke:0.15px #000;letter-spacing:-0.15px;">Consumer</div>
<div class="t" style="left:3px;top:691.03px;font-size:10.6px;-webkit-text-stroke:0.15px #000;letter-spacing:-0.15px;">Corporate</div>
<div class="t" style="left:3px;top:704.03px;font-size:10.6px;-webkit-text-stroke:0.15px #000;letter-spacing:-0.15px;">Corporate</div>
<div class="t" style="left:3px;top:717.03px;font-size:10.6px;-webkit-text-stroke:0.15px #000;letter-spacing:-0.15px;">Consumer</div>
<div class="t" style="left:3px;top:730.03px;font-size:10.6px;-webkit-text-stroke:0.15px #000;letter-spacing:-0.15px;">Consumer</div>
<div class="t" style="left:3px;top:743.03px;font-size:10.6px;-webkit-text-stroke:0.15px #000;letter-spacing:-0.15px;">Consumer</div>
<div class="t" style="left:3px;top:756.03px;font-size:10.6px;-webkit-text-stroke:0.15px #000;letter-spacing:-0.15px;">Consumer</div>
<div class="t" style="left:3px;top:769.03px;font-size:10.6px;-webkit-text-stroke:0.15px #000;letter-spacing:-0.15px;">Consumer</div>
<div class="t" style="left:3px;top:782.03px;font-size:10.6px;-webkit-text-stroke:0.15px #000;letter-spacing:-0.15px;">Consumer</div>
<div class="t" style="left:3px;top:795.03px;font-size:10.6px;-webkit-text-stroke:0.15px #000;letter-spacing:-0.15px;">Consumer</div>
</div>
<div class="a" style="left:1565px;top:204px;width:91px;height:806px;overflow:hidden;">
<div class="t" style="left:3px;top:2.03px;font-size:10.6px;-webkit-text-stroke:0.15px #000;letter-spacing:0px;">United States</div>
<div class="t" style="left:3px;top:15.03px;font-size:10.6px;-webkit-text-stroke:0.15px #000;letter-spacing:0px;">United States</div>
<div class="t" style="left:3px;top:28.03px;font-size:10.6px;-webkit-text-stroke:0.15px #000;letter-spacing:0px;">United States</div>
<div class="t" style="left:3px;top:41.03px;font-size:10.6px;-webkit-text-stroke:0.15px #000;letter-spacing:0px;">United States</div>
<div class="t" style="left:3px;top:54.03px;font-size:10.6px;-webkit-text-stroke:0.15px #000;letter-spacing:0px;">United States</div>
<div class="t" style="left:3px;top:67.03px;font-size:10.6px;-webkit-text-stroke:0.15px #000;letter-spacing:0px;">United States</div>
<div class="t" style="left:3px;top:80.03px;font-size:10.6px;-webkit-text-stroke:0.15px #000;letter-spacing:0px;">United States</div>
<div class="t" style="left:3px;top:93.03px;font-size:10.6px;-webkit-text-stroke:0.15px #000;letter-spacing:0px;">United States</div>
<div class="t" style="left:3px;top:106.03px;font-size:10.6px;-webkit-text-stroke:0.15px #000;letter-spacing:0px;">United States</div>
<div class="t" style="left:3px;top:119.03px;font-size:10.6px;-webkit-text-stroke:0.15px #000;letter-spacing:0px;">United States</div>
<div class="t" style="left:3px;top:132.03px;font-size:10.6px;-webkit-text-stroke:0.15px #000;letter-spacing:0px;">United States</div>
<div class="t" style="left:3px;top:145.03px;font-size:10.6px;-webkit-text-stroke:0.15px #000;letter-spacing:0px;">United States</div>
<div class="t" style="left:3px;top:158.03px;font-size:10.6px;-webkit-text-stroke:0.15px #000;letter-spacing:0px;">United States</div>
<div class="t" style="left:3px;top:171.03px;font-size:10.6px;-webkit-text-stroke:0.15px #000;letter-spacing:0px;">United States</div>
<div class="t" style="left:3px;top:184.03px;font-size:10.6px;-webkit-text-stroke:0.15px #000;letter-spacing:0px;">United States</div>
<div class="t" style="left:3px;top:197.03px;font-size:10.6px;-webkit-text-stroke:0.15px #000;letter-spacing:0px;">United States</div>
<div class="t" style="left:3px;top:210.03px;font-size:10.6px;-webkit-text-stroke:0.15px #000;letter-spacing:0px;">United States</div>
<div class="t" style="left:3px;top:223.03px;font-size:10.6px;-webkit-text-stroke:0.15px #000;letter-spacing:0px;">United States</div>
<div class="t" style="left:3px;top:236.03px;font-size:10.6px;-webkit-text-stroke:0.15px #000;letter-spacing:0px;">United States</div>
<div class="t" style="left:3px;top:249.03px;font-size:10.6px;-webkit-text-stroke:0.15px #000;letter-spacing:0px;">United States</div>
<div class="t" style="left:3px;top:262.03px;font-size:10.6px;-webkit-text-stroke:0.15px #000;letter-spacing:0px;">United States</div>
<div class="t" style="left:3px;top:275.03px;font-size:10.6px;-webkit-text-stroke:0.15px #000;letter-spacing:0px;">United States</div>
<div class="t" style="left:3px;top:288.03px;font-size:10.6px;-webkit-text-stroke:0.15px #000;letter-spacing:0px;">United States</div>
<div class="t" style="left:3px;top:301.03px;font-size:10.6px;-webkit-text-stroke:0.15px #000;letter-spacing:0px;">United States</div>
<div class="t" style="left:3px;top:314.03px;font-size:10.6px;-webkit-text-stroke:0.15px #000;letter-spacing:0px;">United States</div>
<div class="t" style="left:3px;top:327.03px;font-size:10.6px;-webkit-text-stroke:0.15px #000;letter-spacing:0px;">United States</div>
<div class="t" style="left:3px;top:340.03px;font-size:10.6px;-webkit-text-stroke:0.15px #000;letter-spacing:0px;">United States</div>
<div class="t" style="left:3px;top:353.03px;font-size:10.6px;-webkit-text-stroke:0.15px #000;letter-spacing:0px;">United States</div>
<div class="t" style="left:3px;top:366.03px;font-size:10.6px;-webkit-text-stroke:0.15px #000;letter-spacing:0px;">United States</div>
<div class="t" style="left:3px;top:379.03px;font-size:10.6px;-webkit-text-stroke:0.15px #000;letter-spacing:0px;">United States</div>
<div class="t" style="left:3px;top:392.03px;font-size:10.6px;-webkit-text-stroke:0.15px #000;letter-spacing:0px;">United States</div>
<div class="t" style="left:3px;top:405.03px;font-size:10.6px;-webkit-text-stroke:0.15px #000;letter-spacing:0px;">United States</div>
<div class="t" style="left:3px;top:418.03px;font-size:10.6px;-webkit-text-stroke:0.15px #000;letter-spacing:0px;">United States</div>
<div class="t" style="left:3px;top:431.03px;font-size:10.6px;-webkit-text-stroke:0.15px #000;letter-spacing:0px;">United States</div>
<div class="t" style="left:3px;top:444.03px;font-size:10.6px;-webkit-text-stroke:0.15px #000;letter-spacing:0px;">United States</div>
<div class="t" style="left:3px;top:457.03px;font-size:10.6px;-webkit-text-stroke:0.15px #000;letter-spacing:0px;">United States</div>
<div class="t" style="left:3px;top:470.03px;font-size:10.6px;-webkit-text-stroke:0.15px #000;letter-spacing:0px;">United States</div>
<div class="t" style="left:3px;top:483.03px;font-size:10.6px;-webkit-text-stroke:0.15px #000;letter-spacing:0px;">United States</div>
<div class="t" style="left:3px;top:496.03px;font-size:10.6px;-webkit-text-stroke:0.15px #000;letter-spacing:0px;">United States</div>
<div class="t" style="left:3px;top:509.03px;font-size:10.6px;-webkit-text-stroke:0.15px #000;letter-spacing:0px;">United States</div>
<div class="t" style="left:3px;top:522.03px;font-size:10.6px;-webkit-text-stroke:0.15px #000;letter-spacing:0px;">United States</div>
<div class="t" style="left:3px;top:535.03px;font-size:10.6px;-webkit-text-stroke:0.15px #000;letter-spacing:0px;">United States</div>
<div class="t" style="left:3px;top:548.03px;font-size:10.6px;-webkit-text-stroke:0.15px #000;letter-spacing:0px;">United States</div>
<div class="t" style="left:3px;top:561.03px;font-size:10.6px;-webkit-text-stroke:0.15px #000;letter-spacing:0px;">United States</div>
<div class="t" style="left:3px;top:574.03px;font-size:10.6px;-webkit-text-stroke:0.15px #000;letter-spacing:0px;">United States</div>
<div class="t" style="left:3px;top:587.03px;font-size:10.6px;-webkit-text-stroke:0.15px #000;letter-spacing:0px;">United States</div>
<div class="t" style="left:3px;top:600.03px;font-size:10.6px;-webkit-text-stroke:0.15px #000;letter-spacing:0px;">United States</div>
<div class="t" style="left:3px;top:613.03px;font-size:10.6px;-webkit-text-stroke:0.15px #000;letter-spacing:0px;">United States</div>
<div class="t" style="left:3px;top:626.03px;font-size:10.6px;-webkit-text-stroke:0.15px #000;letter-spacing:0px;">United States</div>
<div class="t" style="left:3px;top:639.03px;font-size:10.6px;-webkit-text-stroke:0.15px #000;letter-spacing:0px;">United States</div>
<div class="t" style="left:3px;top:652.03px;font-size:10.6px;-webkit-text-stroke:0.15px #000;letter-spacing:0px;">United States</div>
<div class="t" style="left:3px;top:665.03px;font-size:10.6px;-webkit-text-stroke:0.15px #000;letter-spacing:0px;">United States</div>
<div class="t" style="left:3px;top:678.03px;font-size:10.6px;-webkit-text-stroke:0.15px #000;letter-spacing:0px;">United States</div>
<div class="t" style="left:3px;top:691.03px;font-size:10.6px;-webkit-text-stroke:0.15px #000;letter-spacing:0px;">United States</div>
<div class="t" style="left:3px;top:704.03px;font-size:10.6px;-webkit-text-stroke:0.15px #000;letter-spacing:0px;">United States</div>
<div class="t" style="left:3px;top:717.03px;font-size:10.6px;-webkit-text-stroke:0.15px #000;letter-spacing:0px;">United States</div>
<div class="t" style="left:3px;top:730.03px;font-size:10.6px;-webkit-text-stroke:0.15px #000;letter-spacing:0px;">United States</div>
<div class="t" style="left:3px;top:743.03px;font-size:10.6px;-webkit-text-stroke:0.15px #000;letter-spacing:0px;">United States</div>
<div class="t" style="left:3px;top:756.03px;font-size:10.6px;-webkit-text-stroke:0.15px #000;letter-spacing:0px;">United States</div>
<div class="t" style="left:3px;top:769.03px;font-size:10.6px;-webkit-text-stroke:0.15px #000;letter-spacing:0px;">United States</div>
<div class="t" style="left:3px;top:782.03px;font-size:10.6px;-webkit-text-stroke:0.15px #000;letter-spacing:0px;">United States</div>
<div class="t" style="left:3px;top:795.03px;font-size:10.6px;-webkit-text-stroke:0.15px #000;letter-spacing:0px;">United States</div>
</div>
<div class="a" style="left:1657px;top:204px;width:79px;height:806px;overflow:hidden;">
<div class="t" style="left:3px;top:2.03px;font-size:10.6px;-webkit-text-stroke:0.15px #000;letter-spacing:0px;">Henderson</div>
<div class="t" style="left:3px;top:15.03px;font-size:10.6px;-webkit-text-stroke:0.15px #000;letter-spacing:0px;">Henderson</div>
<div class="t" style="left:3px;top:28.03px;font-size:10.6px;-webkit-text-stroke:0.15px #000;letter-spacing:0px;">Los Angeles</div>
<div class="t" style="left:3px;top:41.03px;font-size:10.6px;-webkit-text-stroke:0.15px #000;letter-spacing:0px;">Fort Lauderdale</div>
<div class="t" style="left:3px;top:54.03px;font-size:10.6px;-webkit-text-stroke:0.15px #000;letter-spacing:0px;">Fort Lauderdale</div>
<div class="t" style="left:3px;top:67.03px;font-size:10.6px;-webkit-text-stroke:0.15px #000;letter-spacing:0px;">Los Angeles</div>
<div class="t" style="left:3px;top:80.03px;font-size:10.6px;-webkit-text-stroke:0.15px #000;letter-spacing:0px;">Los Angeles</div>
<div class="t" style="left:3px;top:93.03px;font-size:10.6px;-webkit-text-stroke:0.15px #000;letter-spacing:0px;">Los Angeles</div>
<div class="t" style="left:3px;top:106.03px;font-size:10.6px;-webkit-text-stroke:0.15px #000;letter-spacing:0px;">Los Angeles</div>
<div class="t" style="left:3px;top:119.03px;font-size:10.6px;-webkit-text-stroke:0.15px #000;letter-spacing:0px;">Los Angeles</div>
<div class="t" style="left:3px;top:132.03px;font-size:10.6px;-webkit-text-stroke:0.15px #000;letter-spacing:0px;">Los Angeles</div>
<div class="t" style="left:3px;top:145.03px;font-size:10.6px;-webkit-text-stroke:0.15px #000;letter-spacing:0px;">Los Angeles</div>
<div class="t" style="left:3px;top:158.03px;font-size:10.6px;-webkit-text-stroke:0.15px #000;letter-spacing:0px;">Concord</div>
<div class="t" style="left:3px;top:171.03px;font-size:10.6px;-webkit-text-stroke:0.15px #000;letter-spacing:0px;">Seattle</div>
<div class="t" style="left:3px;top:184.03px;font-size:10.6px;-webkit-text-stroke:0.15px #000;letter-spacing:0px;">Fort Worth</div>
<div class="t" style="left:3px;top:197.03px;font-size:10.6px;-webkit-text-stroke:0.15px #000;letter-spacing:0px;">Fort Worth</div>
<div class="t" style="left:3px;top:210.03px;font-size:10.6px;-webkit-text-stroke:0.15px #000;letter-spacing:0px;">Madison</div>
<div class="t" style="left:3px;top:223.03px;font-size:10.6px;-webkit-text-stroke:0.15px #000;letter-spacing:0px;">West Jordan</div>
<div class="t" style="left:3px;top:236.03px;font-size:10.6px;-webkit-text-stroke:0.15px #000;letter-spacing:0px;">San Francisco</div>
<div class="t" style="left:3px;top:249.03px;font-size:10.6px;-webkit-text-stroke:0.15px #000;letter-spacing:0px;">San Francisco</div>
<div class="t" style="left:3px;top:262.03px;font-size:10.6px;-webkit-text-stroke:0.15px #000;letter-spacing:0px;">San Francisco</div>
<div class="t" style="left:3px;top:275.03px;font-size:10.6px;-webkit-text-stroke:0.15px #000;letter-spacing:0px;">Fremont</div>
<div class="t" style="left:3px;top:288.03px;font-size:10.6px;-webkit-text-stroke:0.15px #000;letter-spacing:0px;">Fremont</div>
<div class="t" style="left:3px;top:301.03px;font-size:10.6px;-webkit-text-stroke:0.15px #000;letter-spacing:0px;">Philadelphia</div>
<div class="t" style="left:3px;top:314.03px;font-size:10.6px;-webkit-text-stroke:0.15px #000;letter-spacing:0px;">Orem</div>
<div class="t" style="left:3px;top:327.03px;font-size:10.6px;-webkit-text-stroke:0.15px #000;letter-spacing:0px;">Los Angeles</div>
<div class="t" style="left:3px;top:340.03px;font-size:10.6px;-webkit-text-stroke:0.15px #000;letter-spacing:0px;">Los Angeles</div>
<div class="t" style="left:3px;top:353.03px;font-size:10.6px;-webkit-text-stroke:0.15px #000;letter-spacing:0px;">Philadelphia</div>
<div class="t" style="left:3px;top:366.03px;font-size:10.6px;-webkit-text-stroke:0.15px #000;letter-spacing:0px;">Philadelphia</div>
<div class="t" style="left:3px;top:379.03px;font-size:10.6px;-webkit-text-stroke:0.15px #000;letter-spacing:0px;">Philadelphia</div>
<div class="t" style="left:3px;top:392.03px;font-size:10.6px;-webkit-text-stroke:0.15px #000;letter-spacing:0px;">Philadelphia</div>
<div class="t" style="left:3px;top:405.03px;font-size:10.6px;-webkit-text-stroke:0.15px #000;letter-spacing:0px;">Philadelphia</div>
<div class="t" style="left:3px;top:418.03px;font-size:10.6px;-webkit-text-stroke:0.15px #000;letter-spacing:0px;">Philadelphia</div>
<div class="t" style="left:3px;top:431.03px;font-size:10.6px;-webkit-text-stroke:0.15px #000;letter-spacing:0px;">Philadelphia</div>
<div class="t" style="left:3px;top:444.03px;font-size:10.6px;-webkit-text-stroke:0.15px #000;letter-spacing:0px;">Houston</div>
<div class="t" style="left:3px;top:457.03px;font-size:10.6px;-webkit-text-stroke:0.15px #000;letter-spacing:0px;">Richardson</div>
<div class="t" style="left:3px;top:470.03px;font-size:10.6px;-webkit-text-stroke:0.15px #000;letter-spacing:0px;">Richardson</div>
<div class="t" style="left:3px;top:483.03px;font-size:10.6px;-webkit-text-stroke:0.15px #000;letter-spacing:0px;">Houston</div>
<div class="t" style="left:3px;top:496.03px;font-size:10.6px;-webkit-text-stroke:0.15px #000;letter-spacing:0px;">Houston</div>
<div class="t" style="left:3px;top:509.03px;font-size:10.6px;-webkit-text-stroke:0.15px #000;letter-spacing:0px;">Houston</div>
<div class="t" style="left:3px;top:522.03px;font-size:10.6px;-webkit-text-stroke:0.15px #000;letter-spacing:0px;">Houston</div>
<div class="t" style="left:3px;top:535.03px;font-size:10.6px;-webkit-text-stroke:0.15px #000;letter-spacing:0px;">Naperville</div>
<div class="t" style="left:3px;top:548.03px;font-size:10.6px;-webkit-text-stroke:0.15px #000;letter-spacing:0px;">Los Angeles</div>
<div class="t" style="left:3px;top:561.03px;font-size:10.6px;-webkit-text-stroke:0.15px #000;letter-spacing:0px;">Melbourne</div>
<div class="t" style="left:3px;top:574.03px;font-size:10.6px;-webkit-text-stroke:0.15px #000;letter-spacing:0px;">Eagan</div>
<div class="t" style="left:3px;top:587.03px;font-size:10.6px;-webkit-text-stroke:0.15px #000;letter-spacing:0px;">Eagan</div>
<div class="t" style="left:3px;top:600.03px;font-size:10.6px;-webkit-text-stroke:0.15px #000;letter-spacing:0px;">Westland</div>
<div class="t" style="left:3px;top:613.03px;font-size:10.6px;-webkit-text-stroke:0.15px #000;letter-spacing:0px;">Dover</div>
<div class="t" style="left:3px;top:626.03px;font-size:10.6px;-webkit-text-stroke:0.15px #000;letter-spacing:0px;">Dover</div>
<div class="t" style="left:3px;top:639.03px;font-size:10.6px;-webkit-text-stroke:0.15px #000;letter-spacing:0px;">New Albany</div>
<div class="t" style="left:3px;top:652.03px;font-size:10.6px;-webkit-text-stroke:0.15px #000;letter-spacing:0px;">New Albany</div>
<div class="t" style="left:3px;top:665.03px;font-size:10.6px;-webkit-text-stroke:0.15px #000;letter-spacing:0px;">New Albany</div>
<div class="t" style="left:3px;top:678.03px;font-size:10.6px;-webkit-text-stroke:0.15px #000;letter-spacing:0px;">New Albany</div>
<div class="t" style="left:3px;top:691.03px;font-size:10.6px;-webkit-text-stroke:0.15px #000;letter-spacing:0px;">New York City</div>
<div class="t" style="left:3px;top:704.03px;font-size:10.6px;-webkit-text-stroke:0.15px #000;letter-spacing:0px;">New York City</div>
<div class="t" style="left:3px;top:717.03px;font-size:10.6px;-webkit-text-stroke:0.15px #000;letter-spacing:0px;">Troy</div>
<div class="t" style="left:3px;top:730.03px;font-size:10.6px;-webkit-text-stroke:0.15px #000;letter-spacing:0px;">Troy</div>
<div class="t" style="left:3px;top:743.03px;font-size:10.6px;-webkit-text-stroke:0.15px #000;letter-spacing:0px;">Troy</div>
<div class="t" style="left:3px;top:756.03px;font-size:10.6px;-webkit-text-stroke:0.15px #000;letter-spacing:0px;">Troy</div>
<div class="t" style="left:3px;top:769.03px;font-size:10.6px;-webkit-text-stroke:0.15px #000;letter-spacing:0px;">Troy</div>
<div class="t" style="left:3px;top:782.03px;font-size:10.6px;-webkit-text-stroke:0.15px #000;letter-spacing:0px;">Troy</div>
<div class="t" style="left:3px;top:795.03px;font-size:10.6px;-webkit-text-stroke:0.15px #000;letter-spacing:0px;">Troy</div>
</div>
<div class="a" style="left:1737px;top:204px;width:72px;height:806px;overflow:hidden;">
<div class="t" style="left:3px;top:2.03px;font-size:10.6px;-webkit-text-stroke:0.15px #000;letter-spacing:0px;">Kentucky</div>
<div class="t" style="left:3px;top:15.03px;font-size:10.6px;-webkit-text-stroke:0.15px #000;letter-spacing:0px;">Kentucky</div>
<div class="t" style="left:3px;top:28.03px;font-size:10.6px;-webkit-text-stroke:0.15px #000;letter-spacing:0px;">California</div>
<div class="t" style="left:3px;top:41.03px;font-size:10.6px;-webkit-text-stroke:0.15px #000;letter-spacing:0px;">Florida</div>
<div class="t" style="left:3px;top:54.03px;font-size:10.6px;-webkit-text-stroke:0.15px #000;letter-spacing:0px;">Florida</div>
<div class="t" style="left:3px;top:67.03px;font-size:10.6px;-webkit-text-stroke:0.15px #000;letter-spacing:0px;">California</div>
<div class="t" style="left:3px;top:80.03px;font-size:10.6px;-webkit-text-stroke:0.15px #000;letter-spacing:0px;">California</div>
<div class="t" style="left:3px;top:93.03px;font-size:10.6px;-webkit-text-stroke:0.15px #000;letter-spacing:0px;">California</div>
<div class="t" style="left:3px;top:106.03px;font-size:10.6px;-webkit-text-stroke:0.15px #000;letter-spacing:0px;">California</div>
<div class="t" style="left:3px;top:119.03px;font-size:10.6px;-webkit-text-stroke:0.15px #000;letter-spacing:0px;">California</div>
<div class="t" style="left:3px;top:132.03px;font-size:10.6px;-webkit-text-stroke:0.15px #000;letter-spacing:0px;">California</div>
<div class="t" style="left:3px;top:145.03px;font-size:10.6px;-webkit-text-stroke:0.15px #000;letter-spacing:0px;">California</div>
<div class="t" style="left:3px;top:158.03px;font-size:10.6px;-webkit-text-stroke:0.15px #000;letter-spacing:0px;">North Carolina</div>
<div class="t" style="left:3px;top:171.03px;font-size:10.6px;-webkit-text-stroke:0.15px #000;letter-spacing:0px;">Washington</div>
<div class="t" style="left:3px;top:184.03px;font-size:10.6px;-webkit-text-stroke:0.15px #000;letter-spacing:0px;">Texas</div>
<div class="t" style="left:3px;top:197.03px;font-size:10.6px;-webkit-text-stroke:0.15px #000;letter-spacing:0px;">Texas</div>
<div class="t" style="left:3px;top:210.03px;font-size:10.6px;-webkit-text-stroke:0.15px #000;letter-spacing:0px;">Wisconsin</div>
<div class="t" style="left:3px;top:223.03px;font-size:10.6px;-webkit-text-stroke:0.15px #000;letter-spacing:0px;">Utah</div>
<div class="t" style="left:3px;top:236.03px;font-size:10.6px;-webkit-text-stroke:0.15px #000;letter-spacing:0px;">California</div>
<div class="t" style="left:3px;top:249.03px;font-size:10.6px;-webkit-text-stroke:0.15px #000;letter-spacing:0px;">California</div>
<div class="t" style="left:3px;top:262.03px;font-size:10.6px;-webkit-text-stroke:0.15px #000;letter-spacing:0px;">California</div>
<div class="t" style="left:3px;top:275.03px;font-size:10.6px;-webkit-text-stroke:0.15px #000;letter-spacing:0px;">Nebraska</div>
<div class="t" style="left:3px;top:288.03px;font-size:10.6px;-webkit-text-stroke:0.15px #000;letter-spacing:0px;">Nebraska</div>
<div class="t" style="left:3px;top:301.03px;font-size:10.6px;-webkit-text-stroke:0.15px #000;letter-spacing:0px;">Pennsylvania</div>
<div class="t" style="left:3px;top:314.03px;font-size:10.6px;-webkit-text-stroke:0.15px #000;letter-spacing:0px;">Utah</div>
<div class="t" style="left:3px;top:327.03px;font-size:10.6px;-webkit-text-stroke:0.15px #000;letter-spacing:0px;">California</div>
<div class="t" style="left:3px;top:340.03px;font-size:10.6px;-webkit-text-stroke:0.15px #000;letter-spacing:0px;">California</div>
<div class="t" style="left:3px;top:353.03px;font-size:10.6px;-webkit-text-stroke:0.15px #000;letter-spacing:0px;">Pennsylvania</div>
<div class="t" style="left:3px;top:366.03px;font-size:10.6px;-webkit-text-stroke:0.15px #000;letter-spacing:0px;">Pennsylvania</div>
<div class="t" style="left:3px;top:379.03px;font-size:10.6px;-webkit-text-stroke:0.15px #000;letter-spacing:0px;">Pennsylvania</div>
<div class="t" style="left:3px;top:392.03px;font-size:10.6px;-webkit-text-stroke:0.15px #000;letter-spacing:0px;">Pennsylvania</div>
<div class="t" style="left:3px;top:405.03px;font-size:10.6px;-webkit-text-stroke:0.15px #000;letter-spacing:0px;">Pennsylvania</div>
<div class="t" style="left:3px;top:418.03px;font-size:10.6px;-webkit-text-stroke:0.15px #000;letter-spacing:0px;">Pennsylvania</div>
<div class="t" style="left:3px;top:431.03px;font-size:10.6px;-webkit-text-stroke:0.15px #000;letter-spacing:0px;">Pennsylvania</div>
<div class="t" style="left:3px;top:444.03px;font-size:10.6px;-webkit-text-stroke:0.15px #000;letter-spacing:0px;">Texas</div>
<div class="t" style="left:3px;top:457.03px;font-size:10.6px;-webkit-text-stroke:0.15px #000;letter-spacing:0px;">Texas</div>
<div class="t" style="left:3px;top:470.03px;font-size:10.6px;-webkit-text-stroke:0.15px #000;letter-spacing:0px;">Texas</div>
<div class="t" style="left:3px;top:483.03px;font-size:10.6px;-webkit-text-stroke:0.15px #000;letter-spacing:0px;">Texas</div>
<div class="t" style="left:3px;top:496.03px;font-size:10.6px;-webkit-text-stroke:0.15px #000;letter-spacing:0px;">Texas</div>
<div class="t" style="left:3px;top:509.03px;font-size:10.6px;-webkit-text-stroke:0.15px #000;letter-spacing:0px;">Texas</div>
<div class="t" style="left:3px;top:522.03px;font-size:10.6px;-webkit-text-stroke:0.15px #000;letter-spacing:0px;">Texas</div>
<div class="t" style="left:3px;top:535.03px;font-size:10.6px;-webkit-text-stroke:0.15px #000;letter-spacing:0px;">Illinois</div>
<div class="t" style="left:3px;top:548.03px;font-size:10.6px;-webkit-text-stroke:0.15px #000;letter-spacing:0px;">California</div>
<div class="t" style="left:3px;top:561.03px;font-size:10.6px;-webkit-text-stroke:0.15px #000;letter-spacing:0px;">Florida</div>
<div class="t" style="left:3px;top:574.03px;font-size:10.6px;-webkit-text-stroke:0.15px #000;letter-spacing:0px;">Minnesota</div>
<div class="t" style="left:3px;top:587.03px;font-size:10.6px;-webkit-text-stroke:0.15px #000;letter-spacing:0px;">Minnesota</div>
<div class="t" style="left:3px;top:600.03px;font-size:10.6px;-webkit-text-stroke:0.15px #000;letter-spacing:0px;">Michigan</div>
<div class="t" style="left:3px;top:613.03px;font-size:10.6px;-webkit-text-stroke:0.15px #000;letter-spacing:0px;">Delaware</div>
<div class="t" style="left:3px;top:626.03px;font-size:10.6px;-webkit-text-stroke:0.15px #000;letter-spacing:0px;">Delaware</div>
<div class="t" style="left:3px;top:639.03px;font-size:10.6px;-webkit-text-stroke:0.15px #000;letter-spacing:0px;">Indiana</div>
<div class="t" style="left:3px;top:652.03px;font-size:10.6px;-webkit-text-stroke:0.15px #000;letter-spacing:0px;">Indiana</div>
<div class="t" style="left:3px;top:665.03px;font-size:10.6px;-webkit-text-stroke:0.15px #000;letter-spacing:0px;">Indiana</div>
<div class="t" style="left:3px;top:678.03px;font-size:10.6px;-webkit-text-stroke:0.15px #000;letter-spacing:0px;">Indiana</div>
<div class="t" style="left:3px;top:691.03px;font-size:10.6px;-webkit-text-stroke:0.15px #000;letter-spacing:0px;">New York</div>
<div class="t" style="left:3px;top:704.03px;font-size:10.6px;-webkit-text-stroke:0.15px #000;letter-spacing:0px;">New York</div>
<div class="t" style="left:3px;top:717.03px;font-size:10.6px;-webkit-text-stroke:0.15px #000;letter-spacing:0px;">New York</div>
<div class="t" style="left:3px;top:730.03px;font-size:10.6px;-webkit-text-stroke:0.15px #000;letter-spacing:0px;">New York</div>
<div class="t" style="left:3px;top:743.03px;font-size:10.6px;-webkit-text-stroke:0.15px #000;letter-spacing:0px;">New York</div>
<div class="t" style="left:3px;top:756.03px;font-size:10.6px;-webkit-text-stroke:0.15px #000;letter-spacing:0px;">New York</div>
<div class="t" style="left:3px;top:769.03px;font-size:10.6px;-webkit-text-stroke:0.15px #000;letter-spacing:0px;">New York</div>
<div class="t" style="left:3px;top:782.03px;font-size:10.6px;-webkit-text-stroke:0.15px #000;letter-spacing:0px;">New York</div>
<div class="t" style="left:3px;top:795.03px;font-size:10.6px;-webkit-text-stroke:0.15px #000;letter-spacing:0px;">New York</div>
</div>
<div class="a" style="left:1810px;top:204px;width:82px;height:806px;overflow:hidden;">
<div class="t" style="right:3px;top:2.03px;font-size:10.6px;-webkit-text-stroke:0.15px #000;">42420</div>
<div class="t" style="right:3px;top:15.03px;font-size:10.6px;-webkit-text-stroke:0.15px #000;">42420</div>
<div class="t" style="right:3px;top:28.03px;font-size:10.6px;-webkit-text-stroke:0.15px #000;">90036</div>
<div class="t" style="right:3px;top:41.03px;font-size:10.6px;-webkit-text-stroke:0.15px #000;">33311</div>
<div class="t" style="right:3px;top:54.03px;font-size:10.6px;-webkit-text-stroke:0.15px #000;">33311</div>
<div class="t" style="right:3px;top:67.03px;font-size:10.6px;-webkit-text-stroke:0.15px #000;">90032</div>
<div class="t" style="right:3px;top:80.03px;font-size:10.6px;-webkit-text-stroke:0.15px #000;">90032</div>
<div class="t" style="right:3px;top:93.03px;font-size:10.6px;-webkit-text-stroke:0.15px #000;">90032</div>
<div class="t" style="right:3px;top:106.03px;font-size:10.6px;-webkit-text-stroke:0.15px #000;">90032</div>
<div class="t" style="right:3px;top:119.03px;font-size:10.6px;-webkit-text-stroke:0.15px #000;">90032</div>
<div class="t" style="right:3px;top:132.03px;font-size:10.6px;-webkit-text-stroke:0.15px #000;">90032</div>
<div class="t" style="right:3px;top:145.03px;font-size:10.6px;-webkit-text-stroke:0.15px #000;">90032</div>
<div class="t" style="right:3px;top:158.03px;font-size:10.6px;-webkit-text-stroke:0.15px #000;">28027</div>
<div class="t" style="right:3px;top:171.03px;font-size:10.6px;-webkit-text-stroke:0.15px #000;">98103</div>
<div class="t" style="right:3px;top:184.03px;font-size:10.6px;-webkit-text-stroke:0.15px #000;">76106</div>
<div class="t" style="right:3px;top:197.03px;font-size:10.6px;-webkit-text-stroke:0.15px #000;">76106</div>
<div class="t" style="right:3px;top:210.03px;font-size:10.6px;-webkit-text-stroke:0.15px #000;">53711</div>
<div class="t" style="right:3px;top:223.03px;font-size:10.6px;-webkit-text-stroke:0.15px #000;">84084</div>
<div class="t" style="right:3px;top:236.03px;font-size:10.6px;-webkit-text-stroke:0.15px #000;">94109</div>
<div class="t" style="right:3px;top:249.03px;font-size:10.6px;-webkit-text-stroke:0.15px #000;">94109</div>
<div class="t" style="right:3px;top:262.03px;font-size:10.6px;-webkit-text-stroke:0.15px #000;">94109</div>
<div class="t" style="right:3px;top:275.03px;font-size:10.6px;-webkit-text-stroke:0.15px #000;">68025</div>
<div class="t" style="right:3px;top:288.03px;font-size:10.6px;-webkit-text-stroke:0.15px #000;">68025</div>
<div class="t" style="right:3px;top:301.03px;font-size:10.6px;-webkit-text-stroke:0.15px #000;">19140</div>
<div class="t" style="right:3px;top:314.03px;font-size:10.6px;-webkit-text-stroke:0.15px #000;">84057</div>
<div class="t" style="right:3px;top:327.03px;font-size:10.6px;-webkit-text-stroke:0.15px #000;">90049</div>
<div class="t" style="right:3px;top:340.03px;font-size:10.6px;-webkit-text-stroke:0.15px #000;">90049</div>
<div class="t" style="right:3px;top:353.03px;font-size:10.6px;-webkit-text-stroke:0.15px #000;">19140</div>
<div class="t" style="right:3px;top:366.03px;font-size:10.6px;-webkit-text-stroke:0.15px #000;">19140</div>
<div class="t" style="right:3px;top:379.03px;font-size:10.6px;-webkit-text-stroke:0.15px #000;">19140</div>
<div class="t" style="right:3px;top:392.03px;font-size:10.6px;-webkit-text-stroke:0.15px #000;">19140</div>
<div class="t" style="right:3px;top:405.03px;font-size:10.6px;-webkit-text-stroke:0.15px #000;">19140</div>
<div class="t" style="right:3px;top:418.03px;font-size:10.6px;-webkit-text-stroke:0.15px #000;">19140</div>
<div class="t" style="right:3px;top:431.03px;font-size:10.6px;-webkit-text-stroke:0.15px #000;">19140</div>
<div class="t" style="right:3px;top:444.03px;font-size:10.6px;-webkit-text-stroke:0.15px #000;">77095</div>
<div class="t" style="right:3px;top:457.03px;font-size:10.6px;-webkit-text-stroke:0.15px #000;">75080</div>
<div class="t" style="right:3px;top:470.03px;font-size:10.6px;-webkit-text-stroke:0.15px #000;">75080</div>
<div class="t" style="right:3px;top:483.03px;font-size:10.6px;-webkit-text-stroke:0.15px #000;">77041</div>
<div class="t" style="right:3px;top:496.03px;font-size:10.6px;-webkit-text-stroke:0.15px #000;">77041</div>
<div class="t" style="right:3px;top:509.03px;font-size:10.6px;-webkit-text-stroke:0.15px #000;">77041</div>
<div class="t" style="right:3px;top:522.03px;font-size:10.6px;-webkit-text-stroke:0.15px #000;">77041</div>
<div class="t" style="right:3px;top:535.03px;font-size:10.6px;-webkit-text-stroke:0.15px #000;">60540</div>
<div class="t" style="right:3px;top:548.03px;font-size:10.6px;-webkit-text-stroke:0.15px #000;">90049</div>
<div class="t" style="right:3px;top:561.03px;font-size:10.6px;-webkit-text-stroke:0.15px #000;">32935</div>
<div class="t" style="right:3px;top:574.03px;font-size:10.6px;-webkit-text-stroke:0.15px #000;">55122</div>
<div class="t" style="right:3px;top:587.03px;font-size:10.6px;-webkit-text-stroke:0.15px #000;">55122</div>
<div class="t" style="right:3px;top:600.03px;font-size:10.6px;-webkit-text-stroke:0.15px #000;">48185</div>
<div class="t" style="right:3px;top:613.03px;font-size:10.6px;-webkit-text-stroke:0.15px #000;">19901</div>
<div class="t" style="right:3px;top:626.03px;font-size:10.6px;-webkit-text-stroke:0.15px #000;">19901</div>
<div class="t" style="right:3px;top:639.03px;font-size:10.6px;-webkit-text-stroke:0.15px #000;">47150</div>
<div class="t" style="right:3px;top:652.03px;font-size:10.6px;-webkit-text-stroke:0.15px #000;">47150</div>
<div class="t" style="right:3px;top:665.03px;font-size:10.6px;-webkit-text-stroke:0.15px #000;">47150</div>
<div class="t" style="right:3px;top:678.03px;font-size:10.6px;-webkit-text-stroke:0.15px #000;">47150</div>
<div class="t" style="right:3px;top:691.03px;font-size:10.6px;-webkit-text-stroke:0.15px #000;">10024</div>
<div class="t" style="right:3px;top:704.03px;font-size:10.6px;-webkit-text-stroke:0.15px #000;">10024</div>
<div class="t" style="right:3px;top:717.03px;font-size:10.6px;-webkit-text-stroke:0.15px #000;">12180</div>
<div class="t" style="right:3px;top:730.03px;font-size:10.6px;-webkit-text-stroke:0.15px #000;">12180</div>
<div class="t" style="right:3px;top:743.03px;font-size:10.6px;-webkit-text-stroke:0.15px #000;">12180</div>
<div class="t" style="right:3px;top:756.03px;font-size:10.6px;-webkit-text-stroke:0.15px #000;">12180</div>
<div class="t" style="right:3px;top:769.03px;font-size:10.6px;-webkit-text-stroke:0.15px #000;">12180</div>
<div class="t" style="right:3px;top:782.03px;font-size:10.6px;-webkit-text-stroke:0.15px #000;">12180</div>
<div class="t" style="right:3px;top:795.03px;font-size:10.6px;-webkit-text-stroke:0.15px #000;">12180</div>
</div>
<div class="a" style="left:1893px;top:204px;width:27px;height:806px;overflow:hidden;">
<div class="t" style="left:3px;top:2.03px;font-size:10.6px;-webkit-text-stroke:0.15px #000;letter-spacing:0px;">South</div>
<div class="t" style="left:3px;top:15.03px;font-size:10.6px;-webkit-text-stroke:0.15px #000;letter-spacing:0px;">South</div>
<div class="t" style="left:3px;top:28.03px;font-size:10.6px;-webkit-text-stroke:0.15px #000;letter-spacing:0px;">West</div>
<div class="t" style="left:3px;top:41.03px;font-size:10.6px;-webkit-text-stroke:0.15px #000;letter-spacing:0px;">South</div>
<div class="t" style="left:3px;top:54.03px;font-size:10.6px;-webkit-text-stroke:0.15px #000;letter-spacing:0px;">South</div>
<div class="t" style="left:3px;top:67.03px;font-size:10.6px;-webkit-text-stroke:0.15px #000;letter-spacing:0px;">West</div>
<div class="t" style="left:3px;top:80.03px;font-size:10.6px;-webkit-text-stroke:0.15px #000;letter-spacing:0px;">West</div>
<div class="t" style="left:3px;top:93.03px;font-size:10.6px;-webkit-text-stroke:0.15px #000;letter-spacing:0px;">West</div>
<div class="t" style="left:3px;top:106.03px;font-size:10.6px;-webkit-text-stroke:0.15px #000;letter-spacing:0px;">West</div>
<div class="t" style="left:3px;top:119.03px;font-size:10.6px;-webkit-text-stroke:0.15px #000;letter-spacing:0px;">West</div>
<div class="t" style="left:3px;top:132.03px;font-size:10.6px;-webkit-text-stroke:0.15px #000;letter-spacing:0px;">West</div>
<div class="t" style="left:3px;top:145.03px;font-size:10.6px;-webkit-text-stroke:0.15px #000;letter-spacing:0px;">West</div>
<div class="t" style="left:3px;top:158.03px;font-size:10.6px;-webkit-text-stroke:0.15px #000;letter-spacing:0px;">South</div>
<div class="t" style="left:3px;top:171.03px;font-size:10.6px;-webkit-text-stroke:0.15px #000;letter-spacing:0px;">West</div>
<div class="t" style="left:3px;top:184.03px;font-size:10.6px;-webkit-text-stroke:0.15px #000;letter-spacing:0px;">Central</div>
<div class="t" style="left:3px;top:197.03px;font-size:10.6px;-webkit-text-stroke:0.15px #000;letter-spacing:0px;">Central</div>
<div class="t" style="left:3px;top:210.03px;font-size:10.6px;-webkit-text-stroke:0.15px #000;letter-spacing:0px;">Central</div>
<div class="t" style="left:3px;top:223.03px;font-size:10.6px;-webkit-text-stroke:0.15px #000;letter-spacing:0px;">West</div>
<div class="t" style="left:3px;top:236.03px;font-size:10.6px;-webkit-text-stroke:0.15px #000;letter-spacing:0px;">West</div>
<div class="t" style="left:3px;top:249.03px;font-size:10.6px;-webkit-text-stroke:0.15px #000;letter-spacing:0px;">West</div>
<div class="t" style="left:3px;top:262.03px;font-size:10.6px;-webkit-text-stroke:0.15px #000;letter-spacing:0px;">West</div>
<div class="t" style="left:3px;top:275.03px;font-size:10.6px;-webkit-text-stroke:0.15px #000;letter-spacing:0px;">Central</div>
<div class="t" style="left:3px;top:288.03px;font-size:10.6px;-webkit-text-stroke:0.15px #000;letter-spacing:0px;">Central</div>
<div class="t" style="left:3px;top:301.03px;font-size:10.6px;-webkit-text-stroke:0.15px #000;letter-spacing:0px;">East</div>
<div class="t" style="left:3px;top:314.03px;font-size:10.6px;-webkit-text-stroke:0.15px #000;letter-spacing:0px;">West</div>
<div class="t" style="left:3px;top:327.03px;font-size:10.6px;-webkit-text-stroke:0.15px #000;letter-spacing:0px;">West</div>
<div class="t" style="left:3px;top:340.03px;font-size:10.6px;-webkit-text-stroke:0.15px #000;letter-spacing:0px;">West</div>
<div class="t" style="left:3px;top:353.03px;font-size:10.6px;-webkit-text-stroke:0.15px #000;letter-spacing:0px;">East</div>
<div class="t" style="left:3px;top:366.03px;font-size:10.6px;-webkit-text-stroke:0.15px #000;letter-spacing:0px;">East</div>
<div class="t" style="left:3px;top:379.03px;font-size:10.6px;-webkit-text-stroke:0.15px #000;letter-spacing:0px;">East</div>
<div class="t" style="left:3px;top:392.03px;font-size:10.6px;-webkit-text-stroke:0.15px #000;letter-spacing:0px;">East</div>
<div class="t" style="left:3px;top:405.03px;font-size:10.6px;-webkit-text-stroke:0.15px #000;letter-spacing:0px;">East</div>
<div class="t" style="left:3px;top:418.03px;font-size:10.6px;-webkit-text-stroke:0.15px #000;letter-spacing:0px;">East</div>
<div class="t" style="left:3px;top:431.03px;font-size:10.6px;-webkit-text-stroke:0.15px #000;letter-spacing:0px;">East</div>
<div class="t" style="left:3px;top:444.03px;font-size:10.6px;-webkit-text-stroke:0.15px #000;letter-spacing:0px;">Central</div>
<div class="t" style="left:3px;top:457.03px;font-size:10.6px;-webkit-text-stroke:0.15px #000;letter-spacing:0px;">Central</div>
<div class="t" style="left:3px;top:470.03px;font-size:10.6px;-webkit-text-stroke:0.15px #000;letter-spacing:0px;">Central</div>
<div class="t" style="left:3px;top:483.03px;font-size:10.6px;-webkit-text-stroke:0.15px #000;letter-spacing:0px;">Central</div>
<div class="t" style="left:3px;top:496.03px;font-size:10.6px;-webkit-text-stroke:0.15px #000;letter-spacing:0px;">Central</div>
<div class="t" style="left:3px;top:509.03px;font-size:10.6px;-webkit-text-stroke:0.15px #000;letter-spacing:0px;">Central</div>
<div class="t" style="left:3px;top:522.03px;font-size:10.6px;-webkit-text-stroke:0.15px #000;letter-spacing:0px;">Central</div>
<div class="t" style="left:3px;top:535.03px;font-size:10.6px;-webkit-text-stroke:0.15px #000;letter-spacing:0px;">Central</div>
<div class="t" style="left:3px;top:548.03px;font-size:10.6px;-webkit-text-stroke:0.15px #000;letter-spacing:0px;">West</div>
<div class="t" style="left:3px;top:561.03px;font-size:10.6px;-webkit-text-stroke:0.15px #000;letter-spacing:0px;">South</div>
<div class="t" style="left:3px;top:574.03px;font-size:10.6px;-webkit-text-stroke:0.15px #000;letter-spacing:0px;">Central</div>
<div class="t" style="left:3px;top:587.03px;font-size:10.6px;-webkit-text-stroke:0.15px #000;letter-spacing:0px;">Central</div>
<div class="t" style="left:3px;top:600.03px;font-size:10.6px;-webkit-text-stroke:0.15px #000;letter-spacing:0px;">Central</div>
<div class="t" style="left:3px;top:613.03px;font-size:10.6px;-webkit-text-stroke:0.15px #000;letter-spacing:0px;">East</div>
<div class="t" style="left:3px;top:626.03px;font-size:10.6px;-webkit-text-stroke:0.15px #000;letter-spacing:0px;">East</div>
<div class="t" style="left:3px;top:639.03px;font-size:10.6px;-webkit-text-stroke:0.15px #000;letter-spacing:0px;">Central</div>
<div class="t" style="left:3px;top:652.03px;font-size:10.6px;-webkit-text-stroke:0.15px #000;letter-spacing:0px;">Central</div>
<div class="t" style="left:3px;top:665.03px;font-size:10.6px;-webkit-text-stroke:0.15px #000;letter-spacing:0px;">Central</div>
<div class="t" style="left:3px;top:678.03px;font-size:10.6px;-webkit-text-stroke:0.15px #000;letter-spacing:0px;">Central</div>
<div class="t" style="left:3px;top:691.03px;font-size:10.6px;-webkit-text-stroke:0.15px #000;letter-spacing:0px;">East</div>
<div class="t" style="left:3px;top:704.03px;font-size:10.6px;-webkit-text-stroke:0.15px #000;letter-spacing:0px;">East</div>
<div class="t" style="left:3px;top:717.03px;font-size:10.6px;-webkit-text-stroke:0.15px #000;letter-spacing:0px;">East</div>
<div class="t" style="left:3px;top:730.03px;font-size:10.6px;-webkit-text-stroke:0.15px #000;letter-spacing:0px;">East</div>
<div class="t" style="left:3px;top:743.03px;font-size:10.6px;-webkit-text-stroke:0.15px #000;letter-spacing:0px;">East</div>
<div class="t" style="left:3px;top:756.03px;font-size:10.6px;-webkit-text-stroke:0.15px #000;letter-spacing:0px;">East</div>
<div class="t" style="left:3px;top:769.03px;font-size:10.6px;-webkit-text-stroke:0.15px #000;letter-spacing:0px;">East</div>
<div class="t" style="left:3px;top:782.03px;font-size:10.6px;-webkit-text-stroke:0.15px #000;letter-spacing:0px;">East</div>
<div class="t" style="left:3px;top:795.03px;font-size:10.6px;-webkit-text-stroke:0.15px #000;letter-spacing:0px;">East</div>
</div>
<div class="a" style="left:960px;top:1009px;width:960px;height:26px;background:#efefef;"></div>
<div class="a" style="left:960px;top:1009px;width:960px;height:1px;background:#d0d0d0;"></div>
<svg class="a" style="left:973px;top:1017px;" width="10" height="10" viewBox="0 0 10 10"><path d="M8 0.5 V9.5 L1 5 Z" fill="#b8b8b8"/></svg>
<svg class="a" style="left:997px;top:1017px;" width="10" height="10" viewBox="0 0 10 10"><path d="M2 0.5 V9.5 L9 5 Z" fill="#b8b8b8"/></svg>
<div class="a" style="left:1018px;top:1011px;width:1px;height:22px;background:#d6d6d6;"></div>
<div class="a" style="left:1024px;top:1011.5px;width:72px;height:20px;background:#6cb248;"></div>
<div class="t" style="left:760px;width:600px;text-align:center;top:1015.84px;font-size:12px;color:#10200c;font-weight:bold;">Tables</div>
<div class="a" style="left:1101px;top:1011.5px;width:76px;height:20px;background:linear-gradient(#f4f4f4,#e2e2e2);box-shadow:0 1px 1px rgba(0,0,0,0.3);"></div>
<div class="t" style="left:839px;width:600px;text-align:center;top:1015.84px;font-size:12px;color:#4a9a55;font-weight:bold;">Data</div>
<div class="a" style="left:1180px;top:1011px;width:1px;height:22px;background:#d6d6d6;"></div>
<svg class="a" style="left:1191px;top:1016px;" width="12" height="12" viewBox="0 0 12 12"><path d="M6 1 V11 M1 6 H11" stroke="#555" stroke-width="1.6"/></svg>
<div class="a" style="left:1217px;top:1011px;width:1px;height:22px;background:#d6d6d6;"></div>
<div class="a" style="left:960px;top:1035px;width:960px;height:16px;background:linear-gradient(#dcdcdc,#d2d2d2);"></div>
<div class="a" style="left:960px;top:1035px;width:960px;height:1px;background:#bdbdbd;"></div>
<div class="t" style="left:984px;top:1040.92px;font-size:12.5px;color:#555;font-weight:normal;">Enter</div>
<svg class="a" style="left:1034px;top:1040px;" width="16" height="12" viewBox="0 0 16 12"><circle cx="3" cy="3" r="2.2" fill="#555"/><path d="M3 5 V12 M0 11 H6 M6 1.5 H14 M10 1.5 V12 M12 1 L14 3" stroke="#555" stroke-width="1.2" fill="none"/></svg>
<div class="a" style="left:1602px;top:1035.5px;width:37px;height:16px;background:#b3b3b3;"></div>
<svg class="a" style="left:1613px;top:1040px;" width="14" height="12" viewBox="0 0 14 12"><rect x="0.5" y="0.5" width="13" height="12" fill="none" stroke="#fff"/><path d="M0.5 4.5H13.5M0.5 8.5H13.5M4.5 0.5V12.5M9.5 0.5V12.5" stroke="#fff"/></svg>
<svg class="a" style="left:1649px;top:1040px;" width="14" height="12" viewBox="0 0 14 12"><rect x="0.5" y="0.5" width="13" height="12" fill="none" stroke="#666"/><rect x="3.5" y="3.5" width="7" height="9" fill="none" stroke="#666"/><path d="M5 6H9M5 8H9" stroke="#666"/></svg>
<svg class="a" style="left:1685px;top:1040px;" width="14" height="12" viewBox="0 0 14 12"><path d="M0.5 12V0.5H13.5V12M5 0.5V6H9V0.5" stroke="#666" fill="none"/></svg>
<div class="a" style="left:1718px;top:1045px;width:8px;height:1.6px;background:#555;"></div>
<div class="a" style="left:1735px;top:1044.5px;width:97px;height:3px;background:#9c9c9c;border-radius:1.5px;"></div>
<svg class="a" style="left:1775px;top:1038px;" width="16" height="14" viewBox="0 0 16 14"><circle cx="8" cy="8" r="6.5" fill="#fff" stroke="#aaa"/></svg>
<svg class="a" style="left:1839px;top:1040px;" width="11" height="11" viewBox="0 0 11 11"><path d="M5.5 0.5V10.5M0.5 5.5H10.5" stroke="#555" stroke-width="1.6"/></svg>
<div class="t" style="left:1866px;top:1040.92px;font-size:12.5px;color:#666;font-weight:normal;">100%</div>
<div class="a" style="left:960px;top:33px;width:6px;height:1018px;background:linear-gradient(90deg,rgba(0,0,0,0.10),rgba(0,0,0,0));"></div>
</body></html>
